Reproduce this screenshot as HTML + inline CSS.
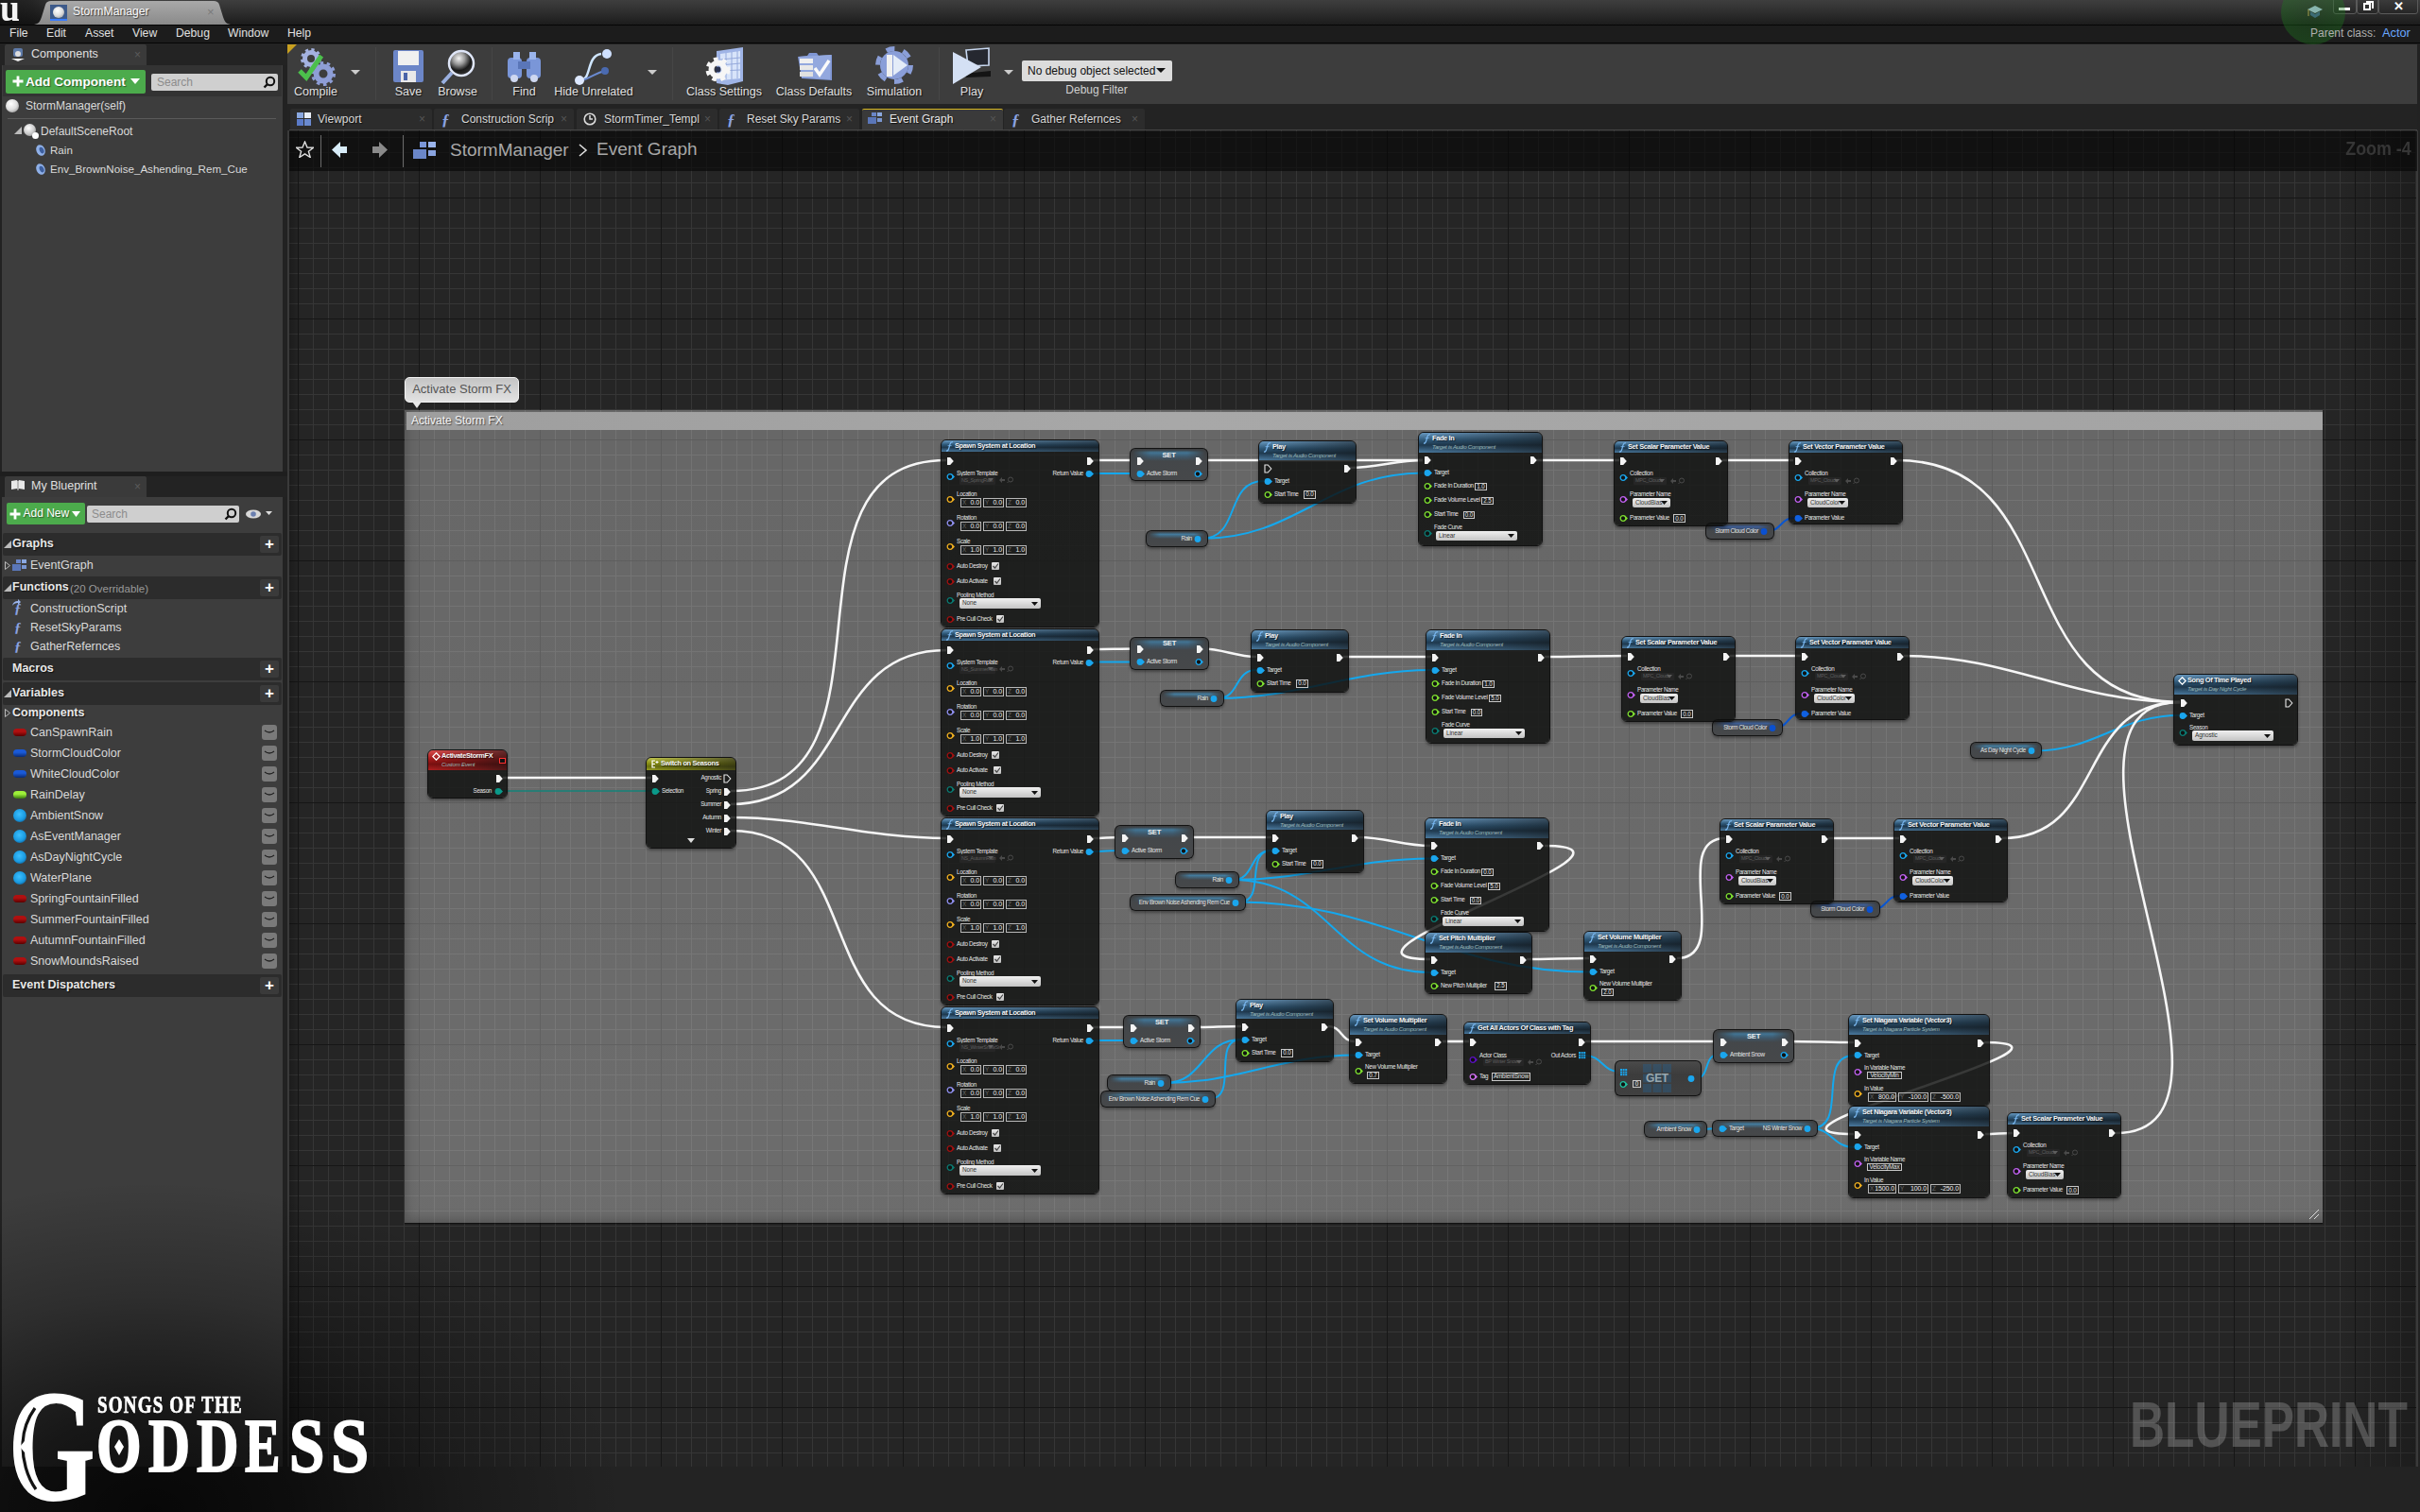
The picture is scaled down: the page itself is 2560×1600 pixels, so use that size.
<!DOCTYPE html><html><head><meta charset="utf-8"><title>StormManager</title><style>
html,body{margin:0;padding:0;width:2560px;height:1600px;overflow:hidden;background:#222;font-family:"Liberation Sans",sans-serif;}
body div,body svg{position:absolute;box-sizing:border-box;}
.t{white-space:nowrap;}
</style></head><body>
<div style="left:0px;top:0px;width:2560px;height:1600px;background:#222;"></div>
<div style="left:0px;top:0px;width:2560px;height:26px;background:linear-gradient(#3e3e3e 0%,#2e2e2e 50%,#1c1c1c 100%);"></div>
<div style="left:0px;top:0px;width:70px;height:26px;background:linear-gradient(to right,rgba(8,8,8,0.6),rgba(8,8,8,0.45) 50%,rgba(8,8,8,0));"></div>
<div class="t" style="left:0px;top:-12px;font-size:41px;line-height:41px;font-family:'Liberation Serif',serif;font-weight:bold;color:#f4f4f4;transform-origin:0 0;transform:scaleX(0.92);">u</div>
<svg style="left:30px;top:0px" width="225" height="27"><defs><linearGradient id="tg" x1="0" y1="0" x2="0" y2="1"><stop offset="0" stop-color="#a9a9a9"/><stop offset="1" stop-color="#8a8a8a"/></linearGradient></defs><path d="M4 26 C10 26 12 24 14 18 L18 5 C19 2 21 1 24 1 L196 1 C199 1 201 2 202 5 L206 18 C208 24 210 26 216 26 Z" fill="url(#tg)"/></svg>
<div style="left:53px;top:5px;width:18px;height:17px;background:#3d5a8a;border-bottom:2px solid #3a7cff;"></div>
<div style="left:56px;top:7px;width:12px;height:12px;border-radius:50%;background:radial-gradient(circle at 40% 35%,#fff 0%,#ddd 50%,#888 100%);"></div>
<div class="t" style="left:77px;top:4.88px;font-size:12.2px;line-height:15.25px;color:#fafafa;text-shadow:1px 1px 1px #333;">StormManager</div>
<div class="t" style="left:219px;top:4.88px;font-size:13px;line-height:16.25px;color:#7a7a7a;">×</div>
<div style="left:2468px;top:-2px;width:25px;height:17px;background:linear-gradient(#3c3c3c,#262626);border:1px solid #5a5a5a;border-radius:0 0 3px 3px;"></div>
<div style="left:2493px;top:-2px;width:23px;height:17px;background:linear-gradient(#3c3c3c,#262626);border:1px solid #5a5a5a;border-radius:0 0 3px 3px;"></div>
<div style="left:2516px;top:-2px;width:42px;height:17px;background:linear-gradient(#3c3c3c,#262626);border:1px solid #5a5a5a;border-radius:0 0 3px 3px;"></div>
<div style="left:2474px;top:8px;width:12px;height:3px;background:#fff;"></div>
<div style="left:2500px;top:3px;width:8px;height:8px;border:2px solid #fff;"></div>
<div style="left:2503px;top:1px;width:8px;height:8px;border-top:2px solid #fff;border-right:2px solid #fff;"></div>
<div class="t" style="left:2037px;width:1000px;text-align:center;top:-1.12px;font-size:13px;line-height:16.25px;color:#fff;font-weight:bold;">✕</div>
<svg style="left:2440px;top:4px" width="18" height="16"><path d="M1 6 L9 2 L17 6 L9 10 Z" fill="#b8d4f0"/><path d="M4 8 L4 12 L9 15 L14 12 L14 8 L9 11 Z" fill="#4a6a9a"/><path d="M2 6 L2 13" stroke="#e0b060" stroke-width="1"/></svg>
<div style="left:0px;top:26px;width:2560px;height:20px;background:#1c1c1c;border-top:1px solid #050505;border-bottom:1px solid #050505;"></div>
<div class="t" style="left:10px;top:27.88px;font-size:12.2px;line-height:15.25px;color:#e0e0e0;">File</div>
<div class="t" style="left:49px;top:27.88px;font-size:12.2px;line-height:15.25px;color:#e0e0e0;">Edit</div>
<div class="t" style="left:90px;top:27.88px;font-size:12.2px;line-height:15.25px;color:#e0e0e0;">Asset</div>
<div class="t" style="left:140px;top:27.88px;font-size:12.2px;line-height:15.25px;color:#e0e0e0;">View</div>
<div class="t" style="left:186px;top:27.88px;font-size:12.2px;line-height:15.25px;color:#e0e0e0;">Debug</div>
<div class="t" style="left:241px;top:27.88px;font-size:12.2px;line-height:15.25px;color:#e0e0e0;">Window</div>
<div class="t" style="left:304px;top:27.88px;font-size:12.2px;line-height:15.25px;color:#e0e0e0;">Help</div>
<div style="left:2413px;top:-21px;width:68px;height:68px;border-radius:50%;background:radial-gradient(circle,rgba(30,110,30,0.30) 0%,rgba(30,120,30,0.38) 70%,rgba(30,120,30,0) 100%);"></div>
<div class="t" style="left:2444px;top:27.50px;font-size:12px;line-height:15.0px;color:#b0b0b0;">Parent class:</div>
<div class="t" style="left:2520px;top:27.00px;font-size:12.8px;line-height:16.0px;color:#6aa8ff;">Actor</div>
<div style="left:0px;top:46px;width:304px;height:23px;background:#232323;"></div>
<div style="left:5px;top:47px;width:150px;height:22px;background:#3a3a3a;border-radius:2px 2px 0 0;"></div>
<svg style="left:11px;top:50px" width="16" height="16"><rect x="3" y="1" width="10" height="9" rx="2" fill="#5e7aa8"/><circle cx="8" cy="7" r="3" fill="#ddd"/><path d="M1 12 L15 12 L8 15 Z" fill="#eee"/></svg>
<div class="t" style="left:33px;top:50.19px;font-size:12.5px;line-height:15.62px;color:#e0e0e0;">Components</div>
<div class="t" style="left:142px;top:50.50px;font-size:12px;line-height:15.0px;color:#5a5a5a;">×</div>
<div style="left:2px;top:69px;width:297px;height:430px;background:#3d3d3d;"></div>
<div style="left:3px;top:69px;width:295px;height:33px;background:#333;"></div>
<div style="left:6px;top:74px;width:148px;height:25px;background:#4cab4c;border-radius:2px;"></div>
<svg style="left:13px;top:80px" width="12" height="12"><path d="M6 0.5 L6 11.5 M0.5 6 L11.5 6" stroke="#fff" stroke-width="2.8"/></svg>
<div class="t" style="left:27px;top:78.00px;font-size:13.6px;line-height:17.0px;color:#fff;font-weight:bold;text-shadow:1px 1px 1px #2a5a2a;">Add Component</div>
<svg style="left:138px;top:83px" width="10" height="7"><path d="M0 0 L10 0 L5 6 Z" fill="#fff"/></svg>
<div style="left:160px;top:78px;width:134px;height:18px;background:#cfcfcf;border-radius:2px;"></div>
<div class="t" style="left:166px;top:79.50px;font-size:12px;line-height:15.0px;color:#8c8c8c;">Search</div>
<svg style="left:278px;top:80px" width="14" height="14"><circle cx="8" cy="6" r="4.2" fill="none" stroke="#111" stroke-width="2"/><path d="M5 9 L1.5 12.5" stroke="#111" stroke-width="2.4"/></svg>
<div style="left:6px;top:105px;width:14px;height:14px;border-radius:50%;background:radial-gradient(circle at 40% 35%,#fff 0%,#ddd 50%,#777 100%);"></div>
<div class="t" style="left:27px;top:104.50px;font-size:12px;line-height:15.0px;color:#dadada;">StormManager(self)</div>
<div style="left:8px;top:125px;width:284px;height:1px;background:#5a5a5a;"></div>
<svg style="left:15px;top:134px" width="8" height="8"><path d="M8 0 L8 8 L0 8 Z" fill="#bbb"/></svg>
<div style="left:25px;top:131px;width:13px;height:13px;border-radius:50%;background:radial-gradient(circle at 40% 35%,#fff 0%,#ccc 50%,#777 100%);"></div>
<div style="left:34px;top:140px;width:7px;height:7px;border-radius:50%;background:#fff;"></div>
<div class="t" style="left:43px;top:131.50px;font-size:12px;line-height:15.0px;color:#dadada;">DefaultSceneRoot</div>
<svg style="left:37px;top:152px" width="12" height="14"><ellipse cx="6" cy="7" rx="4.5" ry="6" fill="#8fb0e8" transform="rotate(-25 6 7)"/><ellipse cx="7" cy="7.5" rx="2.2" ry="3.5" fill="#3d5f9f" transform="rotate(-25 6 7)"/></svg>
<div class="t" style="left:53px;top:151.75px;font-size:11.6px;line-height:14.5px;color:#dadada;">Rain</div>
<svg style="left:37px;top:172px" width="12" height="14"><ellipse cx="6" cy="7" rx="4.5" ry="6" fill="#8fb0e8" transform="rotate(-25 6 7)"/><ellipse cx="7" cy="7.5" rx="2.2" ry="3.5" fill="#3d5f9f" transform="rotate(-25 6 7)"/></svg>
<div class="t" style="left:53px;top:171.75px;font-size:11.6px;line-height:14.5px;color:#dadada;">Env_BrownNoise_Ashending_Rem_Cue</div>
<div style="left:0px;top:499px;width:304px;height:5px;background:#1e1e1e;"></div>
<div style="left:0px;top:504px;width:304px;height:22px;background:#232323;"></div>
<div style="left:5px;top:504px;width:150px;height:22px;background:#3a3a3a;border-radius:2px 2px 0 0;"></div>
<svg style="left:11px;top:507px" width="16" height="14"><path d="M1 2 L7 1 L8 3 L9 1 L15 2 L15 11 L9 10 L8 12 L7 10 L1 11 Z" fill="#e8e8e8"/><path d="M8 3 L8 12" stroke="#888" stroke-width="1"/></svg>
<div class="t" style="left:33px;top:507.19px;font-size:12.5px;line-height:15.62px;color:#e0e0e0;">My Blueprint</div>
<div class="t" style="left:142px;top:507.50px;font-size:12px;line-height:15.0px;color:#5a5a5a;">×</div>
<div style="left:2px;top:526px;width:297px;height:1026px;background:#3d3d3d;"></div>
<div style="left:7px;top:532px;width:83px;height:23px;background:#4cab4c;border-radius:2px;"></div>
<svg style="left:10px;top:538px" width="12" height="12"><path d="M6 0.5 L6 11.5 M0.5 6 L11.5 6" stroke="#fff" stroke-width="2.8"/></svg>
<div class="t" style="left:24.5px;top:536.00px;font-size:12px;line-height:15.0px;color:#fff;text-shadow:1px 1px 1px #2a5a2a;">Add New</div>
<svg style="left:76px;top:541px" width="9" height="6"><path d="M0 0 L9 0 L4.5 6 Z" fill="#fff"/></svg>
<div style="left:92px;top:535px;width:161px;height:18px;background:#cfcfcf;border-radius:2px;"></div>
<div class="t" style="left:97px;top:536.50px;font-size:12px;line-height:15.0px;color:#8c8c8c;">Search</div>
<svg style="left:237px;top:537px" width="14" height="14"><circle cx="8" cy="6" r="4.2" fill="none" stroke="#111" stroke-width="2"/><path d="M5 9 L1.5 12.5" stroke="#111" stroke-width="2.4"/></svg>
<svg style="left:259px;top:538px" width="30" height="12"><ellipse cx="9" cy="6" rx="8" ry="4.5" fill="#d8d8d8"/><circle cx="9" cy="6" r="2.8" fill="#6a7fb0"/><path d="M22 3 L29 3 L25.5 7 Z" fill="#ddd"/></svg>
<div style="left:3px;top:564px;width:295px;height:24px;background:#2c2c2c;border-radius:2px;"></div>
<svg style="left:4px;top:572px" width="8" height="8"><path d="M8 0 L8 8 L0 8 Z" fill="#bbb"/></svg>
<div class="t" style="left:13px;top:568.19px;font-size:12.5px;line-height:15.62px;color:#e8e8e8;font-weight:bold;text-shadow:1px 1px 1px #111;">Graphs</div>
<div style="left:275px;top:567px;width:20px;height:18px;background:#3a3a3a;border-radius:2px;"></div>
<div class="t" style="left:-215px;width:1000px;text-align:center;top:567.00px;font-size:17px;line-height:18px;color:#fff;font-weight:bold;">+</div>
<svg style="left:5px;top:594px" width="6" height="9"><path d="M0.5 0.5 L5.5 4.5 L0.5 8.5 Z" fill="none" stroke="#bbb" stroke-width="1"/></svg>
<svg style="left:13px;top:591px" width="16" height="15"><rect x="4" y="1" width="5" height="4" fill="#6a86c8"/><rect x="10" y="1" width="5" height="4" fill="#8aa8e0"/><rect x="0" y="6" width="9" height="7" fill="#5a76b8"/><rect x="10" y="7" width="5" height="4" fill="#7a96d0"/></svg>
<div class="t" style="left:32px;top:590.69px;font-size:12.5px;line-height:15.62px;color:#dadada;">EventGraph</div>
<div style="left:3px;top:610px;width:295px;height:24px;background:#2c2c2c;border-radius:2px;"></div>
<svg style="left:4px;top:618px" width="8" height="8"><path d="M8 0 L8 8 L0 8 Z" fill="#bbb"/></svg>
<div class="t" style="left:13px;top:614.19px;font-size:12.5px;line-height:15.62px;color:#e8e8e8;font-weight:bold;text-shadow:1px 1px 1px #111;">Functions</div>
<div class="t" style="left:74px;top:615.81px;font-size:11.5px;line-height:14.38px;color:#9a9a9a;">(20 Overridable)</div>
<div style="left:275px;top:613px;width:20px;height:18px;background:#3a3a3a;border-radius:2px;"></div>
<div class="t" style="left:-215px;width:1000px;text-align:center;top:613.00px;font-size:17px;line-height:18px;color:#fff;font-weight:bold;">+</div>
<div class="t" style="left:15px;top:635.33px;font-size:15px;line-height:18.75px;color:#8aa2e0;font-weight:bold;font-style:italic;font-family:'Liberation Serif',serif;">ƒ</div>
<svg style="left:12px;top:633.7px" width="10" height="8"><path d="M1 7 Q2 2 7 2 L7 0 L10 3 L7 6 L7 4 Q3 4 1 7 Z" fill="#9ab4ec"/></svg>
<div class="t" style="left:32px;top:636.89px;font-size:12.5px;line-height:15.62px;color:#dadada;">ConstructionScript</div>
<div class="t" style="left:15px;top:655.23px;font-size:15px;line-height:18.75px;color:#8aa2e0;font-weight:bold;font-style:italic;font-family:'Liberation Serif',serif;">ƒ</div>
<div class="t" style="left:32px;top:656.79px;font-size:12.5px;line-height:15.62px;color:#dadada;">ResetSkyParams</div>
<div class="t" style="left:15px;top:675.23px;font-size:15px;line-height:18.75px;color:#8aa2e0;font-weight:bold;font-style:italic;font-family:'Liberation Serif',serif;">ƒ</div>
<div class="t" style="left:32px;top:676.79px;font-size:12.5px;line-height:15.62px;color:#dadada;">GatherRefernces</div>
<div style="left:3px;top:696px;width:295px;height:24px;background:#2c2c2c;border-radius:2px;"></div>
<div class="t" style="left:13px;top:700.19px;font-size:12.5px;line-height:15.62px;color:#e8e8e8;font-weight:bold;text-shadow:1px 1px 1px #111;">Macros</div>
<div style="left:275px;top:699px;width:20px;height:18px;background:#3a3a3a;border-radius:2px;"></div>
<div class="t" style="left:-215px;width:1000px;text-align:center;top:699.00px;font-size:17px;line-height:18px;color:#fff;font-weight:bold;">+</div>
<div style="left:3px;top:722px;width:295px;height:24px;background:#2c2c2c;border-radius:2px;"></div>
<svg style="left:4px;top:730px" width="8" height="8"><path d="M8 0 L8 8 L0 8 Z" fill="#bbb"/></svg>
<div class="t" style="left:13px;top:726.19px;font-size:12.5px;line-height:15.62px;color:#e8e8e8;font-weight:bold;text-shadow:1px 1px 1px #111;">Variables</div>
<div style="left:275px;top:725px;width:20px;height:18px;background:#3a3a3a;border-radius:2px;"></div>
<div class="t" style="left:-215px;width:1000px;text-align:center;top:725.00px;font-size:17px;line-height:18px;color:#fff;font-weight:bold;">+</div>
<svg style="left:5px;top:750px" width="6" height="9"><path d="M0.5 0.5 L5.5 4.5 L0.5 8.5 Z" fill="none" stroke="#bbb" stroke-width="1"/></svg>
<div class="t" style="left:13px;top:747.19px;font-size:12.5px;line-height:15.62px;color:#e8e8e8;font-weight:bold;text-shadow:1px 1px 1px #111;">Components</div>
<div style="left:14px;top:771.4px;width:14px;height:8px;border-radius:4px;background:linear-gradient(#b01010 40%,#5a0000 100%);"></div>
<div class="t" style="left:32px;top:767.59px;font-size:12.5px;line-height:15.62px;color:#dadada;">CanSpawnRain</div>
<div style="left:277px;top:767.4px;width:16px;height:16px;background:#7a7a7a;border-radius:3px;"></div>
<svg style="left:279px;top:772.4px" width="12" height="5"><path d="M1 1 Q6 5 11 1" fill="none" stroke="#222" stroke-width="1.3"/></svg>
<div style="left:14px;top:793.4px;width:14px;height:8px;border-radius:4px;background:linear-gradient(#1a5ad8 40%,#0a2a70 100%);"></div>
<div class="t" style="left:32px;top:789.59px;font-size:12.5px;line-height:15.62px;color:#dadada;">StormCloudColor</div>
<div style="left:277px;top:789.4px;width:16px;height:16px;background:#7a7a7a;border-radius:3px;"></div>
<svg style="left:279px;top:794.4px" width="12" height="5"><path d="M1 1 Q6 5 11 1" fill="none" stroke="#222" stroke-width="1.3"/></svg>
<div style="left:14px;top:815.4px;width:14px;height:8px;border-radius:4px;background:linear-gradient(#1a5ad8 40%,#0a2a70 100%);"></div>
<div class="t" style="left:32px;top:811.59px;font-size:12.5px;line-height:15.62px;color:#dadada;">WhiteCloudColor</div>
<div style="left:277px;top:811.4px;width:16px;height:16px;background:#7a7a7a;border-radius:3px;"></div>
<svg style="left:279px;top:816.4px" width="12" height="5"><path d="M1 1 Q6 5 11 1" fill="none" stroke="#222" stroke-width="1.3"/></svg>
<div style="left:14px;top:837.4px;width:14px;height:8px;border-radius:4px;background:linear-gradient(#9ef03a 40%,#3a7a10 100%);"></div>
<div class="t" style="left:32px;top:833.59px;font-size:12.5px;line-height:15.62px;color:#dadada;">RainDelay</div>
<div style="left:277px;top:833.4px;width:16px;height:16px;background:#7a7a7a;border-radius:3px;"></div>
<svg style="left:279px;top:838.4px" width="12" height="5"><path d="M1 1 Q6 5 11 1" fill="none" stroke="#222" stroke-width="1.3"/></svg>
<div style="left:14px;top:856.4px;width:14px;height:14px;border-radius:50%;background:radial-gradient(circle at 45% 40%,#3cc0ff 0%,#1a9ae0 55%,#0a3a66 100%);"></div>
<div class="t" style="left:32px;top:855.59px;font-size:12.5px;line-height:15.62px;color:#dadada;">AmbientSnow</div>
<div style="left:277px;top:855.4px;width:16px;height:16px;background:#7a7a7a;border-radius:3px;"></div>
<svg style="left:279px;top:860.4px" width="12" height="5"><path d="M1 1 Q6 5 11 1" fill="none" stroke="#222" stroke-width="1.3"/></svg>
<div style="left:14px;top:878.4px;width:14px;height:14px;border-radius:50%;background:radial-gradient(circle at 45% 40%,#3cc0ff 0%,#1a9ae0 55%,#0a3a66 100%);"></div>
<div class="t" style="left:32px;top:877.59px;font-size:12.5px;line-height:15.62px;color:#dadada;">AsEventManager</div>
<div style="left:277px;top:877.4px;width:16px;height:16px;background:#7a7a7a;border-radius:3px;"></div>
<svg style="left:279px;top:882.4px" width="12" height="5"><path d="M1 1 Q6 5 11 1" fill="none" stroke="#222" stroke-width="1.3"/></svg>
<div style="left:14px;top:900.4px;width:14px;height:14px;border-radius:50%;background:radial-gradient(circle at 45% 40%,#3cc0ff 0%,#1a9ae0 55%,#0a3a66 100%);"></div>
<div class="t" style="left:32px;top:899.59px;font-size:12.5px;line-height:15.62px;color:#dadada;">AsDayNightCycle</div>
<div style="left:277px;top:899.4px;width:16px;height:16px;background:#7a7a7a;border-radius:3px;"></div>
<svg style="left:279px;top:904.4px" width="12" height="5"><path d="M1 1 Q6 5 11 1" fill="none" stroke="#222" stroke-width="1.3"/></svg>
<div style="left:14px;top:922.4px;width:14px;height:14px;border-radius:50%;background:radial-gradient(circle at 45% 40%,#3cc0ff 0%,#1a9ae0 55%,#0a3a66 100%);"></div>
<div class="t" style="left:32px;top:921.59px;font-size:12.5px;line-height:15.62px;color:#dadada;">WaterPlane</div>
<div style="left:277px;top:921.4px;width:16px;height:16px;background:#7a7a7a;border-radius:3px;"></div>
<svg style="left:279px;top:926.4px" width="12" height="5"><path d="M1 1 Q6 5 11 1" fill="none" stroke="#222" stroke-width="1.3"/></svg>
<div style="left:14px;top:947.4px;width:14px;height:8px;border-radius:4px;background:linear-gradient(#b01010 40%,#5a0000 100%);"></div>
<div class="t" style="left:32px;top:943.59px;font-size:12.5px;line-height:15.62px;color:#dadada;">SpringFountainFilled</div>
<div style="left:277px;top:943.4px;width:16px;height:16px;background:#7a7a7a;border-radius:3px;"></div>
<svg style="left:279px;top:948.4px" width="12" height="5"><path d="M1 1 Q6 5 11 1" fill="none" stroke="#222" stroke-width="1.3"/></svg>
<div style="left:14px;top:969.4px;width:14px;height:8px;border-radius:4px;background:linear-gradient(#b01010 40%,#5a0000 100%);"></div>
<div class="t" style="left:32px;top:965.59px;font-size:12.5px;line-height:15.62px;color:#dadada;">SummerFountainFilled</div>
<div style="left:277px;top:965.4px;width:16px;height:16px;background:#7a7a7a;border-radius:3px;"></div>
<svg style="left:279px;top:970.4px" width="12" height="5"><path d="M1 1 Q6 5 11 1" fill="none" stroke="#222" stroke-width="1.3"/></svg>
<div style="left:14px;top:991.4px;width:14px;height:8px;border-radius:4px;background:linear-gradient(#b01010 40%,#5a0000 100%);"></div>
<div class="t" style="left:32px;top:987.59px;font-size:12.5px;line-height:15.62px;color:#dadada;">AutumnFountainFilled</div>
<div style="left:277px;top:987.4px;width:16px;height:16px;background:#7a7a7a;border-radius:3px;"></div>
<svg style="left:279px;top:992.4px" width="12" height="5"><path d="M1 1 Q6 5 11 1" fill="none" stroke="#222" stroke-width="1.3"/></svg>
<div style="left:14px;top:1013.4px;width:14px;height:8px;border-radius:4px;background:linear-gradient(#b01010 40%,#5a0000 100%);"></div>
<div class="t" style="left:32px;top:1009.59px;font-size:12.5px;line-height:15.62px;color:#dadada;">SnowMoundsRaised</div>
<div style="left:277px;top:1009.4px;width:16px;height:16px;background:#7a7a7a;border-radius:3px;"></div>
<svg style="left:279px;top:1014.4px" width="12" height="5"><path d="M1 1 Q6 5 11 1" fill="none" stroke="#222" stroke-width="1.3"/></svg>
<div style="left:3px;top:1031px;width:295px;height:24px;background:#2c2c2c;border-radius:2px;"></div>
<div class="t" style="left:13px;top:1035.19px;font-size:12.5px;line-height:15.62px;color:#e8e8e8;font-weight:bold;text-shadow:1px 1px 1px #111;">Event Dispatchers</div>
<div style="left:275px;top:1034px;width:20px;height:18px;background:#3a3a3a;border-radius:2px;"></div>
<div class="t" style="left:-215px;width:1000px;text-align:center;top:1034.00px;font-size:17px;line-height:18px;color:#fff;font-weight:bold;">+</div>
<div style="left:304px;top:47px;width:2253px;height:63px;background:#3d3d3d;"></div>
<svg style="left:304px;top:47px" width="10" height="10"><path d="M0 0 L10 0 L0 10 Z" fill="#c8a020"/></svg>
<div style="left:397px;top:50px;width:1px;height:56px;background:#2a2a2a;border-right:1px solid #464646;"></div>
<div style="left:520px;top:50px;width:1px;height:56px;background:#2a2a2a;border-right:1px solid #464646;"></div>
<div style="left:711px;top:50px;width:1px;height:56px;background:#2a2a2a;border-right:1px solid #464646;"></div>
<div style="left:993px;top:50px;width:1px;height:56px;background:#2a2a2a;border-right:1px solid #464646;"></div>
<div class="t" style="left:-166px;width:1000px;text-align:center;top:89.69px;font-size:12.5px;line-height:15.62px;color:#e0e0e0;text-shadow:1px 1px 1px #111;">Compile</div>
<div class="t" style="left:-68px;width:1000px;text-align:center;top:89.69px;font-size:12.5px;line-height:15.62px;color:#e0e0e0;text-shadow:1px 1px 1px #111;">Save</div>
<div class="t" style="left:-16px;width:1000px;text-align:center;top:89.69px;font-size:12.5px;line-height:15.62px;color:#e0e0e0;text-shadow:1px 1px 1px #111;">Browse</div>
<div class="t" style="left:54.5px;width:1000px;text-align:center;top:89.69px;font-size:12.5px;line-height:15.62px;color:#e0e0e0;text-shadow:1px 1px 1px #111;">Find</div>
<div class="t" style="left:128px;width:1000px;text-align:center;top:89.69px;font-size:12.5px;line-height:15.62px;color:#e0e0e0;text-shadow:1px 1px 1px #111;">Hide Unrelated</div>
<div class="t" style="left:266px;width:1000px;text-align:center;top:89.69px;font-size:12.5px;line-height:15.62px;color:#e0e0e0;text-shadow:1px 1px 1px #111;">Class Settings</div>
<div class="t" style="left:361px;width:1000px;text-align:center;top:89.69px;font-size:12.5px;line-height:15.62px;color:#e0e0e0;text-shadow:1px 1px 1px #111;">Class Defaults</div>
<div class="t" style="left:446px;width:1000px;text-align:center;top:89.69px;font-size:12.5px;line-height:15.62px;color:#e0e0e0;text-shadow:1px 1px 1px #111;">Simulation</div>
<div class="t" style="left:528px;width:1000px;text-align:center;top:89.69px;font-size:12.5px;line-height:15.62px;color:#e0e0e0;text-shadow:1px 1px 1px #111;">Play</div>
<svg style="left:371px;top:74px" width="10" height="6"><path d="M0 0 L10 0 L5 5 Z" fill="#ccc"/></svg>
<svg style="left:685px;top:74px" width="10" height="6"><path d="M0 0 L10 0 L5 5 Z" fill="#ccc"/></svg>
<svg style="left:1062px;top:74px" width="10" height="6"><path d="M0 0 L10 0 L5 5 Z" fill="#ccc"/></svg>
<svg style="left:314px;top:50px" width="44" height="42"><circle cx="15" cy="12" r="6.5" fill="none" stroke="#a4b2e0" stroke-width="5"/><circle cx="15" cy="12" r="9.5" fill="none" stroke="#a4b2e0" stroke-width="3" stroke-dasharray="3.2 3.2"/><circle cx="28" cy="28" r="7.5" fill="none" stroke="#8e9ed6" stroke-width="6"/><circle cx="28" cy="28" r="11.5" fill="none" stroke="#8e9ed6" stroke-width="3" stroke-dasharray="3.6 3.6"/><path d="M3 25 L10 32 L26 9" fill="none" stroke="#4cbf4c" stroke-width="5"/></svg>
<svg style="left:416px;top:53px" width="32" height="35"><rect x="0" y="0" width="32" height="34" rx="2" fill="#6c86c8"/><rect x="5" y="1" width="22" height="15" fill="#f0f0f0"/><rect x="8" y="22" width="16" height="12" fill="#e8e8e8"/><rect x="11" y="24" width="4" height="8" fill="#4a64a8"/></svg>
<svg style="left:464px;top:51px" width="42" height="40"><defs><radialGradient id="lens" cx="0.4" cy="0.3" r="0.7"><stop offset="0" stop-color="#f4f4f4"/><stop offset="0.35" stop-color="#9a9a9a"/><stop offset="0.7" stop-color="#1a1a1a"/><stop offset="1" stop-color="#333"/></radialGradient></defs><path d="M14 26 L4 37" stroke="#9ab0e0" stroke-width="4"/><circle cx="24" cy="16" r="13" fill="url(#lens)" stroke="#dfe6f8" stroke-width="2.5"/></svg>
<svg style="left:535px;top:53px" width="40" height="36"><rect x="2" y="8" width="15" height="22" rx="4" fill="#7a96d8"/><rect x="22" y="8" width="15" height="22" rx="4" fill="#7a96d8"/><rect x="13" y="12" width="13" height="8" fill="#5a76b8"/><circle cx="9" cy="30" r="4" fill="#cfd8f0"/><circle cx="30" cy="30" r="4" fill="#cfd8f0"/><rect x="8" y="2" width="7" height="8" fill="#9ab4ec"/><rect x="25" y="2" width="7" height="8" fill="#9ab4ec"/></svg>
<svg style="left:606px;top:51px" width="44" height="40"><path d="M8 34 C20 34 14 8 30 6" fill="none" stroke="#cfe6ff" stroke-width="2.5"/><path d="M10 34 C22 30 24 26 34 24" fill="none" stroke="#6a8ad0" stroke-width="2"/><circle cx="7" cy="34" r="5" fill="#dde8ff"/><circle cx="36" cy="6" r="5" fill="#cfe0ff"/><circle cx="34" cy="24" r="4" fill="#4a6ab0"/></svg>
<svg style="left:740px;top:48px" width="50" height="46"><path d="M18 6 L46 2 L46 38 L30 42 L18 40 Z" fill="#9fb4e6"/><path d="M22 9 L43 6 L43 35 L22 37 Z" fill="#d8e4fa"/><path d="M28 8 L28 36 M34 7 L34 36 M40 6 L40 35 M22 15 L43 13 M22 21 L43 19 M22 27 L43 26" stroke="#8ea4d8" stroke-width="0.9"/><circle cx="19.5" cy="25.5" r="7" fill="none" stroke="#f6f6f6" stroke-width="6"/><circle cx="19.5" cy="25.5" r="11" fill="none" stroke="#f6f6f6" stroke-width="4" stroke-dasharray="4.6 4.8"/><circle cx="19.5" cy="25.5" r="3" fill="#2a3350"/></svg>
<svg style="left:842px;top:52px" width="40" height="36"><path d="M2 8 L12 7 L14 4 L22 4 L24 7 L38 6 L38 33 L6 31 Z" fill="#7f96d4"/><path d="M3 8 L37 6 L36 32 L6 30 Z" fill="#93a8de"/><rect x="4" y="10" width="14" height="5" fill="#f0f0f0"/><rect x="4" y="17" width="14" height="5" fill="#e8e8e8"/><rect x="4" y="24" width="14" height="5" fill="#e0e0e0"/><path d="M20 20 L25 27 L35 12" fill="none" stroke="#fafafa" stroke-width="3.4"/></svg>
<svg style="left:925px;top:48px" width="44" height="44"><circle cx="21" cy="21" r="15" fill="#8a9ed8"/><circle cx="21" cy="21" r="17.5" fill="none" stroke="#8a9ed8" stroke-width="5" stroke-dasharray="9 9.33"/><rect x="13" y="10" width="6" height="23" fill="#f0f0f0"/><path d="M20 10 L35 21 L20 32 Z" fill="#e4ecf8"/></svg>
<svg style="left:1006px;top:50px" width="44" height="42"><path d="M16 3 L40 1 L40 19 L18 20 Z" fill="#252830" stroke="#c8d8f0" stroke-width="1.6"/><path d="M14 28 L42 25 L42 31 L16 32 Z" fill="#141414"/><path d="M2 5 L32 21 L2 39 Z" fill="#d4e0f4"/></svg>
<div style="left:1081px;top:64px;width:159px;height:22px;background:#dcdcdc;border-radius:2px;"></div>
<div class="t" style="left:1087px;top:67.50px;font-size:12px;line-height:15.0px;color:#111;">No debug object selected</div>
<svg style="left:1223px;top:72px" width="10" height="6"><path d="M0 0 L10 0 L5 5 Z" fill="#111"/></svg>
<div class="t" style="left:660px;width:1000px;text-align:center;top:87.50px;font-size:12px;line-height:15.0px;color:#d0d0d0;">Debug Filter</div>
<div style="left:304px;top:110px;width:2253px;height:28px;background:#232323;"></div>
<div style="left:307px;top:115px;width:150px;height:23px;background:#2c2c2c;border-radius:2px 2px 0 0;"></div>
<svg style="left:314px;top:119px" width="15" height="14"><rect x="0" y="0" width="7" height="6" fill="#8aa8e0"/><rect x="8" y="0" width="7" height="6" fill="#e8eef8"/><rect x="0" y="7" width="7" height="7" fill="#5a7ac8"/><rect x="8" y="7" width="7" height="7" fill="#6a8ad0"/></svg>
<div class="t" style="left:336px;top:118.50px;font-size:12px;line-height:15.0px;color:#d8d8d8;text-shadow:1px 1px 1px #111;">Viewport</div>
<div class="t" style="left:443px;top:118.50px;font-size:12px;line-height:15.0px;color:#555;">×</div>
<div style="left:459px;top:115px;width:148px;height:23px;background:#2c2c2c;border-radius:2px 2px 0 0;"></div>
<div class="t" style="left:467px;top:115.88px;font-size:17px;line-height:21.25px;color:#8aa2e0;font-weight:bold;font-style:italic;font-family:'Liberation Serif',serif;">ƒ</div>
<div class="t" style="left:488px;top:118.50px;font-size:12px;line-height:15.0px;color:#d8d8d8;text-shadow:1px 1px 1px #111;">Construction Scrip</div>
<div class="t" style="left:593px;top:118.50px;font-size:12px;line-height:15.0px;color:#555;">×</div>
<div style="left:610px;top:115px;width:149px;height:23px;background:#2c2c2c;border-radius:2px 2px 0 0;"></div>
<svg style="left:617px;top:119px" width="14" height="14"><circle cx="7" cy="7" r="5.8" fill="none" stroke="#ddd" stroke-width="1.6"/><path d="M7 3 L7 7 L10 7" fill="none" stroke="#ddd" stroke-width="1.5"/></svg>
<div class="t" style="left:639px;top:118.50px;font-size:12px;line-height:15.0px;color:#d8d8d8;text-shadow:1px 1px 1px #111;">StormTimer_Templ</div>
<div class="t" style="left:745px;top:118.50px;font-size:12px;line-height:15.0px;color:#555;">×</div>
<div style="left:761px;top:115px;width:148px;height:23px;background:#2c2c2c;border-radius:2px 2px 0 0;"></div>
<div class="t" style="left:769px;top:115.88px;font-size:17px;line-height:21.25px;color:#8aa2e0;font-weight:bold;font-style:italic;font-family:'Liberation Serif',serif;">ƒ</div>
<div class="t" style="left:790px;top:118.50px;font-size:12px;line-height:15.0px;color:#d8d8d8;text-shadow:1px 1px 1px #111;">Reset Sky Params</div>
<div class="t" style="left:895px;top:118.50px;font-size:12px;line-height:15.0px;color:#555;">×</div>
<div style="left:912px;top:115px;width:149px;height:23px;background:#3a3a3a;border-radius:2px 2px 0 0;border-top:1px solid #d8b820;"></div>
<svg style="left:918px;top:119px" width="16" height="14"><rect x="4" y="0" width="5" height="4" fill="#6a86c8"/><rect x="10" y="0" width="5" height="4" fill="#8aa8e0"/><rect x="0" y="5" width="9" height="7" fill="#5a76b8"/><rect x="10" y="6" width="5" height="4" fill="#7a96d0"/></svg>
<div class="t" style="left:941px;top:118.50px;font-size:12px;line-height:15.0px;color:#e8e8e8;text-shadow:1px 1px 1px #111;">Event Graph</div>
<div class="t" style="left:1047px;top:118.50px;font-size:12px;line-height:15.0px;color:#555;">×</div>
<div style="left:1062px;top:115px;width:149px;height:23px;background:#2c2c2c;border-radius:2px 2px 0 0;"></div>
<div class="t" style="left:1070px;top:115.88px;font-size:17px;line-height:21.25px;color:#8aa2e0;font-weight:bold;font-style:italic;font-family:'Liberation Serif',serif;">ƒ</div>
<div class="t" style="left:1091px;top:118.50px;font-size:12px;line-height:15.0px;color:#d8d8d8;text-shadow:1px 1px 1px #111;">Gather Refernces</div>
<div class="t" style="left:1197px;top:118.50px;font-size:12px;line-height:15.0px;color:#555;">×</div>
<div style="left:306px;top:138px;width:2251px;height:1414px;background-color:#252525;background-image:linear-gradient(to right,#161616 1px,transparent 1px),linear-gradient(to bottom,#161616 1px,transparent 1px),linear-gradient(to right,#363636 1px,transparent 1px),linear-gradient(to bottom,#363636 1px,transparent 1px);background-size:128px 128px,128px 128px,16px 16px,16px 16px;background-position:9px 71px,9px 71px,9px 71px,9px 71px;"></div>
<div style="left:306px;top:138px;width:12px;height:1414px;background:linear-gradient(to right,rgba(0,0,0,0.25),rgba(0,0,0,0));"></div>
<div style="left:304px;top:138px;width:2px;height:1414px;background:#3a3a3a;"></div>
<div style="left:306px;top:137px;width:2251px;height:1px;background:#444;"></div>
<div style="left:2476px;top:138px;width:80px;height:1414px;background:linear-gradient(to right,rgba(0,0,0,0),rgba(0,0,0,0.22));"></div>
<div style="left:2556px;top:138px;width:2px;height:1414px;background:#3a3a3a;"></div>
<div style="left:428px;top:399px;width:121px;height:27px;background:linear-gradient(#c4c4c4,#e2e2e2);border:1.5px solid #f4f4f4;border-radius:5px;"></div>
<svg style="left:436px;top:425px" width="10" height="8"><path d="M0 0 L10 0 L5 7 Z" fill="#e8e8e8"/></svg>
<div class="t" style="left:-11.5px;width:1000px;text-align:center;top:404.38px;font-size:13px;line-height:16.25px;color:#555;">Activate Storm FX</div>
<div style="left:428px;top:434px;width:2029px;height:860px;background:linear-gradient(rgba(255,255,255,0.30),rgba(255,255,255,0.33));box-shadow:inset 8px -10px 14px -8px rgba(0,0,0,0.28),0 1px 1px rgba(0,0,0,0.5);"></div>
<div style="left:430px;top:436px;width:2027px;height:19px;background:linear-gradient(to right,#9e9e9e,#a8a8a8 40%,#a4a4a4);"></div>
<div class="t" style="left:435px;top:438.00px;font-size:12px;line-height:15.0px;color:#f4f4f4;text-shadow:1px 1px 1px #444;">Activate Storm FX</div>
<svg style="left:2440px;top:1277px" width="14" height="14"><path d="M13 3 L3 13 M13 8 L8 13" stroke="#ddd" stroke-width="1"/></svg>
<div class="t" style="left:2253.4px;top:1473px;font-size:68px;line-height:68px;font-family:'Liberation Sans',sans-serif;font-weight:bold;color:rgba(255,255,255,0.21);transform-origin:0 0;transform:scaleX(0.755);">BLUEPRINT</div>
<svg style="left:0;top:0" width="2560" height="1600"><path d="M531,837 C583.7,837 636.3,837 689,837" fill="none" stroke="#14837a" stroke-width="1.6"/><path d="M1156,501 C1171.3,501 1186.7,501 1202,501" fill="none" stroke="#14a8ee" stroke-width="2"/><path d="M1156,700.5 C1171.3,700.5 1186.7,700.5 1202,700.5" fill="none" stroke="#14a8ee" stroke-width="2"/><path d="M1156,901 C1166.0,901 1175.0,900 1185,900" fill="none" stroke="#14a8ee" stroke-width="2"/><path d="M1156,1101 C1168.7,1101 1181.3,1101 1194,1101" fill="none" stroke="#14a8ee" stroke-width="2"/><path d="M1271,570 C1313.3,570 1294.7,509 1337,509" fill="none" stroke="#14a8ee" stroke-width="2"/><path d="M1271,570 C1372.2,570 1403.8,500.5 1505,500.5" fill="none" stroke="#14a8ee" stroke-width="2"/><path d="M1288,739 C1311.7,739 1305.3,709 1329,709" fill="none" stroke="#14a8ee" stroke-width="2"/><path d="M1288,739 C1373.3,739 1428.7,709 1514,709" fill="none" stroke="#14a8ee" stroke-width="2"/><path d="M1304,931 C1328.0,931 1321.0,900 1345,900" fill="none" stroke="#14a8ee" stroke-width="2"/><path d="M1304,931 C1381.2,931 1435.8,908.5 1513,908.5" fill="none" stroke="#14a8ee" stroke-width="2"/><path d="M1304,931 C1406.3,931 1410.7,1029 1513,1029" fill="none" stroke="#14a8ee" stroke-width="2"/><path d="M1311,954.5 C1340.5,954.5 1315.5,900 1345,900" fill="none" stroke="#14a8ee" stroke-width="2"/><path d="M1311,954.5 C1459.0,954.5 1533.0,1028.5 1681,1028.5" fill="none" stroke="#14a8ee" stroke-width="2"/><path d="M1232,1146 C1274.3,1146 1270.7,1100 1313,1100" fill="none" stroke="#14a8ee" stroke-width="2"/><path d="M1232,1146 C1308.8,1146 1356.2,1116.5 1433,1116.5" fill="none" stroke="#14a8ee" stroke-width="2"/><path d="M1279,1163 C1311.3,1163 1280.7,1100 1313,1100" fill="none" stroke="#14a8ee" stroke-width="2"/><path d="M2153,794.5 C2216.2,794.5 2241.8,757 2305,757" fill="none" stroke="#14a8ee" stroke-width="2"/><path d="M1677,1117 C1694.7,1117 1695.3,1134 1713,1134" fill="none" stroke="#14a8ee" stroke-width="2"/><path d="M1793,1141.5 C1809.8,1141.5 1801.2,1116 1818,1116" fill="none" stroke="#14a8ee" stroke-width="2"/><path d="M1799,1195 C1805.7,1195 1811.3,1194 1818,1194" fill="none" stroke="#14a8ee" stroke-width="2"/><path d="M1916,1194 C1956.7,1194 1920.3,1117 1961,1117" fill="none" stroke="#14a8ee" stroke-width="2"/><path d="M1916,1194 C1937.7,1194 1939.3,1214 1961,1214" fill="none" stroke="#14a8ee" stroke-width="2"/><path d="M1870,562 C1884.0,562 1884.0,548 1898,548" fill="none" stroke="#0a56d0" stroke-width="2"/><path d="M1878,770 C1892.0,770 1891.0,755 1905,755" fill="none" stroke="#0a56d0" stroke-width="2"/><path d="M1982,962 C1995.7,962 1995.3,948 2009,948" fill="none" stroke="#0a56d0" stroke-width="2"/><path d="M532,823 C584.3,823 636.7,823 689,823" fill="none" stroke="#f6f6f6" stroke-width="2.6"/><path d="M773,837 C965.7,837 808.3,487 1001,487" fill="none" stroke="#f6f6f6" stroke-width="2.6"/><path d="M773,851 C903.3,851 870.7,688 1001,688" fill="none" stroke="#f6f6f6" stroke-width="2.6"/><path d="M773,865 C856.3,865 917.7,887 1001,887" fill="none" stroke="#f6f6f6" stroke-width="2.6"/><path d="M773,879 C918.3,879 855.7,1087 1001,1087" fill="none" stroke="#f6f6f6" stroke-width="2.6"/><path d="M1156,487 C1171.0,487 1186.0,487 1201,487" fill="none" stroke="#f6f6f6" stroke-width="2.6"/><path d="M1272,487 C1349.7,487 1427.3,487 1505,487" fill="none" stroke="#f6f6f6" stroke-width="2.6"/><path d="M1428,495 C1456.3,495 1476.7,487 1505,487" fill="none" stroke="#f6f6f6" stroke-width="2.6"/><path d="M1626,487 C1655.0,487 1684.0,487 1713,487" fill="none" stroke="#f6f6f6" stroke-width="2.6"/><path d="M1822,487 C1847.0,487 1872.0,487 1897,487" fill="none" stroke="#f6f6f6" stroke-width="2.6"/><path d="M2006,487 C2191.3,487 2120.7,743 2306,743" fill="none" stroke="#f6f6f6" stroke-width="2.6"/><path d="M1156,687 C1171.2,687 1185.8,686.5 1201,686.5" fill="none" stroke="#f6f6f6" stroke-width="2.6"/><path d="M1272,686.5 C1293.8,686.5 1307.2,695 1329,695" fill="none" stroke="#f6f6f6" stroke-width="2.6"/><path d="M1421,695 C1452.0,695 1483.0,695 1514,695" fill="none" stroke="#f6f6f6" stroke-width="2.6"/><path d="M1634,695 C1663.3,695 1691.7,694 1721,694" fill="none" stroke="#f6f6f6" stroke-width="2.6"/><path d="M1830,694 C1855.0,694 1880.0,694 1905,694" fill="none" stroke="#f6f6f6" stroke-width="2.6"/><path d="M2014,694 C2127.7,694 2192.3,743 2306,743" fill="none" stroke="#f6f6f6" stroke-width="2.6"/><path d="M1156,887 C1166.0,887 1175.0,886 1185,886" fill="none" stroke="#f6f6f6" stroke-width="2.6"/><path d="M1257,886 C1286.3,886 1315.7,886 1345,886" fill="none" stroke="#f6f6f6" stroke-width="2.6"/><path d="M1437,886 C1465.3,886 1484.7,895 1513,895" fill="none" stroke="#f6f6f6" stroke-width="2.6"/><path d="M1634,895 C1774.7,895 1372.3,1015 1513,1015" fill="none" stroke="#f6f6f6" stroke-width="2.6"/><path d="M1615,1015 C1637.3,1015 1658.7,1014 1681,1014" fill="none" stroke="#f6f6f6" stroke-width="2.6"/><path d="M1774,1014 C1833.3,1014 1765.7,887 1825,887" fill="none" stroke="#f6f6f6" stroke-width="2.6"/><path d="M1934,887 C1959.0,887 1984.0,887 2009,887" fill="none" stroke="#f6f6f6" stroke-width="2.6"/><path d="M2118,887 C2228.7,887 2195.3,743 2306,743" fill="none" stroke="#f6f6f6" stroke-width="2.6"/><path d="M1156,1087 C1168.7,1087 1181.3,1087 1194,1087" fill="none" stroke="#f6f6f6" stroke-width="2.6"/><path d="M1264,1087 C1280.7,1087 1296.3,1086 1313,1086" fill="none" stroke="#f6f6f6" stroke-width="2.6"/><path d="M1405,1086 C1419.7,1086 1418.3,1102 1433,1102" fill="none" stroke="#f6f6f6" stroke-width="2.6"/><path d="M1526,1102 C1535.3,1102 1544.7,1102 1554,1102" fill="none" stroke="#f6f6f6" stroke-width="2.6"/><path d="M1677,1102 C1724.0,1102 1771.0,1102 1818,1102" fill="none" stroke="#f6f6f6" stroke-width="2.6"/><path d="M1892,1102 C1915.3,1102 1937.7,1103 1961,1103" fill="none" stroke="#f6f6f6" stroke-width="2.6"/><path d="M2099,1103 C2239.5,1103 1820.5,1200 1961,1200" fill="none" stroke="#f6f6f6" stroke-width="2.6"/><path d="M2100,1200 C2110.0,1200 2119.0,1199 2129,1199" fill="none" stroke="#f6f6f6" stroke-width="2.6"/><path d="M2238,1199 C2412.7,1199 2131.3,743 2306,743" fill="none" stroke="#f6f6f6" stroke-width="2.6"/></svg>
<div style="left:452px;top:793px;width:85px;height:52px;border-radius:6px;border:1px solid rgba(8,8,8,0.9);box-shadow:0 2px 3px rgba(0,0,0,0.35);"></div>
<div style="left:453px;top:794px;width:83px;height:50px;border-radius:5px;background:rgba(14,15,14,0.82);"></div>
<div style="left:453px;top:794px;width:83px;height:21px;border-radius:5px 5px 0 0;background:linear-gradient(to right,rgba(0,0,0,0) 0%,rgba(18,18,18,0.6) 100%),linear-gradient(#e05050 0%,#a41a1a 45%,#7a1010 70%,#b02020 100%);"></div>
<svg style="left:456.5px;top:796px" width="9" height="9"><path d="M4.5 0.8 L8.2 4.5 L4.5 8.2 L0.8 4.5 Z" fill="none" stroke="#fff" stroke-width="1.3"/></svg>
<div class="t" style="left:467px;top:795.49px;font-size:7.4px;line-height:9.620000000000001px;color:#f4f4f4;font-weight:bold;letter-spacing:-0.35px;text-shadow:1px 1px 1px rgba(0,0,0,0.6);">ActivateStormFX</div>
<div class="t" style="left:467px;top:805.27px;font-size:6.2px;line-height:8.06px;color:#9cb8b8;font-style:italic;letter-spacing:-0.3px;">Custom Event</div>
<div style="left:528px;top:802px;width:7px;height:6px;border:1.3px solid #ff3030;background:#111;"></div>
<svg style="left:524.0px;top:818.5px" width="9" height="10"><path d="M1 1 L4.2 1 L7.8 5 L4.2 9 L1 9 Z" fill="#f4f4f4"/></svg>
<div class="t" style="right:2040px;top:832.90px;font-size:6.3px;line-height:8.19px;color:#e6e6e6;letter-spacing:-0.32px;">Season</div>
<svg style="left:523.0px;top:832.5px" width="10" height="9"><circle cx="4" cy="4.5" r="3.4" fill="#0a9a8a"/><path d="M7 2.6 L9 4.5 L7 6.4 Z" fill="#0a9a8a"/></svg>
<div style="left:683px;top:801px;width:96px;height:97px;border-radius:6px;border:1px solid rgba(8,8,8,0.9);box-shadow:0 2px 3px rgba(0,0,0,0.35);"></div>
<div style="left:684px;top:802px;width:94px;height:95px;border-radius:5px;background:rgba(14,15,14,0.82);"></div>
<div style="left:684px;top:802px;width:94px;height:13px;border-radius:5px 5px 0 0;background:linear-gradient(to right,rgba(0,0,0,0) 0%,rgba(18,18,18,0.6) 100%),linear-gradient(#c4c850 0%,#8a9014 45%,#6a7010 70%,#9aa020 100%);"></div>
<svg style="left:688px;top:804px" width="10" height="9"><path d="M5 1 L2 1 L2 8 L5 8 M2 4.5 L5 4.5" fill="none" stroke="#fff" stroke-width="1.2"/><path d="M7 1 L7 4 M5.5 2.5 L8.5 2.5" stroke="#fff" stroke-width="1"/></svg>
<div class="t" style="left:699px;top:803.49px;font-size:7.4px;line-height:9.620000000000001px;color:#f4f4f4;font-weight:bold;letter-spacing:-0.35px;text-shadow:1px 1px 1px rgba(0,0,0,0.6);">Switch on Seasons</div>
<svg style="left:689.0px;top:818.5px" width="9" height="10"><path d="M1 1 L4.2 1 L7.8 5 L4.2 9 L1 9 Z" fill="#f4f4f4"/></svg>
<svg style="left:689.0px;top:832.5px" width="10" height="9"><circle cx="4" cy="4.5" r="3.4" fill="#0a9a8a"/><path d="M7 2.6 L9 4.5 L7 6.4 Z" fill="#0a9a8a"/></svg>
<div class="t" style="left:700px;top:832.90px;font-size:6.3px;line-height:8.19px;color:#e6e6e6;letter-spacing:-0.32px;">Selection</div>
<div class="t" style="right:1797px;top:818.90px;font-size:6.3px;line-height:8.19px;color:#e6e6e6;letter-spacing:-0.32px;">Agnostic</div>
<svg style="left:765.0px;top:818.5px" width="9" height="10"><path d="M1 1 L4.2 1 L7.8 5 L4.2 9 L1 9 Z" fill="none" stroke="#e8e8e8" stroke-width="1.1"/></svg>
<div class="t" style="right:1797px;top:832.90px;font-size:6.3px;line-height:8.19px;color:#e6e6e6;letter-spacing:-0.32px;">Spring</div>
<svg style="left:765.0px;top:832.5px" width="9" height="10"><path d="M1 1 L4.2 1 L7.8 5 L4.2 9 L1 9 Z" fill="#f4f4f4"/></svg>
<div class="t" style="right:1797px;top:846.90px;font-size:6.3px;line-height:8.19px;color:#e6e6e6;letter-spacing:-0.32px;">Summer</div>
<svg style="left:765.0px;top:846.5px" width="9" height="10"><path d="M1 1 L4.2 1 L7.8 5 L4.2 9 L1 9 Z" fill="#f4f4f4"/></svg>
<div class="t" style="right:1797px;top:860.90px;font-size:6.3px;line-height:8.19px;color:#e6e6e6;letter-spacing:-0.32px;">Autumn</div>
<svg style="left:765.0px;top:860.5px" width="9" height="10"><path d="M1 1 L4.2 1 L7.8 5 L4.2 9 L1 9 Z" fill="#f4f4f4"/></svg>
<div class="t" style="right:1797px;top:874.90px;font-size:6.3px;line-height:8.19px;color:#e6e6e6;letter-spacing:-0.32px;">Winter</div>
<svg style="left:765.0px;top:874.5px" width="9" height="10"><path d="M1 1 L4.2 1 L7.8 5 L4.2 9 L1 9 Z" fill="#f4f4f4"/></svg>
<svg style="left:727px;top:887px" width="8" height="6"><path d="M0 0 L8 0 L4 5 Z" fill="#ddd"/></svg>
<div style="left:995px;top:465px;width:168px;height:199px;border-radius:6px;border:1px solid rgba(8,8,8,0.9);box-shadow:0 2px 3px rgba(0,0,0,0.35);"></div>
<div style="left:996px;top:466px;width:166px;height:197px;border-radius:5px;background:rgba(14,15,14,0.82);"></div>
<div style="left:996px;top:466px;width:166px;height:12px;border-radius:5px 5px 0 0;background:linear-gradient(to right,rgba(0,0,0,0) 0%,rgba(18,18,18,0.55) 100%),linear-gradient(#6a9cc4 0%,#2e5878 38%,#1f3a50 62%,#4a7aa0 100%);"></div>
<svg style="left:999.5px;top:466.8px" width="9" height="11"><path d="M1 10.2 C2.6 10.4 3.2 9.6 3.7 7.6 L5 2.8 C5.5 1.1 6.3 0.6 8 0.8" fill="none" stroke="#7ab8f0" stroke-width="1.2"/><path d="M2.6 4.6 L6.6 4.6" stroke="#7ab8f0" stroke-width="0.8"/></svg>
<div class="t" style="left:1010px;top:467.49px;font-size:7.4px;line-height:9.620000000000001px;color:#f4f4f4;font-weight:bold;letter-spacing:-0.35px;text-shadow:1px 1px 1px rgba(0,0,0,0.6);">Spawn System at Location</div>
<svg style="left:1001.0px;top:482.5px" width="9" height="10"><path d="M1 1 L4.2 1 L7.8 5 L4.2 9 L1 9 Z" fill="#f4f4f4"/></svg>
<svg style="left:1149.0px;top:482.5px" width="9" height="10"><path d="M1 1 L4.2 1 L7.8 5 L4.2 9 L1 9 Z" fill="#f4f4f4"/></svg>
<svg style="left:1001.0px;top:500.0px" width="10" height="9"><circle cx="4" cy="4.5" r="2.8" fill="#111" stroke="#1aa6ee" stroke-width="1.3"/><path d="M7 2.6 L9 4.5 L7 6.4 Z" fill="#1aa6ee"/></svg>
<div class="t" style="left:1012px;top:496.90px;font-size:6.3px;line-height:8.19px;color:#e6e6e6;letter-spacing:-0.32px;">System Template</div>
<div style="left:1015px;top:504px;width:38px;height:8.5px;background:#262626;border-radius:1px;"></div>
<div class="t" style="left:1017px;top:504.74px;font-size:5.4px;line-height:7.0200000000000005px;color:#5e5e5e;letter-spacing:-0.3px;">NS_SpringRain</div>
<svg style="left:1045px;top:506.2px" width="6" height="4"><path d="M0 0 L6 0 L3 3.5 Z" fill="#5e5e5e"/></svg>
<svg style="left:1056px;top:504.2px" width="18" height="8"><path d="M1 4 L4 1 L4 3 L7 3 L7 5 L4 5 L4 7 Z" fill="#4a4a4a"/><circle cx="13" cy="3.5" r="2.5" fill="none" stroke="#4a4a4a" stroke-width="1"/><path d="M11 5.5 L9.5 7" stroke="#4a4a4a" stroke-width="1"/></svg>
<div class="t" style="right:1414px;top:496.90px;font-size:6.3px;line-height:8.19px;color:#e6e6e6;letter-spacing:-0.32px;">Return Value</div>
<svg style="left:1148.0px;top:496.5px" width="10" height="9"><circle cx="4" cy="4.5" r="3.4" fill="#1aa6ee"/><path d="M7 2.6 L9 4.5 L7 6.4 Z" fill="#1aa6ee"/></svg>
<svg style="left:1001.0px;top:524.0px" width="10" height="9"><circle cx="4" cy="4.5" r="2.8" fill="#111" stroke="#f0b020" stroke-width="1.3"/><path d="M7 2.6 L9 4.5 L7 6.4 Z" fill="#f0b020"/></svg>
<div class="t" style="left:1012px;top:518.90px;font-size:6.3px;line-height:8.19px;color:#e6e6e6;letter-spacing:-0.32px;">Location</div>
<div style="left:1016px;top:527px;width:22px;height:10px;border:1px solid #b8b8b8;"></div>
<div class="t" style="left:1018px;top:527.84px;font-size:6.4px;line-height:8.32px;color:#6a6a6a;letter-spacing:0px;">X</div>
<div class="t" style="right:1524px;top:527.45px;font-size:7px;line-height:9.1px;color:#eee;letter-spacing:-0.1px;">0.0</div>
<div style="left:1040px;top:527px;width:22px;height:10px;border:1px solid #b8b8b8;"></div>
<div class="t" style="left:1042px;top:527.84px;font-size:6.4px;line-height:8.32px;color:#6a6a6a;letter-spacing:0px;">Y</div>
<div class="t" style="right:1500px;top:527.45px;font-size:7px;line-height:9.1px;color:#eee;letter-spacing:-0.1px;">0.0</div>
<div style="left:1064px;top:527px;width:22px;height:10px;border:1px solid #b8b8b8;"></div>
<div class="t" style="left:1066px;top:527.84px;font-size:6.4px;line-height:8.32px;color:#6a6a6a;letter-spacing:0px;">Z</div>
<div class="t" style="right:1476px;top:527.45px;font-size:7px;line-height:9.1px;color:#eee;letter-spacing:-0.1px;">0.0</div>
<svg style="left:1001.0px;top:548.5px" width="10" height="9"><circle cx="4" cy="4.5" r="2.8" fill="#111" stroke="#9090f0" stroke-width="1.3"/><path d="M7 2.6 L9 4.5 L7 6.4 Z" fill="#9090f0"/></svg>
<div class="t" style="left:1012px;top:543.90px;font-size:6.3px;line-height:8.19px;color:#e6e6e6;letter-spacing:-0.32px;">Rotation</div>
<div style="left:1016px;top:552px;width:22px;height:10px;border:1px solid #b8b8b8;"></div>
<div class="t" style="left:1018px;top:552.84px;font-size:6.4px;line-height:8.32px;color:#6a6a6a;letter-spacing:0px;">X</div>
<div class="t" style="right:1524px;top:552.45px;font-size:7px;line-height:9.1px;color:#eee;letter-spacing:-0.1px;">0.0</div>
<div style="left:1040px;top:552px;width:22px;height:10px;border:1px solid #b8b8b8;"></div>
<div class="t" style="left:1042px;top:552.84px;font-size:6.4px;line-height:8.32px;color:#6a6a6a;letter-spacing:0px;">Y</div>
<div class="t" style="right:1500px;top:552.45px;font-size:7px;line-height:9.1px;color:#eee;letter-spacing:-0.1px;">0.0</div>
<div style="left:1064px;top:552px;width:22px;height:10px;border:1px solid #b8b8b8;"></div>
<div class="t" style="left:1066px;top:552.84px;font-size:6.4px;line-height:8.32px;color:#6a6a6a;letter-spacing:0px;">Z</div>
<div class="t" style="right:1476px;top:552.45px;font-size:7px;line-height:9.1px;color:#eee;letter-spacing:-0.1px;">0.0</div>
<svg style="left:1001.0px;top:573.5px" width="10" height="9"><circle cx="4" cy="4.5" r="2.8" fill="#111" stroke="#f0b020" stroke-width="1.3"/><path d="M7 2.6 L9 4.5 L7 6.4 Z" fill="#f0b020"/></svg>
<div class="t" style="left:1012px;top:568.90px;font-size:6.3px;line-height:8.19px;color:#e6e6e6;letter-spacing:-0.32px;">Scale</div>
<div style="left:1016px;top:577px;width:22px;height:10px;border:1px solid #b8b8b8;"></div>
<div class="t" style="left:1018px;top:577.84px;font-size:6.4px;line-height:8.32px;color:#6a6a6a;letter-spacing:0px;">X</div>
<div class="t" style="right:1524px;top:577.45px;font-size:7px;line-height:9.1px;color:#eee;letter-spacing:-0.1px;">1.0</div>
<div style="left:1040px;top:577px;width:22px;height:10px;border:1px solid #b8b8b8;"></div>
<div class="t" style="left:1042px;top:577.84px;font-size:6.4px;line-height:8.32px;color:#6a6a6a;letter-spacing:0px;">Y</div>
<div class="t" style="right:1500px;top:577.45px;font-size:7px;line-height:9.1px;color:#eee;letter-spacing:-0.1px;">1.0</div>
<div style="left:1064px;top:577px;width:22px;height:10px;border:1px solid #b8b8b8;"></div>
<div class="t" style="left:1066px;top:577.84px;font-size:6.4px;line-height:8.32px;color:#6a6a6a;letter-spacing:0px;">Z</div>
<div class="t" style="right:1476px;top:577.45px;font-size:7px;line-height:9.1px;color:#eee;letter-spacing:-0.1px;">1.0</div>
<svg style="left:1001.0px;top:594.5px" width="10" height="9"><circle cx="4" cy="4.5" r="2.8" fill="#111" stroke="#a01010" stroke-width="1.3"/><path d="M7 2.6 L9 4.5 L7 6.4 Z" fill="#a01010"/></svg>
<div class="t" style="left:1012px;top:594.90px;font-size:6.3px;line-height:8.19px;color:#e6e6e6;letter-spacing:-0.32px;">Auto Destroy</div>
<div style="left:1049px;top:595px;width:8px;height:8px;background:linear-gradient(#e8e8e8,#bdbdbd);border-radius:1px;"></div>
<svg style="left:1049px;top:595px" width="8" height="8"><path d="M1.5 4 L3.5 6 L7 1.5" fill="none" stroke="#444" stroke-width="1.2"/></svg>
<svg style="left:1001.0px;top:610.5px" width="10" height="9"><circle cx="4" cy="4.5" r="2.8" fill="#111" stroke="#a01010" stroke-width="1.3"/><path d="M7 2.6 L9 4.5 L7 6.4 Z" fill="#a01010"/></svg>
<div class="t" style="left:1012px;top:610.90px;font-size:6.3px;line-height:8.19px;color:#e6e6e6;letter-spacing:-0.32px;">Auto Activate</div>
<div style="left:1051px;top:611px;width:8px;height:8px;background:linear-gradient(#e8e8e8,#bdbdbd);border-radius:1px;"></div>
<svg style="left:1051px;top:611px" width="8" height="8"><path d="M1.5 4 L3.5 6 L7 1.5" fill="none" stroke="#444" stroke-width="1.2"/></svg>
<svg style="left:1001.0px;top:630.5px" width="10" height="9"><circle cx="4" cy="4.5" r="2.8" fill="#111" stroke="#0a7a72" stroke-width="1.3"/><path d="M7 2.6 L9 4.5 L7 6.4 Z" fill="#0a7a72"/></svg>
<div class="t" style="left:1012px;top:625.90px;font-size:6.3px;line-height:8.19px;color:#e6e6e6;letter-spacing:-0.32px;">Pooling Method</div>
<div style="left:1015px;top:633px;width:86px;height:11px;background:linear-gradient(#f0f0f0,#c4c4c4);border-radius:2px;"></div>
<div class="t" style="left:1018px;top:634.34px;font-size:6.4px;line-height:8.32px;color:#333;letter-spacing:-0.1px;">None</div>
<svg style="left:1091px;top:636.5px" width="7" height="4"><path d="M0 0 L7 0 L3.5 4 Z" fill="#111"/></svg>
<svg style="left:1001.0px;top:650.5px" width="10" height="9"><circle cx="4" cy="4.5" r="2.8" fill="#111" stroke="#a01010" stroke-width="1.3"/><path d="M7 2.6 L9 4.5 L7 6.4 Z" fill="#a01010"/></svg>
<div class="t" style="left:1012px;top:650.90px;font-size:6.3px;line-height:8.19px;color:#e6e6e6;letter-spacing:-0.32px;">Pre Cull Check</div>
<div style="left:1054px;top:651px;width:8px;height:8px;background:linear-gradient(#e8e8e8,#bdbdbd);border-radius:1px;"></div>
<svg style="left:1054px;top:651px" width="8" height="8"><path d="M1.5 4 L3.5 6 L7 1.5" fill="none" stroke="#444" stroke-width="1.2"/></svg>
<div style="left:995px;top:665px;width:168px;height:199px;border-radius:6px;border:1px solid rgba(8,8,8,0.9);box-shadow:0 2px 3px rgba(0,0,0,0.35);"></div>
<div style="left:996px;top:666px;width:166px;height:197px;border-radius:5px;background:rgba(14,15,14,0.82);"></div>
<div style="left:996px;top:666px;width:166px;height:12px;border-radius:5px 5px 0 0;background:linear-gradient(to right,rgba(0,0,0,0) 0%,rgba(18,18,18,0.55) 100%),linear-gradient(#6a9cc4 0%,#2e5878 38%,#1f3a50 62%,#4a7aa0 100%);"></div>
<svg style="left:999.5px;top:666.8px" width="9" height="11"><path d="M1 10.2 C2.6 10.4 3.2 9.6 3.7 7.6 L5 2.8 C5.5 1.1 6.3 0.6 8 0.8" fill="none" stroke="#7ab8f0" stroke-width="1.2"/><path d="M2.6 4.6 L6.6 4.6" stroke="#7ab8f0" stroke-width="0.8"/></svg>
<div class="t" style="left:1010px;top:667.49px;font-size:7.4px;line-height:9.620000000000001px;color:#f4f4f4;font-weight:bold;letter-spacing:-0.35px;text-shadow:1px 1px 1px rgba(0,0,0,0.6);">Spawn System at Location</div>
<svg style="left:1001.0px;top:682.5px" width="9" height="10"><path d="M1 1 L4.2 1 L7.8 5 L4.2 9 L1 9 Z" fill="#f4f4f4"/></svg>
<svg style="left:1149.0px;top:682.5px" width="9" height="10"><path d="M1 1 L4.2 1 L7.8 5 L4.2 9 L1 9 Z" fill="#f4f4f4"/></svg>
<svg style="left:1001.0px;top:700.0px" width="10" height="9"><circle cx="4" cy="4.5" r="2.8" fill="#111" stroke="#1aa6ee" stroke-width="1.3"/><path d="M7 2.6 L9 4.5 L7 6.4 Z" fill="#1aa6ee"/></svg>
<div class="t" style="left:1012px;top:696.90px;font-size:6.3px;line-height:8.19px;color:#e6e6e6;letter-spacing:-0.32px;">System Template</div>
<div style="left:1015px;top:704px;width:38px;height:8.5px;background:#262626;border-radius:1px;"></div>
<div class="t" style="left:1017px;top:704.74px;font-size:5.4px;line-height:7.0200000000000005px;color:#5e5e5e;letter-spacing:-0.3px;">NS_SummerRain</div>
<svg style="left:1045px;top:706.2px" width="6" height="4"><path d="M0 0 L6 0 L3 3.5 Z" fill="#5e5e5e"/></svg>
<svg style="left:1056px;top:704.2px" width="18" height="8"><path d="M1 4 L4 1 L4 3 L7 3 L7 5 L4 5 L4 7 Z" fill="#4a4a4a"/><circle cx="13" cy="3.5" r="2.5" fill="none" stroke="#4a4a4a" stroke-width="1"/><path d="M11 5.5 L9.5 7" stroke="#4a4a4a" stroke-width="1"/></svg>
<div class="t" style="right:1414px;top:696.90px;font-size:6.3px;line-height:8.19px;color:#e6e6e6;letter-spacing:-0.32px;">Return Value</div>
<svg style="left:1148.0px;top:696.5px" width="10" height="9"><circle cx="4" cy="4.5" r="3.4" fill="#1aa6ee"/><path d="M7 2.6 L9 4.5 L7 6.4 Z" fill="#1aa6ee"/></svg>
<svg style="left:1001.0px;top:724.0px" width="10" height="9"><circle cx="4" cy="4.5" r="2.8" fill="#111" stroke="#f0b020" stroke-width="1.3"/><path d="M7 2.6 L9 4.5 L7 6.4 Z" fill="#f0b020"/></svg>
<div class="t" style="left:1012px;top:718.90px;font-size:6.3px;line-height:8.19px;color:#e6e6e6;letter-spacing:-0.32px;">Location</div>
<div style="left:1016px;top:727px;width:22px;height:10px;border:1px solid #b8b8b8;"></div>
<div class="t" style="left:1018px;top:727.84px;font-size:6.4px;line-height:8.32px;color:#6a6a6a;letter-spacing:0px;">X</div>
<div class="t" style="right:1524px;top:727.45px;font-size:7px;line-height:9.1px;color:#eee;letter-spacing:-0.1px;">0.0</div>
<div style="left:1040px;top:727px;width:22px;height:10px;border:1px solid #b8b8b8;"></div>
<div class="t" style="left:1042px;top:727.84px;font-size:6.4px;line-height:8.32px;color:#6a6a6a;letter-spacing:0px;">Y</div>
<div class="t" style="right:1500px;top:727.45px;font-size:7px;line-height:9.1px;color:#eee;letter-spacing:-0.1px;">0.0</div>
<div style="left:1064px;top:727px;width:22px;height:10px;border:1px solid #b8b8b8;"></div>
<div class="t" style="left:1066px;top:727.84px;font-size:6.4px;line-height:8.32px;color:#6a6a6a;letter-spacing:0px;">Z</div>
<div class="t" style="right:1476px;top:727.45px;font-size:7px;line-height:9.1px;color:#eee;letter-spacing:-0.1px;">0.0</div>
<svg style="left:1001.0px;top:748.5px" width="10" height="9"><circle cx="4" cy="4.5" r="2.8" fill="#111" stroke="#9090f0" stroke-width="1.3"/><path d="M7 2.6 L9 4.5 L7 6.4 Z" fill="#9090f0"/></svg>
<div class="t" style="left:1012px;top:743.90px;font-size:6.3px;line-height:8.19px;color:#e6e6e6;letter-spacing:-0.32px;">Rotation</div>
<div style="left:1016px;top:752px;width:22px;height:10px;border:1px solid #b8b8b8;"></div>
<div class="t" style="left:1018px;top:752.84px;font-size:6.4px;line-height:8.32px;color:#6a6a6a;letter-spacing:0px;">X</div>
<div class="t" style="right:1524px;top:752.45px;font-size:7px;line-height:9.1px;color:#eee;letter-spacing:-0.1px;">0.0</div>
<div style="left:1040px;top:752px;width:22px;height:10px;border:1px solid #b8b8b8;"></div>
<div class="t" style="left:1042px;top:752.84px;font-size:6.4px;line-height:8.32px;color:#6a6a6a;letter-spacing:0px;">Y</div>
<div class="t" style="right:1500px;top:752.45px;font-size:7px;line-height:9.1px;color:#eee;letter-spacing:-0.1px;">0.0</div>
<div style="left:1064px;top:752px;width:22px;height:10px;border:1px solid #b8b8b8;"></div>
<div class="t" style="left:1066px;top:752.84px;font-size:6.4px;line-height:8.32px;color:#6a6a6a;letter-spacing:0px;">Z</div>
<div class="t" style="right:1476px;top:752.45px;font-size:7px;line-height:9.1px;color:#eee;letter-spacing:-0.1px;">0.0</div>
<svg style="left:1001.0px;top:773.5px" width="10" height="9"><circle cx="4" cy="4.5" r="2.8" fill="#111" stroke="#f0b020" stroke-width="1.3"/><path d="M7 2.6 L9 4.5 L7 6.4 Z" fill="#f0b020"/></svg>
<div class="t" style="left:1012px;top:768.90px;font-size:6.3px;line-height:8.19px;color:#e6e6e6;letter-spacing:-0.32px;">Scale</div>
<div style="left:1016px;top:777px;width:22px;height:10px;border:1px solid #b8b8b8;"></div>
<div class="t" style="left:1018px;top:777.84px;font-size:6.4px;line-height:8.32px;color:#6a6a6a;letter-spacing:0px;">X</div>
<div class="t" style="right:1524px;top:777.45px;font-size:7px;line-height:9.1px;color:#eee;letter-spacing:-0.1px;">1.0</div>
<div style="left:1040px;top:777px;width:22px;height:10px;border:1px solid #b8b8b8;"></div>
<div class="t" style="left:1042px;top:777.84px;font-size:6.4px;line-height:8.32px;color:#6a6a6a;letter-spacing:0px;">Y</div>
<div class="t" style="right:1500px;top:777.45px;font-size:7px;line-height:9.1px;color:#eee;letter-spacing:-0.1px;">1.0</div>
<div style="left:1064px;top:777px;width:22px;height:10px;border:1px solid #b8b8b8;"></div>
<div class="t" style="left:1066px;top:777.84px;font-size:6.4px;line-height:8.32px;color:#6a6a6a;letter-spacing:0px;">Z</div>
<div class="t" style="right:1476px;top:777.45px;font-size:7px;line-height:9.1px;color:#eee;letter-spacing:-0.1px;">1.0</div>
<svg style="left:1001.0px;top:794.5px" width="10" height="9"><circle cx="4" cy="4.5" r="2.8" fill="#111" stroke="#a01010" stroke-width="1.3"/><path d="M7 2.6 L9 4.5 L7 6.4 Z" fill="#a01010"/></svg>
<div class="t" style="left:1012px;top:794.90px;font-size:6.3px;line-height:8.19px;color:#e6e6e6;letter-spacing:-0.32px;">Auto Destroy</div>
<div style="left:1049px;top:795px;width:8px;height:8px;background:linear-gradient(#e8e8e8,#bdbdbd);border-radius:1px;"></div>
<svg style="left:1049px;top:795px" width="8" height="8"><path d="M1.5 4 L3.5 6 L7 1.5" fill="none" stroke="#444" stroke-width="1.2"/></svg>
<svg style="left:1001.0px;top:810.5px" width="10" height="9"><circle cx="4" cy="4.5" r="2.8" fill="#111" stroke="#a01010" stroke-width="1.3"/><path d="M7 2.6 L9 4.5 L7 6.4 Z" fill="#a01010"/></svg>
<div class="t" style="left:1012px;top:810.90px;font-size:6.3px;line-height:8.19px;color:#e6e6e6;letter-spacing:-0.32px;">Auto Activate</div>
<div style="left:1051px;top:811px;width:8px;height:8px;background:linear-gradient(#e8e8e8,#bdbdbd);border-radius:1px;"></div>
<svg style="left:1051px;top:811px" width="8" height="8"><path d="M1.5 4 L3.5 6 L7 1.5" fill="none" stroke="#444" stroke-width="1.2"/></svg>
<svg style="left:1001.0px;top:830.5px" width="10" height="9"><circle cx="4" cy="4.5" r="2.8" fill="#111" stroke="#0a7a72" stroke-width="1.3"/><path d="M7 2.6 L9 4.5 L7 6.4 Z" fill="#0a7a72"/></svg>
<div class="t" style="left:1012px;top:825.90px;font-size:6.3px;line-height:8.19px;color:#e6e6e6;letter-spacing:-0.32px;">Pooling Method</div>
<div style="left:1015px;top:833px;width:86px;height:11px;background:linear-gradient(#f0f0f0,#c4c4c4);border-radius:2px;"></div>
<div class="t" style="left:1018px;top:834.34px;font-size:6.4px;line-height:8.32px;color:#333;letter-spacing:-0.1px;">None</div>
<svg style="left:1091px;top:836.5px" width="7" height="4"><path d="M0 0 L7 0 L3.5 4 Z" fill="#111"/></svg>
<svg style="left:1001.0px;top:850.5px" width="10" height="9"><circle cx="4" cy="4.5" r="2.8" fill="#111" stroke="#a01010" stroke-width="1.3"/><path d="M7 2.6 L9 4.5 L7 6.4 Z" fill="#a01010"/></svg>
<div class="t" style="left:1012px;top:850.90px;font-size:6.3px;line-height:8.19px;color:#e6e6e6;letter-spacing:-0.32px;">Pre Cull Check</div>
<div style="left:1054px;top:851px;width:8px;height:8px;background:linear-gradient(#e8e8e8,#bdbdbd);border-radius:1px;"></div>
<svg style="left:1054px;top:851px" width="8" height="8"><path d="M1.5 4 L3.5 6 L7 1.5" fill="none" stroke="#444" stroke-width="1.2"/></svg>
<div style="left:995px;top:865px;width:168px;height:199px;border-radius:6px;border:1px solid rgba(8,8,8,0.9);box-shadow:0 2px 3px rgba(0,0,0,0.35);"></div>
<div style="left:996px;top:866px;width:166px;height:197px;border-radius:5px;background:rgba(14,15,14,0.82);"></div>
<div style="left:996px;top:866px;width:166px;height:12px;border-radius:5px 5px 0 0;background:linear-gradient(to right,rgba(0,0,0,0) 0%,rgba(18,18,18,0.55) 100%),linear-gradient(#6a9cc4 0%,#2e5878 38%,#1f3a50 62%,#4a7aa0 100%);"></div>
<svg style="left:999.5px;top:866.8px" width="9" height="11"><path d="M1 10.2 C2.6 10.4 3.2 9.6 3.7 7.6 L5 2.8 C5.5 1.1 6.3 0.6 8 0.8" fill="none" stroke="#7ab8f0" stroke-width="1.2"/><path d="M2.6 4.6 L6.6 4.6" stroke="#7ab8f0" stroke-width="0.8"/></svg>
<div class="t" style="left:1010px;top:867.49px;font-size:7.4px;line-height:9.620000000000001px;color:#f4f4f4;font-weight:bold;letter-spacing:-0.35px;text-shadow:1px 1px 1px rgba(0,0,0,0.6);">Spawn System at Location</div>
<svg style="left:1001.0px;top:882.5px" width="9" height="10"><path d="M1 1 L4.2 1 L7.8 5 L4.2 9 L1 9 Z" fill="#f4f4f4"/></svg>
<svg style="left:1149.0px;top:882.5px" width="9" height="10"><path d="M1 1 L4.2 1 L7.8 5 L4.2 9 L1 9 Z" fill="#f4f4f4"/></svg>
<svg style="left:1001.0px;top:900.0px" width="10" height="9"><circle cx="4" cy="4.5" r="2.8" fill="#111" stroke="#1aa6ee" stroke-width="1.3"/><path d="M7 2.6 L9 4.5 L7 6.4 Z" fill="#1aa6ee"/></svg>
<div class="t" style="left:1012px;top:896.90px;font-size:6.3px;line-height:8.19px;color:#e6e6e6;letter-spacing:-0.32px;">System Template</div>
<div style="left:1015px;top:904px;width:38px;height:8.5px;background:#262626;border-radius:1px;"></div>
<div class="t" style="left:1017px;top:904.74px;font-size:5.4px;line-height:7.0200000000000005px;color:#5e5e5e;letter-spacing:-0.3px;">NS_AutumnRain</div>
<svg style="left:1045px;top:906.2px" width="6" height="4"><path d="M0 0 L6 0 L3 3.5 Z" fill="#5e5e5e"/></svg>
<svg style="left:1056px;top:904.2px" width="18" height="8"><path d="M1 4 L4 1 L4 3 L7 3 L7 5 L4 5 L4 7 Z" fill="#4a4a4a"/><circle cx="13" cy="3.5" r="2.5" fill="none" stroke="#4a4a4a" stroke-width="1"/><path d="M11 5.5 L9.5 7" stroke="#4a4a4a" stroke-width="1"/></svg>
<div class="t" style="right:1414px;top:896.90px;font-size:6.3px;line-height:8.19px;color:#e6e6e6;letter-spacing:-0.32px;">Return Value</div>
<svg style="left:1148.0px;top:896.5px" width="10" height="9"><circle cx="4" cy="4.5" r="3.4" fill="#1aa6ee"/><path d="M7 2.6 L9 4.5 L7 6.4 Z" fill="#1aa6ee"/></svg>
<svg style="left:1001.0px;top:924.0px" width="10" height="9"><circle cx="4" cy="4.5" r="2.8" fill="#111" stroke="#f0b020" stroke-width="1.3"/><path d="M7 2.6 L9 4.5 L7 6.4 Z" fill="#f0b020"/></svg>
<div class="t" style="left:1012px;top:918.90px;font-size:6.3px;line-height:8.19px;color:#e6e6e6;letter-spacing:-0.32px;">Location</div>
<div style="left:1016px;top:927px;width:22px;height:10px;border:1px solid #b8b8b8;"></div>
<div class="t" style="left:1018px;top:927.84px;font-size:6.4px;line-height:8.32px;color:#6a6a6a;letter-spacing:0px;">X</div>
<div class="t" style="right:1524px;top:927.45px;font-size:7px;line-height:9.1px;color:#eee;letter-spacing:-0.1px;">0.0</div>
<div style="left:1040px;top:927px;width:22px;height:10px;border:1px solid #b8b8b8;"></div>
<div class="t" style="left:1042px;top:927.84px;font-size:6.4px;line-height:8.32px;color:#6a6a6a;letter-spacing:0px;">Y</div>
<div class="t" style="right:1500px;top:927.45px;font-size:7px;line-height:9.1px;color:#eee;letter-spacing:-0.1px;">0.0</div>
<div style="left:1064px;top:927px;width:22px;height:10px;border:1px solid #b8b8b8;"></div>
<div class="t" style="left:1066px;top:927.84px;font-size:6.4px;line-height:8.32px;color:#6a6a6a;letter-spacing:0px;">Z</div>
<div class="t" style="right:1476px;top:927.45px;font-size:7px;line-height:9.1px;color:#eee;letter-spacing:-0.1px;">0.0</div>
<svg style="left:1001.0px;top:948.5px" width="10" height="9"><circle cx="4" cy="4.5" r="2.8" fill="#111" stroke="#9090f0" stroke-width="1.3"/><path d="M7 2.6 L9 4.5 L7 6.4 Z" fill="#9090f0"/></svg>
<div class="t" style="left:1012px;top:943.90px;font-size:6.3px;line-height:8.19px;color:#e6e6e6;letter-spacing:-0.32px;">Rotation</div>
<div style="left:1016px;top:952px;width:22px;height:10px;border:1px solid #b8b8b8;"></div>
<div class="t" style="left:1018px;top:952.84px;font-size:6.4px;line-height:8.32px;color:#6a6a6a;letter-spacing:0px;">X</div>
<div class="t" style="right:1524px;top:952.45px;font-size:7px;line-height:9.1px;color:#eee;letter-spacing:-0.1px;">0.0</div>
<div style="left:1040px;top:952px;width:22px;height:10px;border:1px solid #b8b8b8;"></div>
<div class="t" style="left:1042px;top:952.84px;font-size:6.4px;line-height:8.32px;color:#6a6a6a;letter-spacing:0px;">Y</div>
<div class="t" style="right:1500px;top:952.45px;font-size:7px;line-height:9.1px;color:#eee;letter-spacing:-0.1px;">0.0</div>
<div style="left:1064px;top:952px;width:22px;height:10px;border:1px solid #b8b8b8;"></div>
<div class="t" style="left:1066px;top:952.84px;font-size:6.4px;line-height:8.32px;color:#6a6a6a;letter-spacing:0px;">Z</div>
<div class="t" style="right:1476px;top:952.45px;font-size:7px;line-height:9.1px;color:#eee;letter-spacing:-0.1px;">0.0</div>
<svg style="left:1001.0px;top:973.5px" width="10" height="9"><circle cx="4" cy="4.5" r="2.8" fill="#111" stroke="#f0b020" stroke-width="1.3"/><path d="M7 2.6 L9 4.5 L7 6.4 Z" fill="#f0b020"/></svg>
<div class="t" style="left:1012px;top:968.90px;font-size:6.3px;line-height:8.19px;color:#e6e6e6;letter-spacing:-0.32px;">Scale</div>
<div style="left:1016px;top:977px;width:22px;height:10px;border:1px solid #b8b8b8;"></div>
<div class="t" style="left:1018px;top:977.84px;font-size:6.4px;line-height:8.32px;color:#6a6a6a;letter-spacing:0px;">X</div>
<div class="t" style="right:1524px;top:977.45px;font-size:7px;line-height:9.1px;color:#eee;letter-spacing:-0.1px;">1.0</div>
<div style="left:1040px;top:977px;width:22px;height:10px;border:1px solid #b8b8b8;"></div>
<div class="t" style="left:1042px;top:977.84px;font-size:6.4px;line-height:8.32px;color:#6a6a6a;letter-spacing:0px;">Y</div>
<div class="t" style="right:1500px;top:977.45px;font-size:7px;line-height:9.1px;color:#eee;letter-spacing:-0.1px;">1.0</div>
<div style="left:1064px;top:977px;width:22px;height:10px;border:1px solid #b8b8b8;"></div>
<div class="t" style="left:1066px;top:977.84px;font-size:6.4px;line-height:8.32px;color:#6a6a6a;letter-spacing:0px;">Z</div>
<div class="t" style="right:1476px;top:977.45px;font-size:7px;line-height:9.1px;color:#eee;letter-spacing:-0.1px;">1.0</div>
<svg style="left:1001.0px;top:994.5px" width="10" height="9"><circle cx="4" cy="4.5" r="2.8" fill="#111" stroke="#a01010" stroke-width="1.3"/><path d="M7 2.6 L9 4.5 L7 6.4 Z" fill="#a01010"/></svg>
<div class="t" style="left:1012px;top:994.90px;font-size:6.3px;line-height:8.19px;color:#e6e6e6;letter-spacing:-0.32px;">Auto Destroy</div>
<div style="left:1049px;top:995px;width:8px;height:8px;background:linear-gradient(#e8e8e8,#bdbdbd);border-radius:1px;"></div>
<svg style="left:1049px;top:995px" width="8" height="8"><path d="M1.5 4 L3.5 6 L7 1.5" fill="none" stroke="#444" stroke-width="1.2"/></svg>
<svg style="left:1001.0px;top:1010.5px" width="10" height="9"><circle cx="4" cy="4.5" r="2.8" fill="#111" stroke="#a01010" stroke-width="1.3"/><path d="M7 2.6 L9 4.5 L7 6.4 Z" fill="#a01010"/></svg>
<div class="t" style="left:1012px;top:1010.90px;font-size:6.3px;line-height:8.19px;color:#e6e6e6;letter-spacing:-0.32px;">Auto Activate</div>
<div style="left:1051px;top:1011px;width:8px;height:8px;background:linear-gradient(#e8e8e8,#bdbdbd);border-radius:1px;"></div>
<svg style="left:1051px;top:1011px" width="8" height="8"><path d="M1.5 4 L3.5 6 L7 1.5" fill="none" stroke="#444" stroke-width="1.2"/></svg>
<svg style="left:1001.0px;top:1030.5px" width="10" height="9"><circle cx="4" cy="4.5" r="2.8" fill="#111" stroke="#0a7a72" stroke-width="1.3"/><path d="M7 2.6 L9 4.5 L7 6.4 Z" fill="#0a7a72"/></svg>
<div class="t" style="left:1012px;top:1025.90px;font-size:6.3px;line-height:8.19px;color:#e6e6e6;letter-spacing:-0.32px;">Pooling Method</div>
<div style="left:1015px;top:1033px;width:86px;height:11px;background:linear-gradient(#f0f0f0,#c4c4c4);border-radius:2px;"></div>
<div class="t" style="left:1018px;top:1034.34px;font-size:6.4px;line-height:8.32px;color:#333;letter-spacing:-0.1px;">None</div>
<svg style="left:1091px;top:1036.5px" width="7" height="4"><path d="M0 0 L7 0 L3.5 4 Z" fill="#111"/></svg>
<svg style="left:1001.0px;top:1050.5px" width="10" height="9"><circle cx="4" cy="4.5" r="2.8" fill="#111" stroke="#a01010" stroke-width="1.3"/><path d="M7 2.6 L9 4.5 L7 6.4 Z" fill="#a01010"/></svg>
<div class="t" style="left:1012px;top:1050.90px;font-size:6.3px;line-height:8.19px;color:#e6e6e6;letter-spacing:-0.32px;">Pre Cull Check</div>
<div style="left:1054px;top:1051px;width:8px;height:8px;background:linear-gradient(#e8e8e8,#bdbdbd);border-radius:1px;"></div>
<svg style="left:1054px;top:1051px" width="8" height="8"><path d="M1.5 4 L3.5 6 L7 1.5" fill="none" stroke="#444" stroke-width="1.2"/></svg>
<div style="left:995px;top:1065px;width:168px;height:199px;border-radius:6px;border:1px solid rgba(8,8,8,0.9);box-shadow:0 2px 3px rgba(0,0,0,0.35);"></div>
<div style="left:996px;top:1066px;width:166px;height:197px;border-radius:5px;background:rgba(14,15,14,0.82);"></div>
<div style="left:996px;top:1066px;width:166px;height:12px;border-radius:5px 5px 0 0;background:linear-gradient(to right,rgba(0,0,0,0) 0%,rgba(18,18,18,0.55) 100%),linear-gradient(#6a9cc4 0%,#2e5878 38%,#1f3a50 62%,#4a7aa0 100%);"></div>
<svg style="left:999.5px;top:1066.8px" width="9" height="11"><path d="M1 10.2 C2.6 10.4 3.2 9.6 3.7 7.6 L5 2.8 C5.5 1.1 6.3 0.6 8 0.8" fill="none" stroke="#7ab8f0" stroke-width="1.2"/><path d="M2.6 4.6 L6.6 4.6" stroke="#7ab8f0" stroke-width="0.8"/></svg>
<div class="t" style="left:1010px;top:1067.49px;font-size:7.4px;line-height:9.620000000000001px;color:#f4f4f4;font-weight:bold;letter-spacing:-0.35px;text-shadow:1px 1px 1px rgba(0,0,0,0.6);">Spawn System at Location</div>
<svg style="left:1001.0px;top:1082.5px" width="9" height="10"><path d="M1 1 L4.2 1 L7.8 5 L4.2 9 L1 9 Z" fill="#f4f4f4"/></svg>
<svg style="left:1149.0px;top:1082.5px" width="9" height="10"><path d="M1 1 L4.2 1 L7.8 5 L4.2 9 L1 9 Z" fill="#f4f4f4"/></svg>
<svg style="left:1001.0px;top:1100.0px" width="10" height="9"><circle cx="4" cy="4.5" r="2.8" fill="#111" stroke="#1aa6ee" stroke-width="1.3"/><path d="M7 2.6 L9 4.5 L7 6.4 Z" fill="#1aa6ee"/></svg>
<div class="t" style="left:1012px;top:1096.90px;font-size:6.3px;line-height:8.19px;color:#e6e6e6;letter-spacing:-0.32px;">System Template</div>
<div style="left:1015px;top:1104px;width:38px;height:8.5px;background:#262626;border-radius:1px;"></div>
<div class="t" style="left:1017px;top:1104.74px;font-size:5.4px;line-height:7.0200000000000005px;color:#5e5e5e;letter-spacing:-0.3px;">NS_WinterSnowSt</div>
<svg style="left:1045px;top:1106.2px" width="6" height="4"><path d="M0 0 L6 0 L3 3.5 Z" fill="#5e5e5e"/></svg>
<svg style="left:1056px;top:1104.2px" width="18" height="8"><path d="M1 4 L4 1 L4 3 L7 3 L7 5 L4 5 L4 7 Z" fill="#4a4a4a"/><circle cx="13" cy="3.5" r="2.5" fill="none" stroke="#4a4a4a" stroke-width="1"/><path d="M11 5.5 L9.5 7" stroke="#4a4a4a" stroke-width="1"/></svg>
<div class="t" style="right:1414px;top:1096.90px;font-size:6.3px;line-height:8.19px;color:#e6e6e6;letter-spacing:-0.32px;">Return Value</div>
<svg style="left:1148.0px;top:1096.5px" width="10" height="9"><circle cx="4" cy="4.5" r="3.4" fill="#1aa6ee"/><path d="M7 2.6 L9 4.5 L7 6.4 Z" fill="#1aa6ee"/></svg>
<svg style="left:1001.0px;top:1124.0px" width="10" height="9"><circle cx="4" cy="4.5" r="2.8" fill="#111" stroke="#f0b020" stroke-width="1.3"/><path d="M7 2.6 L9 4.5 L7 6.4 Z" fill="#f0b020"/></svg>
<div class="t" style="left:1012px;top:1118.90px;font-size:6.3px;line-height:8.19px;color:#e6e6e6;letter-spacing:-0.32px;">Location</div>
<div style="left:1016px;top:1127px;width:22px;height:10px;border:1px solid #b8b8b8;"></div>
<div class="t" style="left:1018px;top:1127.84px;font-size:6.4px;line-height:8.32px;color:#6a6a6a;letter-spacing:0px;">X</div>
<div class="t" style="right:1524px;top:1127.45px;font-size:7px;line-height:9.1px;color:#eee;letter-spacing:-0.1px;">0.0</div>
<div style="left:1040px;top:1127px;width:22px;height:10px;border:1px solid #b8b8b8;"></div>
<div class="t" style="left:1042px;top:1127.84px;font-size:6.4px;line-height:8.32px;color:#6a6a6a;letter-spacing:0px;">Y</div>
<div class="t" style="right:1500px;top:1127.45px;font-size:7px;line-height:9.1px;color:#eee;letter-spacing:-0.1px;">0.0</div>
<div style="left:1064px;top:1127px;width:22px;height:10px;border:1px solid #b8b8b8;"></div>
<div class="t" style="left:1066px;top:1127.84px;font-size:6.4px;line-height:8.32px;color:#6a6a6a;letter-spacing:0px;">Z</div>
<div class="t" style="right:1476px;top:1127.45px;font-size:7px;line-height:9.1px;color:#eee;letter-spacing:-0.1px;">0.0</div>
<svg style="left:1001.0px;top:1148.5px" width="10" height="9"><circle cx="4" cy="4.5" r="2.8" fill="#111" stroke="#9090f0" stroke-width="1.3"/><path d="M7 2.6 L9 4.5 L7 6.4 Z" fill="#9090f0"/></svg>
<div class="t" style="left:1012px;top:1143.90px;font-size:6.3px;line-height:8.19px;color:#e6e6e6;letter-spacing:-0.32px;">Rotation</div>
<div style="left:1016px;top:1152px;width:22px;height:10px;border:1px solid #b8b8b8;"></div>
<div class="t" style="left:1018px;top:1152.84px;font-size:6.4px;line-height:8.32px;color:#6a6a6a;letter-spacing:0px;">X</div>
<div class="t" style="right:1524px;top:1152.45px;font-size:7px;line-height:9.1px;color:#eee;letter-spacing:-0.1px;">0.0</div>
<div style="left:1040px;top:1152px;width:22px;height:10px;border:1px solid #b8b8b8;"></div>
<div class="t" style="left:1042px;top:1152.84px;font-size:6.4px;line-height:8.32px;color:#6a6a6a;letter-spacing:0px;">Y</div>
<div class="t" style="right:1500px;top:1152.45px;font-size:7px;line-height:9.1px;color:#eee;letter-spacing:-0.1px;">0.0</div>
<div style="left:1064px;top:1152px;width:22px;height:10px;border:1px solid #b8b8b8;"></div>
<div class="t" style="left:1066px;top:1152.84px;font-size:6.4px;line-height:8.32px;color:#6a6a6a;letter-spacing:0px;">Z</div>
<div class="t" style="right:1476px;top:1152.45px;font-size:7px;line-height:9.1px;color:#eee;letter-spacing:-0.1px;">0.0</div>
<svg style="left:1001.0px;top:1173.5px" width="10" height="9"><circle cx="4" cy="4.5" r="2.8" fill="#111" stroke="#f0b020" stroke-width="1.3"/><path d="M7 2.6 L9 4.5 L7 6.4 Z" fill="#f0b020"/></svg>
<div class="t" style="left:1012px;top:1168.90px;font-size:6.3px;line-height:8.19px;color:#e6e6e6;letter-spacing:-0.32px;">Scale</div>
<div style="left:1016px;top:1177px;width:22px;height:10px;border:1px solid #b8b8b8;"></div>
<div class="t" style="left:1018px;top:1177.84px;font-size:6.4px;line-height:8.32px;color:#6a6a6a;letter-spacing:0px;">X</div>
<div class="t" style="right:1524px;top:1177.45px;font-size:7px;line-height:9.1px;color:#eee;letter-spacing:-0.1px;">1.0</div>
<div style="left:1040px;top:1177px;width:22px;height:10px;border:1px solid #b8b8b8;"></div>
<div class="t" style="left:1042px;top:1177.84px;font-size:6.4px;line-height:8.32px;color:#6a6a6a;letter-spacing:0px;">Y</div>
<div class="t" style="right:1500px;top:1177.45px;font-size:7px;line-height:9.1px;color:#eee;letter-spacing:-0.1px;">1.0</div>
<div style="left:1064px;top:1177px;width:22px;height:10px;border:1px solid #b8b8b8;"></div>
<div class="t" style="left:1066px;top:1177.84px;font-size:6.4px;line-height:8.32px;color:#6a6a6a;letter-spacing:0px;">Z</div>
<div class="t" style="right:1476px;top:1177.45px;font-size:7px;line-height:9.1px;color:#eee;letter-spacing:-0.1px;">1.0</div>
<svg style="left:1001.0px;top:1194.5px" width="10" height="9"><circle cx="4" cy="4.5" r="2.8" fill="#111" stroke="#a01010" stroke-width="1.3"/><path d="M7 2.6 L9 4.5 L7 6.4 Z" fill="#a01010"/></svg>
<div class="t" style="left:1012px;top:1194.90px;font-size:6.3px;line-height:8.19px;color:#e6e6e6;letter-spacing:-0.32px;">Auto Destroy</div>
<div style="left:1049px;top:1195px;width:8px;height:8px;background:linear-gradient(#e8e8e8,#bdbdbd);border-radius:1px;"></div>
<svg style="left:1049px;top:1195px" width="8" height="8"><path d="M1.5 4 L3.5 6 L7 1.5" fill="none" stroke="#444" stroke-width="1.2"/></svg>
<svg style="left:1001.0px;top:1210.5px" width="10" height="9"><circle cx="4" cy="4.5" r="2.8" fill="#111" stroke="#a01010" stroke-width="1.3"/><path d="M7 2.6 L9 4.5 L7 6.4 Z" fill="#a01010"/></svg>
<div class="t" style="left:1012px;top:1210.90px;font-size:6.3px;line-height:8.19px;color:#e6e6e6;letter-spacing:-0.32px;">Auto Activate</div>
<div style="left:1051px;top:1211px;width:8px;height:8px;background:linear-gradient(#e8e8e8,#bdbdbd);border-radius:1px;"></div>
<svg style="left:1051px;top:1211px" width="8" height="8"><path d="M1.5 4 L3.5 6 L7 1.5" fill="none" stroke="#444" stroke-width="1.2"/></svg>
<svg style="left:1001.0px;top:1230.5px" width="10" height="9"><circle cx="4" cy="4.5" r="2.8" fill="#111" stroke="#0a7a72" stroke-width="1.3"/><path d="M7 2.6 L9 4.5 L7 6.4 Z" fill="#0a7a72"/></svg>
<div class="t" style="left:1012px;top:1225.90px;font-size:6.3px;line-height:8.19px;color:#e6e6e6;letter-spacing:-0.32px;">Pooling Method</div>
<div style="left:1015px;top:1233px;width:86px;height:11px;background:linear-gradient(#f0f0f0,#c4c4c4);border-radius:2px;"></div>
<div class="t" style="left:1018px;top:1234.34px;font-size:6.4px;line-height:8.32px;color:#333;letter-spacing:-0.1px;">None</div>
<svg style="left:1091px;top:1236.5px" width="7" height="4"><path d="M0 0 L7 0 L3.5 4 Z" fill="#111"/></svg>
<svg style="left:1001.0px;top:1250.5px" width="10" height="9"><circle cx="4" cy="4.5" r="2.8" fill="#111" stroke="#a01010" stroke-width="1.3"/><path d="M7 2.6 L9 4.5 L7 6.4 Z" fill="#a01010"/></svg>
<div class="t" style="left:1012px;top:1250.90px;font-size:6.3px;line-height:8.19px;color:#e6e6e6;letter-spacing:-0.32px;">Pre Cull Check</div>
<div style="left:1054px;top:1251px;width:8px;height:8px;background:linear-gradient(#e8e8e8,#bdbdbd);border-radius:1px;"></div>
<svg style="left:1054px;top:1251px" width="8" height="8"><path d="M1.5 4 L3.5 6 L7 1.5" fill="none" stroke="#444" stroke-width="1.2"/></svg>
<div style="left:1195px;top:474px;width:83px;height:35px;border-radius:6px;background:rgba(10,10,10,0.9);box-shadow:0 2px 3px rgba(0,0,0,0.35);"></div>
<div style="left:1196px;top:475px;width:81px;height:33px;border-radius:5px;background:linear-gradient(#3c3e40 0%,#44474a 40%,#46484a 100%);"></div>
<div style="left:1198px;top:476px;width:77px;height:12px;border-radius:4px 4px 0 0;background:linear-gradient(rgba(90,170,220,0.0) 0%,rgba(70,160,215,0.55) 25%,rgba(60,130,180,0.35) 60%,rgba(60,130,180,0) 100%);-webkit-mask-image:linear-gradient(to right,transparent,#000 25%,#000 75%,transparent);mask-image:linear-gradient(to right,transparent,#000 25%,#000 75%,transparent);"></div>
<div class="t" style="left:736.5px;width:1000px;text-align:center;top:476.56px;font-size:7.6px;line-height:9.879999999999999px;color:#f0f0f0;font-weight:bold;letter-spacing:-0.2px;">SET</div>
<svg style="left:1201.5px;top:482.5px" width="9" height="10"><path d="M1 1 L4.2 1 L7.8 5 L4.2 9 L1 9 Z" fill="#f4f4f4"/></svg>
<svg style="left:1263.5px;top:482.5px" width="9" height="10"><path d="M1 1 L4.2 1 L7.8 5 L4.2 9 L1 9 Z" fill="#f4f4f4"/></svg>
<svg style="left:1202.0px;top:496.5px" width="10" height="9"><circle cx="4" cy="4.5" r="3.4" fill="#1aa6ee"/><path d="M7 2.6 L9 4.5 L7 6.4 Z" fill="#1aa6ee"/></svg>
<div class="t" style="left:1213px;top:496.90px;font-size:6.3px;line-height:8.19px;color:#e6e6e6;letter-spacing:-0.32px;">Active Storm</div>
<svg style="left:1263.0px;top:496.5px" width="10" height="9"><circle cx="4" cy="4.5" r="2.8" fill="#111" stroke="#1aa6ee" stroke-width="1.3"/><path d="M7 2.6 L9 4.5 L7 6.4 Z" fill="#1aa6ee"/></svg>
<div style="left:1195px;top:673.5px;width:84px;height:35px;border-radius:6px;background:rgba(10,10,10,0.9);box-shadow:0 2px 3px rgba(0,0,0,0.35);"></div>
<div style="left:1196px;top:674.5px;width:82px;height:33px;border-radius:5px;background:linear-gradient(#3c3e40 0%,#44474a 40%,#46484a 100%);"></div>
<div style="left:1198px;top:675.5px;width:78px;height:12px;border-radius:4px 4px 0 0;background:linear-gradient(rgba(90,170,220,0.0) 0%,rgba(70,160,215,0.55) 25%,rgba(60,130,180,0.35) 60%,rgba(60,130,180,0) 100%);-webkit-mask-image:linear-gradient(to right,transparent,#000 25%,#000 75%,transparent);mask-image:linear-gradient(to right,transparent,#000 25%,#000 75%,transparent);"></div>
<div class="t" style="left:737.0px;width:1000px;text-align:center;top:676.06px;font-size:7.6px;line-height:9.879999999999999px;color:#f0f0f0;font-weight:bold;letter-spacing:-0.2px;">SET</div>
<svg style="left:1201.5px;top:682.0px" width="9" height="10"><path d="M1 1 L4.2 1 L7.8 5 L4.2 9 L1 9 Z" fill="#f4f4f4"/></svg>
<svg style="left:1264.5px;top:682.0px" width="9" height="10"><path d="M1 1 L4.2 1 L7.8 5 L4.2 9 L1 9 Z" fill="#f4f4f4"/></svg>
<svg style="left:1202.0px;top:696.0px" width="10" height="9"><circle cx="4" cy="4.5" r="3.4" fill="#1aa6ee"/><path d="M7 2.6 L9 4.5 L7 6.4 Z" fill="#1aa6ee"/></svg>
<div class="t" style="left:1213px;top:696.40px;font-size:6.3px;line-height:8.19px;color:#e6e6e6;letter-spacing:-0.32px;">Active Storm</div>
<svg style="left:1264.0px;top:696.0px" width="10" height="9"><circle cx="4" cy="4.5" r="2.8" fill="#111" stroke="#1aa6ee" stroke-width="1.3"/><path d="M7 2.6 L9 4.5 L7 6.4 Z" fill="#1aa6ee"/></svg>
<div style="left:1179px;top:873px;width:84px;height:36px;border-radius:6px;background:rgba(10,10,10,0.9);box-shadow:0 2px 3px rgba(0,0,0,0.35);"></div>
<div style="left:1180px;top:874px;width:82px;height:34px;border-radius:5px;background:linear-gradient(#3c3e40 0%,#44474a 40%,#46484a 100%);"></div>
<div style="left:1182px;top:875px;width:78px;height:12px;border-radius:4px 4px 0 0;background:linear-gradient(rgba(90,170,220,0.0) 0%,rgba(70,160,215,0.55) 25%,rgba(60,130,180,0.35) 60%,rgba(60,130,180,0) 100%);-webkit-mask-image:linear-gradient(to right,transparent,#000 25%,#000 75%,transparent);mask-image:linear-gradient(to right,transparent,#000 25%,#000 75%,transparent);"></div>
<div class="t" style="left:721.0px;width:1000px;text-align:center;top:875.56px;font-size:7.6px;line-height:9.879999999999999px;color:#f0f0f0;font-weight:bold;letter-spacing:-0.2px;">SET</div>
<svg style="left:1185.5px;top:881.5px" width="9" height="10"><path d="M1 1 L4.2 1 L7.8 5 L4.2 9 L1 9 Z" fill="#f4f4f4"/></svg>
<svg style="left:1248.5px;top:881.5px" width="9" height="10"><path d="M1 1 L4.2 1 L7.8 5 L4.2 9 L1 9 Z" fill="#f4f4f4"/></svg>
<svg style="left:1186.0px;top:895.5px" width="10" height="9"><circle cx="4" cy="4.5" r="3.4" fill="#1aa6ee"/><path d="M7 2.6 L9 4.5 L7 6.4 Z" fill="#1aa6ee"/></svg>
<div class="t" style="left:1197px;top:895.90px;font-size:6.3px;line-height:8.19px;color:#e6e6e6;letter-spacing:-0.32px;">Active Storm</div>
<svg style="left:1248.0px;top:895.5px" width="10" height="9"><circle cx="4" cy="4.5" r="2.8" fill="#111" stroke="#1aa6ee" stroke-width="1.3"/><path d="M7 2.6 L9 4.5 L7 6.4 Z" fill="#1aa6ee"/></svg>
<div style="left:1188px;top:1074px;width:82px;height:35px;border-radius:6px;background:rgba(10,10,10,0.9);box-shadow:0 2px 3px rgba(0,0,0,0.35);"></div>
<div style="left:1189px;top:1075px;width:80px;height:33px;border-radius:5px;background:linear-gradient(#3c3e40 0%,#44474a 40%,#46484a 100%);"></div>
<div style="left:1191px;top:1076px;width:76px;height:12px;border-radius:4px 4px 0 0;background:linear-gradient(rgba(90,170,220,0.0) 0%,rgba(70,160,215,0.55) 25%,rgba(60,130,180,0.35) 60%,rgba(60,130,180,0) 100%);-webkit-mask-image:linear-gradient(to right,transparent,#000 25%,#000 75%,transparent);mask-image:linear-gradient(to right,transparent,#000 25%,#000 75%,transparent);"></div>
<div class="t" style="left:729.0px;width:1000px;text-align:center;top:1076.56px;font-size:7.6px;line-height:9.879999999999999px;color:#f0f0f0;font-weight:bold;letter-spacing:-0.2px;">SET</div>
<svg style="left:1194.5px;top:1082.5px" width="9" height="10"><path d="M1 1 L4.2 1 L7.8 5 L4.2 9 L1 9 Z" fill="#f4f4f4"/></svg>
<svg style="left:1255.5px;top:1082.5px" width="9" height="10"><path d="M1 1 L4.2 1 L7.8 5 L4.2 9 L1 9 Z" fill="#f4f4f4"/></svg>
<svg style="left:1195.0px;top:1096.5px" width="10" height="9"><circle cx="4" cy="4.5" r="3.4" fill="#1aa6ee"/><path d="M7 2.6 L9 4.5 L7 6.4 Z" fill="#1aa6ee"/></svg>
<div class="t" style="left:1206px;top:1096.90px;font-size:6.3px;line-height:8.19px;color:#e6e6e6;letter-spacing:-0.32px;">Active Storm</div>
<svg style="left:1255.0px;top:1096.5px" width="10" height="9"><circle cx="4" cy="4.5" r="2.8" fill="#111" stroke="#1aa6ee" stroke-width="1.3"/><path d="M7 2.6 L9 4.5 L7 6.4 Z" fill="#1aa6ee"/></svg>
<div style="left:1812px;top:1089px;width:86px;height:36px;border-radius:6px;background:rgba(10,10,10,0.9);box-shadow:0 2px 3px rgba(0,0,0,0.35);"></div>
<div style="left:1813px;top:1090px;width:84px;height:34px;border-radius:5px;background:linear-gradient(#3c3e40 0%,#44474a 40%,#46484a 100%);"></div>
<div style="left:1815px;top:1091px;width:80px;height:12px;border-radius:4px 4px 0 0;background:linear-gradient(rgba(90,170,220,0.0) 0%,rgba(70,160,215,0.55) 25%,rgba(60,130,180,0.35) 60%,rgba(60,130,180,0) 100%);-webkit-mask-image:linear-gradient(to right,transparent,#000 25%,#000 75%,transparent);mask-image:linear-gradient(to right,transparent,#000 25%,#000 75%,transparent);"></div>
<div class="t" style="left:1355.0px;width:1000px;text-align:center;top:1091.56px;font-size:7.6px;line-height:9.879999999999999px;color:#f0f0f0;font-weight:bold;letter-spacing:-0.2px;">SET</div>
<svg style="left:1818.5px;top:1097.5px" width="9" height="10"><path d="M1 1 L4.2 1 L7.8 5 L4.2 9 L1 9 Z" fill="#f4f4f4"/></svg>
<svg style="left:1883.5px;top:1097.5px" width="9" height="10"><path d="M1 1 L4.2 1 L7.8 5 L4.2 9 L1 9 Z" fill="#f4f4f4"/></svg>
<svg style="left:1819.0px;top:1111.5px" width="10" height="9"><circle cx="4" cy="4.5" r="3.4" fill="#1aa6ee"/><path d="M7 2.6 L9 4.5 L7 6.4 Z" fill="#1aa6ee"/></svg>
<div class="t" style="left:1830px;top:1111.90px;font-size:6.3px;line-height:8.19px;color:#e6e6e6;letter-spacing:-0.32px;">Ambient Snow</div>
<svg style="left:1883.0px;top:1111.5px" width="10" height="9"><circle cx="4" cy="4.5" r="2.8" fill="#111" stroke="#1aa6ee" stroke-width="1.3"/><path d="M7 2.6 L9 4.5 L7 6.4 Z" fill="#1aa6ee"/></svg>
<div style="left:1212px;top:561px;width:66px;height:18px;border-radius:6px;background:rgba(10,10,10,0.9);box-shadow:0 2px 3px rgba(0,0,0,0.35);"></div>
<div style="left:1213px;top:562px;width:64px;height:16px;border-radius:5px;background:linear-gradient(#3c3e40 0%,#44474a 45%,#46484a 100%);"></div>
<div style="left:1215px;top:563px;width:60px;height:7px;border-radius:4px 4px 0 0;background:linear-gradient(rgba(70,160,215,0.1) 0%,rgba(70,160,215,0.6) 35%,rgba(70,160,215,0) 100%);-webkit-mask-image:linear-gradient(to right,transparent,#000 20%,#000 80%,transparent);mask-image:linear-gradient(to right,transparent,#000 20%,#000 80%,transparent);"></div>
<div class="t" style="right:1299px;top:565.90px;font-size:6.3px;line-height:8.19px;color:#e6e6e6;letter-spacing:-0.35px;">Rain</div>
<svg style="left:1263.0px;top:565.5px" width="10" height="9"><circle cx="4" cy="4.5" r="3.4" fill="#1aa6ee"/></svg>
<div style="left:1227px;top:730px;width:68px;height:18px;border-radius:6px;background:rgba(10,10,10,0.9);box-shadow:0 2px 3px rgba(0,0,0,0.35);"></div>
<div style="left:1228px;top:731px;width:66px;height:16px;border-radius:5px;background:linear-gradient(#3c3e40 0%,#44474a 45%,#46484a 100%);"></div>
<div style="left:1230px;top:732px;width:62px;height:7px;border-radius:4px 4px 0 0;background:linear-gradient(rgba(70,160,215,0.1) 0%,rgba(70,160,215,0.6) 35%,rgba(70,160,215,0) 100%);-webkit-mask-image:linear-gradient(to right,transparent,#000 20%,#000 80%,transparent);mask-image:linear-gradient(to right,transparent,#000 20%,#000 80%,transparent);"></div>
<div class="t" style="right:1282px;top:734.90px;font-size:6.3px;line-height:8.19px;color:#e6e6e6;letter-spacing:-0.35px;">Rain</div>
<svg style="left:1280.0px;top:734.5px" width="10" height="9"><circle cx="4" cy="4.5" r="3.4" fill="#1aa6ee"/></svg>
<div style="left:1243px;top:922px;width:68px;height:18px;border-radius:6px;background:rgba(10,10,10,0.9);box-shadow:0 2px 3px rgba(0,0,0,0.35);"></div>
<div style="left:1244px;top:923px;width:66px;height:16px;border-radius:5px;background:linear-gradient(#3c3e40 0%,#44474a 45%,#46484a 100%);"></div>
<div style="left:1246px;top:924px;width:62px;height:7px;border-radius:4px 4px 0 0;background:linear-gradient(rgba(70,160,215,0.1) 0%,rgba(70,160,215,0.6) 35%,rgba(70,160,215,0) 100%);-webkit-mask-image:linear-gradient(to right,transparent,#000 20%,#000 80%,transparent);mask-image:linear-gradient(to right,transparent,#000 20%,#000 80%,transparent);"></div>
<div class="t" style="right:1266px;top:926.90px;font-size:6.3px;line-height:8.19px;color:#e6e6e6;letter-spacing:-0.35px;">Rain</div>
<svg style="left:1296.0px;top:926.5px" width="10" height="9"><circle cx="4" cy="4.5" r="3.4" fill="#1aa6ee"/></svg>
<div style="left:1195px;top:946px;width:123px;height:18px;border-radius:6px;background:rgba(10,10,10,0.9);box-shadow:0 2px 3px rgba(0,0,0,0.35);"></div>
<div style="left:1196px;top:947px;width:121px;height:16px;border-radius:5px;background:linear-gradient(#3c3e40 0%,#44474a 45%,#46484a 100%);"></div>
<div style="left:1198px;top:948px;width:117px;height:7px;border-radius:4px 4px 0 0;background:linear-gradient(rgba(70,160,215,0.1) 0%,rgba(70,160,215,0.6) 35%,rgba(70,160,215,0) 100%);-webkit-mask-image:linear-gradient(to right,transparent,#000 20%,#000 80%,transparent);mask-image:linear-gradient(to right,transparent,#000 20%,#000 80%,transparent);"></div>
<div class="t" style="right:1259px;top:950.90px;font-size:6.3px;line-height:8.19px;color:#e6e6e6;letter-spacing:-0.35px;">Env Brown Noise Ashending Rem Cue</div>
<svg style="left:1303.0px;top:950.5px" width="10" height="9"><circle cx="4" cy="4.5" r="3.4" fill="#1aa6ee"/></svg>
<div style="left:1171px;top:1137px;width:68px;height:18px;border-radius:6px;background:rgba(10,10,10,0.9);box-shadow:0 2px 3px rgba(0,0,0,0.35);"></div>
<div style="left:1172px;top:1138px;width:66px;height:16px;border-radius:5px;background:linear-gradient(#3c3e40 0%,#44474a 45%,#46484a 100%);"></div>
<div style="left:1174px;top:1139px;width:62px;height:7px;border-radius:4px 4px 0 0;background:linear-gradient(rgba(70,160,215,0.1) 0%,rgba(70,160,215,0.6) 35%,rgba(70,160,215,0) 100%);-webkit-mask-image:linear-gradient(to right,transparent,#000 20%,#000 80%,transparent);mask-image:linear-gradient(to right,transparent,#000 20%,#000 80%,transparent);"></div>
<div class="t" style="right:1338px;top:1141.90px;font-size:6.3px;line-height:8.19px;color:#e6e6e6;letter-spacing:-0.35px;">Rain</div>
<svg style="left:1224.0px;top:1141.5px" width="10" height="9"><circle cx="4" cy="4.5" r="3.4" fill="#1aa6ee"/></svg>
<div style="left:1164px;top:1154px;width:122px;height:18px;border-radius:6px;background:rgba(10,10,10,0.9);box-shadow:0 2px 3px rgba(0,0,0,0.35);"></div>
<div style="left:1165px;top:1155px;width:120px;height:16px;border-radius:5px;background:linear-gradient(#3c3e40 0%,#44474a 45%,#46484a 100%);"></div>
<div style="left:1167px;top:1156px;width:116px;height:7px;border-radius:4px 4px 0 0;background:linear-gradient(rgba(70,160,215,0.1) 0%,rgba(70,160,215,0.6) 35%,rgba(70,160,215,0) 100%);-webkit-mask-image:linear-gradient(to right,transparent,#000 20%,#000 80%,transparent);mask-image:linear-gradient(to right,transparent,#000 20%,#000 80%,transparent);"></div>
<div class="t" style="right:1291px;top:1158.90px;font-size:6.3px;line-height:8.19px;color:#e6e6e6;letter-spacing:-0.35px;">Env Brown Noise Ashending Rem Cue</div>
<svg style="left:1271.0px;top:1158.5px" width="10" height="9"><circle cx="4" cy="4.5" r="3.4" fill="#1aa6ee"/></svg>
<div style="left:1804px;top:553px;width:73px;height:18px;border-radius:6px;background:rgba(10,10,10,0.9);box-shadow:0 2px 3px rgba(0,0,0,0.35);"></div>
<div style="left:1805px;top:554px;width:71px;height:16px;border-radius:5px;background:linear-gradient(#3c3e40 0%,#44474a 45%,#46484a 100%);"></div>
<div style="left:1807px;top:555px;width:67px;height:7px;border-radius:4px 4px 0 0;background:linear-gradient(rgba(60,110,200,0.1) 0%,rgba(60,110,200,0.6) 35%,rgba(60,110,200,0) 100%);-webkit-mask-image:linear-gradient(to right,transparent,#000 20%,#000 80%,transparent);mask-image:linear-gradient(to right,transparent,#000 20%,#000 80%,transparent);"></div>
<div class="t" style="right:700px;top:557.90px;font-size:6.3px;line-height:8.19px;color:#e6e6e6;letter-spacing:-0.35px;">Storm Cloud Color</div>
<svg style="left:1862.0px;top:557.5px" width="10" height="9"><circle cx="4" cy="4.5" r="3.4" fill="#0a50d0"/></svg>
<div style="left:1811px;top:761px;width:75px;height:18px;border-radius:6px;background:rgba(10,10,10,0.9);box-shadow:0 2px 3px rgba(0,0,0,0.35);"></div>
<div style="left:1812px;top:762px;width:73px;height:16px;border-radius:5px;background:linear-gradient(#3c3e40 0%,#44474a 45%,#46484a 100%);"></div>
<div style="left:1814px;top:763px;width:69px;height:7px;border-radius:4px 4px 0 0;background:linear-gradient(rgba(60,110,200,0.1) 0%,rgba(60,110,200,0.6) 35%,rgba(60,110,200,0) 100%);-webkit-mask-image:linear-gradient(to right,transparent,#000 20%,#000 80%,transparent);mask-image:linear-gradient(to right,transparent,#000 20%,#000 80%,transparent);"></div>
<div class="t" style="right:691px;top:765.90px;font-size:6.3px;line-height:8.19px;color:#e6e6e6;letter-spacing:-0.35px;">Storm Cloud Color</div>
<svg style="left:1871.0px;top:765.5px" width="10" height="9"><circle cx="4" cy="4.5" r="3.4" fill="#0a50d0"/></svg>
<div style="left:1915px;top:953px;width:74px;height:18px;border-radius:6px;background:rgba(10,10,10,0.9);box-shadow:0 2px 3px rgba(0,0,0,0.35);"></div>
<div style="left:1916px;top:954px;width:72px;height:16px;border-radius:5px;background:linear-gradient(#3c3e40 0%,#44474a 45%,#46484a 100%);"></div>
<div style="left:1918px;top:955px;width:68px;height:7px;border-radius:4px 4px 0 0;background:linear-gradient(rgba(60,110,200,0.1) 0%,rgba(60,110,200,0.6) 35%,rgba(60,110,200,0) 100%);-webkit-mask-image:linear-gradient(to right,transparent,#000 20%,#000 80%,transparent);mask-image:linear-gradient(to right,transparent,#000 20%,#000 80%,transparent);"></div>
<div class="t" style="right:588px;top:957.90px;font-size:6.3px;line-height:8.19px;color:#e6e6e6;letter-spacing:-0.35px;">Storm Cloud Color</div>
<svg style="left:1974.0px;top:957.5px" width="10" height="9"><circle cx="4" cy="4.5" r="3.4" fill="#0a50d0"/></svg>
<div style="left:2084px;top:785px;width:76px;height:18px;border-radius:6px;background:rgba(10,10,10,0.9);box-shadow:0 2px 3px rgba(0,0,0,0.35);"></div>
<div style="left:2085px;top:786px;width:74px;height:16px;border-radius:5px;background:linear-gradient(#3c3e40 0%,#44474a 45%,#46484a 100%);"></div>
<div style="left:2087px;top:787px;width:70px;height:7px;border-radius:4px 4px 0 0;background:linear-gradient(rgba(70,160,215,0.1) 0%,rgba(70,160,215,0.6) 35%,rgba(70,160,215,0) 100%);-webkit-mask-image:linear-gradient(to right,transparent,#000 20%,#000 80%,transparent);mask-image:linear-gradient(to right,transparent,#000 20%,#000 80%,transparent);"></div>
<div class="t" style="right:417px;top:789.90px;font-size:6.3px;line-height:8.19px;color:#e6e6e6;letter-spacing:-0.35px;">As Day Night Cycle</div>
<svg style="left:2145.0px;top:789.5px" width="10" height="9"><circle cx="4" cy="4.5" r="3.4" fill="#1aa6ee"/></svg>
<div style="left:1739px;top:1186px;width:67px;height:18px;border-radius:6px;background:rgba(10,10,10,0.9);box-shadow:0 2px 3px rgba(0,0,0,0.35);"></div>
<div style="left:1740px;top:1187px;width:65px;height:16px;border-radius:5px;background:linear-gradient(#3c3e40 0%,#44474a 45%,#46484a 100%);"></div>
<div style="left:1742px;top:1188px;width:61px;height:7px;border-radius:4px 4px 0 0;background:linear-gradient(rgba(70,160,215,0.1) 0%,rgba(70,160,215,0.6) 35%,rgba(70,160,215,0) 100%);-webkit-mask-image:linear-gradient(to right,transparent,#000 20%,#000 80%,transparent);mask-image:linear-gradient(to right,transparent,#000 20%,#000 80%,transparent);"></div>
<div class="t" style="right:771px;top:1190.90px;font-size:6.3px;line-height:8.19px;color:#e6e6e6;letter-spacing:-0.35px;">Ambient Snow</div>
<svg style="left:1791.0px;top:1190.5px" width="10" height="9"><circle cx="4" cy="4.5" r="3.4" fill="#1aa6ee"/></svg>
<div style="left:1811px;top:1185px;width:112px;height:18px;border-radius:6px;background:rgba(10,10,10,0.9);box-shadow:0 2px 3px rgba(0,0,0,0.35);"></div>
<div style="left:1812px;top:1186px;width:110px;height:16px;border-radius:5px;background:linear-gradient(#3c3e40 0%,#44474a 45%,#46484a 100%);"></div>
<div style="left:1814px;top:1187px;width:106px;height:7px;border-radius:4px 4px 0 0;background:linear-gradient(rgba(70,160,215,0.1) 0%,rgba(70,160,215,0.6) 35%,rgba(70,160,215,0) 100%);-webkit-mask-image:linear-gradient(to right,transparent,#000 20%,#000 80%,transparent);mask-image:linear-gradient(to right,transparent,#000 20%,#000 80%,transparent);"></div>
<div class="t" style="right:654px;top:1189.90px;font-size:6.3px;line-height:8.19px;color:#e6e6e6;letter-spacing:-0.35px;">NS Winter Snow</div>
<svg style="left:1908.0px;top:1189.5px" width="10" height="9"><circle cx="4" cy="4.5" r="3.4" fill="#1aa6ee"/></svg>
<svg style="left:1818.0px;top:1189.5px" width="10" height="9"><circle cx="4" cy="4.5" r="3.4" fill="#1aa6ee"/><path d="M7 2.6 L9 4.5 L7 6.4 Z" fill="#1aa6ee"/></svg>
<div class="t" style="left:1829px;top:1189.90px;font-size:6.3px;line-height:8.19px;color:#e6e6e6;letter-spacing:-0.32px;">Target</div>
<div style="left:1331px;top:466px;width:104px;height:67px;border-radius:6px;border:1px solid rgba(8,8,8,0.9);box-shadow:0 2px 3px rgba(0,0,0,0.35);"></div>
<div style="left:1332px;top:467px;width:102px;height:65px;border-radius:5px;background:rgba(14,15,14,0.82);"></div>
<div style="left:1332px;top:467px;width:102px;height:20px;border-radius:5px 5px 0 0;background:linear-gradient(to right,rgba(0,0,0,0) 0%,rgba(18,18,18,0.55) 100%),linear-gradient(#6a9cc4 0%,#2e5878 38%,#1f3a50 62%,#4a7aa0 100%);"></div>
<svg style="left:1335.5px;top:467.8px" width="9" height="11"><path d="M1 10.2 C2.6 10.4 3.2 9.6 3.7 7.6 L5 2.8 C5.5 1.1 6.3 0.6 8 0.8" fill="none" stroke="#7ab8f0" stroke-width="1.2"/><path d="M2.6 4.6 L6.6 4.6" stroke="#7ab8f0" stroke-width="0.8"/></svg>
<div class="t" style="left:1346px;top:468.49px;font-size:7.4px;line-height:9.620000000000001px;color:#f4f4f4;font-weight:bold;letter-spacing:-0.35px;text-shadow:1px 1px 1px rgba(0,0,0,0.6);">Play</div>
<div class="t" style="left:1346px;top:478.27px;font-size:6.2px;line-height:8.06px;color:#9cb8b8;font-style:italic;letter-spacing:-0.3px;">Target is Audio Component</div>
<svg style="left:1336.6px;top:490.5px" width="9" height="10"><path d="M1 1 L4.2 1 L7.8 5 L4.2 9 L1 9 Z" fill="none" stroke="#e8e8e8" stroke-width="1.1"/></svg>
<svg style="left:1421.0px;top:490.5px" width="9" height="10"><path d="M1 1 L4.2 1 L7.8 5 L4.2 9 L1 9 Z" fill="#f4f4f4"/></svg>
<svg style="left:1337.0px;top:504.5px" width="10" height="9"><circle cx="4" cy="4.5" r="3.4" fill="#1aa6ee"/><path d="M7 2.6 L9 4.5 L7 6.4 Z" fill="#1aa6ee"/></svg>
<div class="t" style="left:1348px;top:504.90px;font-size:6.3px;line-height:8.19px;color:#e6e6e6;letter-spacing:-0.32px;">Target</div>
<svg style="left:1337.0px;top:518.5px" width="10" height="9"><circle cx="4" cy="4.5" r="2.8" fill="#111" stroke="#7ee030" stroke-width="1.3"/><path d="M7 2.6 L9 4.5 L7 6.4 Z" fill="#7ee030"/></svg>
<div class="t" style="left:1348px;top:518.90px;font-size:6.3px;line-height:8.19px;color:#e6e6e6;letter-spacing:-0.32px;">Start Time</div>
<div style="left:1379px;top:519px;width:13px;height:8.5px;border:1px solid #c8c8c8;"></div>
<div class="t" style="left:885.5px;width:1000px;text-align:center;top:519.45px;font-size:6.3px;line-height:8.19px;color:#e6e6e6;letter-spacing:-0.15px;">0.0</div>
<div style="left:1323px;top:666px;width:104px;height:67px;border-radius:6px;border:1px solid rgba(8,8,8,0.9);box-shadow:0 2px 3px rgba(0,0,0,0.35);"></div>
<div style="left:1324px;top:667px;width:102px;height:65px;border-radius:5px;background:rgba(14,15,14,0.82);"></div>
<div style="left:1324px;top:667px;width:102px;height:20px;border-radius:5px 5px 0 0;background:linear-gradient(to right,rgba(0,0,0,0) 0%,rgba(18,18,18,0.55) 100%),linear-gradient(#6a9cc4 0%,#2e5878 38%,#1f3a50 62%,#4a7aa0 100%);"></div>
<svg style="left:1327.5px;top:667.8px" width="9" height="11"><path d="M1 10.2 C2.6 10.4 3.2 9.6 3.7 7.6 L5 2.8 C5.5 1.1 6.3 0.6 8 0.8" fill="none" stroke="#7ab8f0" stroke-width="1.2"/><path d="M2.6 4.6 L6.6 4.6" stroke="#7ab8f0" stroke-width="0.8"/></svg>
<div class="t" style="left:1338px;top:668.49px;font-size:7.4px;line-height:9.620000000000001px;color:#f4f4f4;font-weight:bold;letter-spacing:-0.35px;text-shadow:1px 1px 1px rgba(0,0,0,0.6);">Play</div>
<div class="t" style="left:1338px;top:678.27px;font-size:6.2px;line-height:8.06px;color:#9cb8b8;font-style:italic;letter-spacing:-0.3px;">Target is Audio Component</div>
<svg style="left:1328.6px;top:690.5px" width="9" height="10"><path d="M1 1 L4.2 1 L7.8 5 L4.2 9 L1 9 Z" fill="#f4f4f4"/></svg>
<svg style="left:1413.0px;top:690.5px" width="9" height="10"><path d="M1 1 L4.2 1 L7.8 5 L4.2 9 L1 9 Z" fill="#f4f4f4"/></svg>
<svg style="left:1329.0px;top:704.5px" width="10" height="9"><circle cx="4" cy="4.5" r="3.4" fill="#1aa6ee"/><path d="M7 2.6 L9 4.5 L7 6.4 Z" fill="#1aa6ee"/></svg>
<div class="t" style="left:1340px;top:704.90px;font-size:6.3px;line-height:8.19px;color:#e6e6e6;letter-spacing:-0.32px;">Target</div>
<svg style="left:1329.0px;top:718.5px" width="10" height="9"><circle cx="4" cy="4.5" r="2.8" fill="#111" stroke="#7ee030" stroke-width="1.3"/><path d="M7 2.6 L9 4.5 L7 6.4 Z" fill="#7ee030"/></svg>
<div class="t" style="left:1340px;top:718.90px;font-size:6.3px;line-height:8.19px;color:#e6e6e6;letter-spacing:-0.32px;">Start Time</div>
<div style="left:1371px;top:719px;width:13px;height:8.5px;border:1px solid #c8c8c8;"></div>
<div class="t" style="left:877.5px;width:1000px;text-align:center;top:719.45px;font-size:6.3px;line-height:8.19px;color:#e6e6e6;letter-spacing:-0.15px;">0.0</div>
<div style="left:1339px;top:857px;width:104px;height:67px;border-radius:6px;border:1px solid rgba(8,8,8,0.9);box-shadow:0 2px 3px rgba(0,0,0,0.35);"></div>
<div style="left:1340px;top:858px;width:102px;height:65px;border-radius:5px;background:rgba(14,15,14,0.82);"></div>
<div style="left:1340px;top:858px;width:102px;height:20px;border-radius:5px 5px 0 0;background:linear-gradient(to right,rgba(0,0,0,0) 0%,rgba(18,18,18,0.55) 100%),linear-gradient(#6a9cc4 0%,#2e5878 38%,#1f3a50 62%,#4a7aa0 100%);"></div>
<svg style="left:1343.5px;top:858.8px" width="9" height="11"><path d="M1 10.2 C2.6 10.4 3.2 9.6 3.7 7.6 L5 2.8 C5.5 1.1 6.3 0.6 8 0.8" fill="none" stroke="#7ab8f0" stroke-width="1.2"/><path d="M2.6 4.6 L6.6 4.6" stroke="#7ab8f0" stroke-width="0.8"/></svg>
<div class="t" style="left:1354px;top:859.49px;font-size:7.4px;line-height:9.620000000000001px;color:#f4f4f4;font-weight:bold;letter-spacing:-0.35px;text-shadow:1px 1px 1px rgba(0,0,0,0.6);">Play</div>
<div class="t" style="left:1354px;top:869.27px;font-size:6.2px;line-height:8.06px;color:#9cb8b8;font-style:italic;letter-spacing:-0.3px;">Target is Audio Component</div>
<svg style="left:1344.6px;top:881.5px" width="9" height="10"><path d="M1 1 L4.2 1 L7.8 5 L4.2 9 L1 9 Z" fill="#f4f4f4"/></svg>
<svg style="left:1429.0px;top:881.5px" width="9" height="10"><path d="M1 1 L4.2 1 L7.8 5 L4.2 9 L1 9 Z" fill="#f4f4f4"/></svg>
<svg style="left:1345.0px;top:895.5px" width="10" height="9"><circle cx="4" cy="4.5" r="3.4" fill="#1aa6ee"/><path d="M7 2.6 L9 4.5 L7 6.4 Z" fill="#1aa6ee"/></svg>
<div class="t" style="left:1356px;top:895.90px;font-size:6.3px;line-height:8.19px;color:#e6e6e6;letter-spacing:-0.32px;">Target</div>
<svg style="left:1345.0px;top:909.5px" width="10" height="9"><circle cx="4" cy="4.5" r="2.8" fill="#111" stroke="#7ee030" stroke-width="1.3"/><path d="M7 2.6 L9 4.5 L7 6.4 Z" fill="#7ee030"/></svg>
<div class="t" style="left:1356px;top:909.90px;font-size:6.3px;line-height:8.19px;color:#e6e6e6;letter-spacing:-0.32px;">Start Time</div>
<div style="left:1387px;top:910px;width:13px;height:8.5px;border:1px solid #c8c8c8;"></div>
<div class="t" style="left:893.5px;width:1000px;text-align:center;top:910.45px;font-size:6.3px;line-height:8.19px;color:#e6e6e6;letter-spacing:-0.15px;">0.0</div>
<div style="left:1307px;top:1057px;width:104px;height:67px;border-radius:6px;border:1px solid rgba(8,8,8,0.9);box-shadow:0 2px 3px rgba(0,0,0,0.35);"></div>
<div style="left:1308px;top:1058px;width:102px;height:65px;border-radius:5px;background:rgba(14,15,14,0.82);"></div>
<div style="left:1308px;top:1058px;width:102px;height:20px;border-radius:5px 5px 0 0;background:linear-gradient(to right,rgba(0,0,0,0) 0%,rgba(18,18,18,0.55) 100%),linear-gradient(#6a9cc4 0%,#2e5878 38%,#1f3a50 62%,#4a7aa0 100%);"></div>
<svg style="left:1311.5px;top:1058.8px" width="9" height="11"><path d="M1 10.2 C2.6 10.4 3.2 9.6 3.7 7.6 L5 2.8 C5.5 1.1 6.3 0.6 8 0.8" fill="none" stroke="#7ab8f0" stroke-width="1.2"/><path d="M2.6 4.6 L6.6 4.6" stroke="#7ab8f0" stroke-width="0.8"/></svg>
<div class="t" style="left:1322px;top:1059.49px;font-size:7.4px;line-height:9.620000000000001px;color:#f4f4f4;font-weight:bold;letter-spacing:-0.35px;text-shadow:1px 1px 1px rgba(0,0,0,0.6);">Play</div>
<div class="t" style="left:1322px;top:1069.27px;font-size:6.2px;line-height:8.06px;color:#9cb8b8;font-style:italic;letter-spacing:-0.3px;">Target is Audio Component</div>
<svg style="left:1312.6px;top:1081.5px" width="9" height="10"><path d="M1 1 L4.2 1 L7.8 5 L4.2 9 L1 9 Z" fill="#f4f4f4"/></svg>
<svg style="left:1397.0px;top:1081.5px" width="9" height="10"><path d="M1 1 L4.2 1 L7.8 5 L4.2 9 L1 9 Z" fill="#f4f4f4"/></svg>
<svg style="left:1313.0px;top:1095.5px" width="10" height="9"><circle cx="4" cy="4.5" r="3.4" fill="#1aa6ee"/><path d="M7 2.6 L9 4.5 L7 6.4 Z" fill="#1aa6ee"/></svg>
<div class="t" style="left:1324px;top:1095.90px;font-size:6.3px;line-height:8.19px;color:#e6e6e6;letter-spacing:-0.32px;">Target</div>
<svg style="left:1313.0px;top:1109.5px" width="10" height="9"><circle cx="4" cy="4.5" r="2.8" fill="#111" stroke="#7ee030" stroke-width="1.3"/><path d="M7 2.6 L9 4.5 L7 6.4 Z" fill="#7ee030"/></svg>
<div class="t" style="left:1324px;top:1109.90px;font-size:6.3px;line-height:8.19px;color:#e6e6e6;letter-spacing:-0.32px;">Start Time</div>
<div style="left:1355px;top:1110px;width:13px;height:8.5px;border:1px solid #c8c8c8;"></div>
<div class="t" style="left:861.5px;width:1000px;text-align:center;top:1110.45px;font-size:6.3px;line-height:8.19px;color:#e6e6e6;letter-spacing:-0.15px;">0.0</div>
<div style="left:1500px;top:457px;width:132px;height:121px;border-radius:6px;border:1px solid rgba(8,8,8,0.9);box-shadow:0 2px 3px rgba(0,0,0,0.35);"></div>
<div style="left:1501px;top:458px;width:130px;height:119px;border-radius:5px;background:rgba(14,15,14,0.82);"></div>
<div style="left:1501px;top:458px;width:130px;height:20.5px;border-radius:5px 5px 0 0;background:linear-gradient(to right,rgba(0,0,0,0) 0%,rgba(18,18,18,0.55) 100%),linear-gradient(#6a9cc4 0%,#2e5878 38%,#1f3a50 62%,#4a7aa0 100%);"></div>
<svg style="left:1504.5px;top:458.8px" width="9" height="11"><path d="M1 10.2 C2.6 10.4 3.2 9.6 3.7 7.6 L5 2.8 C5.5 1.1 6.3 0.6 8 0.8" fill="none" stroke="#7ab8f0" stroke-width="1.2"/><path d="M2.6 4.6 L6.6 4.6" stroke="#7ab8f0" stroke-width="0.8"/></svg>
<div class="t" style="left:1515px;top:459.49px;font-size:7.4px;line-height:9.620000000000001px;color:#f4f4f4;font-weight:bold;letter-spacing:-0.35px;text-shadow:1px 1px 1px rgba(0,0,0,0.6);">Fade In</div>
<div class="t" style="left:1515px;top:469.27px;font-size:6.2px;line-height:8.06px;color:#9cb8b8;font-style:italic;letter-spacing:-0.3px;">Target is Audio Component</div>
<svg style="left:1505.5px;top:482.2px" width="9" height="10"><path d="M1 1 L4.2 1 L7.8 5 L4.2 9 L1 9 Z" fill="#f4f4f4"/></svg>
<svg style="left:1618.0px;top:482.2px" width="9" height="10"><path d="M1 1 L4.2 1 L7.8 5 L4.2 9 L1 9 Z" fill="#f4f4f4"/></svg>
<svg style="left:1506.0px;top:496.0px" width="10" height="9"><circle cx="4" cy="4.5" r="3.4" fill="#1aa6ee"/><path d="M7 2.6 L9 4.5 L7 6.4 Z" fill="#1aa6ee"/></svg>
<div class="t" style="left:1517px;top:496.40px;font-size:6.3px;line-height:8.19px;color:#e6e6e6;letter-spacing:-0.32px;">Target</div>
<svg style="left:1506.0px;top:510.0px" width="10" height="9"><circle cx="4" cy="4.5" r="2.8" fill="#111" stroke="#7ee030" stroke-width="1.3"/><path d="M7 2.6 L9 4.5 L7 6.4 Z" fill="#7ee030"/></svg>
<div class="t" style="left:1517px;top:510.40px;font-size:6.3px;line-height:8.19px;color:#e6e6e6;letter-spacing:-0.32px;">Fade In Duration</div>
<div style="left:1560px;top:510.5px;width:13px;height:8.5px;border:1px solid #c8c8c8;"></div>
<div class="t" style="left:1066.5px;width:1000px;text-align:center;top:510.95px;font-size:6.3px;line-height:8.19px;color:#e6e6e6;letter-spacing:-0.15px;">1.0</div>
<svg style="left:1506.0px;top:525.0px" width="10" height="9"><circle cx="4" cy="4.5" r="2.8" fill="#111" stroke="#7ee030" stroke-width="1.3"/><path d="M7 2.6 L9 4.5 L7 6.4 Z" fill="#7ee030"/></svg>
<div class="t" style="left:1517px;top:525.40px;font-size:6.3px;line-height:8.19px;color:#e6e6e6;letter-spacing:-0.32px;">Fade Volume Level</div>
<div style="left:1567px;top:525.5px;width:13px;height:8.5px;border:1px solid #c8c8c8;"></div>
<div class="t" style="left:1073.5px;width:1000px;text-align:center;top:525.95px;font-size:6.3px;line-height:8.19px;color:#e6e6e6;letter-spacing:-0.15px;">2.5</div>
<svg style="left:1506.0px;top:540.0px" width="10" height="9"><circle cx="4" cy="4.5" r="2.8" fill="#111" stroke="#7ee030" stroke-width="1.3"/><path d="M7 2.6 L9 4.5 L7 6.4 Z" fill="#7ee030"/></svg>
<div class="t" style="left:1517px;top:540.40px;font-size:6.3px;line-height:8.19px;color:#e6e6e6;letter-spacing:-0.32px;">Start Time</div>
<div style="left:1548px;top:540.5px;width:12px;height:8.5px;border:1px solid #c8c8c8;"></div>
<div class="t" style="left:1054.0px;width:1000px;text-align:center;top:540.95px;font-size:6.3px;line-height:8.19px;color:#e6e6e6;letter-spacing:-0.15px;">0.0</div>
<svg style="left:1506.0px;top:559.5px" width="10" height="9"><circle cx="4" cy="4.5" r="2.8" fill="#111" stroke="#0a7a72" stroke-width="1.3"/><path d="M7 2.6 L9 4.5 L7 6.4 Z" fill="#0a7a72"/></svg>
<div class="t" style="left:1517px;top:554.40px;font-size:6.3px;line-height:8.19px;color:#e6e6e6;letter-spacing:-0.32px;">Fade Curve</div>
<div style="left:1519px;top:562px;width:86px;height:10px;background:linear-gradient(#f0f0f0,#c4c4c4);border-radius:2px;"></div>
<div class="t" style="left:1522px;top:562.84px;font-size:6.4px;line-height:8.32px;color:#333;letter-spacing:-0.1px;">Linear</div>
<svg style="left:1595px;top:565.0px" width="7" height="4"><path d="M0 0 L7 0 L3.5 4 Z" fill="#111"/></svg>
<div style="left:1508px;top:666px;width:132px;height:121px;border-radius:6px;border:1px solid rgba(8,8,8,0.9);box-shadow:0 2px 3px rgba(0,0,0,0.35);"></div>
<div style="left:1509px;top:667px;width:130px;height:119px;border-radius:5px;background:rgba(14,15,14,0.82);"></div>
<div style="left:1509px;top:667px;width:130px;height:20.5px;border-radius:5px 5px 0 0;background:linear-gradient(to right,rgba(0,0,0,0) 0%,rgba(18,18,18,0.55) 100%),linear-gradient(#6a9cc4 0%,#2e5878 38%,#1f3a50 62%,#4a7aa0 100%);"></div>
<svg style="left:1512.5px;top:667.8px" width="9" height="11"><path d="M1 10.2 C2.6 10.4 3.2 9.6 3.7 7.6 L5 2.8 C5.5 1.1 6.3 0.6 8 0.8" fill="none" stroke="#7ab8f0" stroke-width="1.2"/><path d="M2.6 4.6 L6.6 4.6" stroke="#7ab8f0" stroke-width="0.8"/></svg>
<div class="t" style="left:1523px;top:668.49px;font-size:7.4px;line-height:9.620000000000001px;color:#f4f4f4;font-weight:bold;letter-spacing:-0.35px;text-shadow:1px 1px 1px rgba(0,0,0,0.6);">Fade In</div>
<div class="t" style="left:1523px;top:678.27px;font-size:6.2px;line-height:8.06px;color:#9cb8b8;font-style:italic;letter-spacing:-0.3px;">Target is Audio Component</div>
<svg style="left:1513.5px;top:691.2px" width="9" height="10"><path d="M1 1 L4.2 1 L7.8 5 L4.2 9 L1 9 Z" fill="#f4f4f4"/></svg>
<svg style="left:1626.0px;top:691.2px" width="9" height="10"><path d="M1 1 L4.2 1 L7.8 5 L4.2 9 L1 9 Z" fill="#f4f4f4"/></svg>
<svg style="left:1514.0px;top:705.0px" width="10" height="9"><circle cx="4" cy="4.5" r="3.4" fill="#1aa6ee"/><path d="M7 2.6 L9 4.5 L7 6.4 Z" fill="#1aa6ee"/></svg>
<div class="t" style="left:1525px;top:705.40px;font-size:6.3px;line-height:8.19px;color:#e6e6e6;letter-spacing:-0.32px;">Target</div>
<svg style="left:1514.0px;top:719.0px" width="10" height="9"><circle cx="4" cy="4.5" r="2.8" fill="#111" stroke="#7ee030" stroke-width="1.3"/><path d="M7 2.6 L9 4.5 L7 6.4 Z" fill="#7ee030"/></svg>
<div class="t" style="left:1525px;top:719.40px;font-size:6.3px;line-height:8.19px;color:#e6e6e6;letter-spacing:-0.32px;">Fade In Duration</div>
<div style="left:1568px;top:719.5px;width:13px;height:8.5px;border:1px solid #c8c8c8;"></div>
<div class="t" style="left:1074.5px;width:1000px;text-align:center;top:719.95px;font-size:6.3px;line-height:8.19px;color:#e6e6e6;letter-spacing:-0.15px;">1.0</div>
<svg style="left:1514.0px;top:734.0px" width="10" height="9"><circle cx="4" cy="4.5" r="2.8" fill="#111" stroke="#7ee030" stroke-width="1.3"/><path d="M7 2.6 L9 4.5 L7 6.4 Z" fill="#7ee030"/></svg>
<div class="t" style="left:1525px;top:734.40px;font-size:6.3px;line-height:8.19px;color:#e6e6e6;letter-spacing:-0.32px;">Fade Volume Level</div>
<div style="left:1575px;top:734.5px;width:13px;height:8.5px;border:1px solid #c8c8c8;"></div>
<div class="t" style="left:1081.5px;width:1000px;text-align:center;top:734.95px;font-size:6.3px;line-height:8.19px;color:#e6e6e6;letter-spacing:-0.15px;">5.0</div>
<svg style="left:1514.0px;top:749.0px" width="10" height="9"><circle cx="4" cy="4.5" r="2.8" fill="#111" stroke="#7ee030" stroke-width="1.3"/><path d="M7 2.6 L9 4.5 L7 6.4 Z" fill="#7ee030"/></svg>
<div class="t" style="left:1525px;top:749.40px;font-size:6.3px;line-height:8.19px;color:#e6e6e6;letter-spacing:-0.32px;">Start Time</div>
<div style="left:1556px;top:749.5px;width:12px;height:8.5px;border:1px solid #c8c8c8;"></div>
<div class="t" style="left:1062.0px;width:1000px;text-align:center;top:749.95px;font-size:6.3px;line-height:8.19px;color:#e6e6e6;letter-spacing:-0.15px;">0.0</div>
<svg style="left:1514.0px;top:768.5px" width="10" height="9"><circle cx="4" cy="4.5" r="2.8" fill="#111" stroke="#0a7a72" stroke-width="1.3"/><path d="M7 2.6 L9 4.5 L7 6.4 Z" fill="#0a7a72"/></svg>
<div class="t" style="left:1525px;top:763.40px;font-size:6.3px;line-height:8.19px;color:#e6e6e6;letter-spacing:-0.32px;">Fade Curve</div>
<div style="left:1527px;top:771px;width:86px;height:10px;background:linear-gradient(#f0f0f0,#c4c4c4);border-radius:2px;"></div>
<div class="t" style="left:1530px;top:771.84px;font-size:6.4px;line-height:8.32px;color:#333;letter-spacing:-0.1px;">Linear</div>
<svg style="left:1603px;top:774.0px" width="7" height="4"><path d="M0 0 L7 0 L3.5 4 Z" fill="#111"/></svg>
<div style="left:1507px;top:865px;width:132px;height:121px;border-radius:6px;border:1px solid rgba(8,8,8,0.9);box-shadow:0 2px 3px rgba(0,0,0,0.35);"></div>
<div style="left:1508px;top:866px;width:130px;height:119px;border-radius:5px;background:rgba(14,15,14,0.82);"></div>
<div style="left:1508px;top:866px;width:130px;height:20.5px;border-radius:5px 5px 0 0;background:linear-gradient(to right,rgba(0,0,0,0) 0%,rgba(18,18,18,0.55) 100%),linear-gradient(#6a9cc4 0%,#2e5878 38%,#1f3a50 62%,#4a7aa0 100%);"></div>
<svg style="left:1511.5px;top:866.8px" width="9" height="11"><path d="M1 10.2 C2.6 10.4 3.2 9.6 3.7 7.6 L5 2.8 C5.5 1.1 6.3 0.6 8 0.8" fill="none" stroke="#7ab8f0" stroke-width="1.2"/><path d="M2.6 4.6 L6.6 4.6" stroke="#7ab8f0" stroke-width="0.8"/></svg>
<div class="t" style="left:1522px;top:867.49px;font-size:7.4px;line-height:9.620000000000001px;color:#f4f4f4;font-weight:bold;letter-spacing:-0.35px;text-shadow:1px 1px 1px rgba(0,0,0,0.6);">Fade In</div>
<div class="t" style="left:1522px;top:877.27px;font-size:6.2px;line-height:8.06px;color:#9cb8b8;font-style:italic;letter-spacing:-0.3px;">Target is Audio Component</div>
<svg style="left:1512.5px;top:890.2px" width="9" height="10"><path d="M1 1 L4.2 1 L7.8 5 L4.2 9 L1 9 Z" fill="#f4f4f4"/></svg>
<svg style="left:1625.0px;top:890.2px" width="9" height="10"><path d="M1 1 L4.2 1 L7.8 5 L4.2 9 L1 9 Z" fill="#f4f4f4"/></svg>
<svg style="left:1513.0px;top:904.0px" width="10" height="9"><circle cx="4" cy="4.5" r="3.4" fill="#1aa6ee"/><path d="M7 2.6 L9 4.5 L7 6.4 Z" fill="#1aa6ee"/></svg>
<div class="t" style="left:1524px;top:904.40px;font-size:6.3px;line-height:8.19px;color:#e6e6e6;letter-spacing:-0.32px;">Target</div>
<svg style="left:1513.0px;top:918.0px" width="10" height="9"><circle cx="4" cy="4.5" r="2.8" fill="#111" stroke="#7ee030" stroke-width="1.3"/><path d="M7 2.6 L9 4.5 L7 6.4 Z" fill="#7ee030"/></svg>
<div class="t" style="left:1524px;top:918.40px;font-size:6.3px;line-height:8.19px;color:#e6e6e6;letter-spacing:-0.32px;">Fade In Duration</div>
<div style="left:1567px;top:918.5px;width:13px;height:8.5px;border:1px solid #c8c8c8;"></div>
<div class="t" style="left:1073.5px;width:1000px;text-align:center;top:918.95px;font-size:6.3px;line-height:8.19px;color:#e6e6e6;letter-spacing:-0.15px;">0.0</div>
<svg style="left:1513.0px;top:933.0px" width="10" height="9"><circle cx="4" cy="4.5" r="2.8" fill="#111" stroke="#7ee030" stroke-width="1.3"/><path d="M7 2.6 L9 4.5 L7 6.4 Z" fill="#7ee030"/></svg>
<div class="t" style="left:1524px;top:933.40px;font-size:6.3px;line-height:8.19px;color:#e6e6e6;letter-spacing:-0.32px;">Fade Volume Level</div>
<div style="left:1574px;top:933.5px;width:13px;height:8.5px;border:1px solid #c8c8c8;"></div>
<div class="t" style="left:1080.5px;width:1000px;text-align:center;top:933.95px;font-size:6.3px;line-height:8.19px;color:#e6e6e6;letter-spacing:-0.15px;">5.0</div>
<svg style="left:1513.0px;top:948.0px" width="10" height="9"><circle cx="4" cy="4.5" r="2.8" fill="#111" stroke="#7ee030" stroke-width="1.3"/><path d="M7 2.6 L9 4.5 L7 6.4 Z" fill="#7ee030"/></svg>
<div class="t" style="left:1524px;top:948.40px;font-size:6.3px;line-height:8.19px;color:#e6e6e6;letter-spacing:-0.32px;">Start Time</div>
<div style="left:1555px;top:948.5px;width:12px;height:8.5px;border:1px solid #c8c8c8;"></div>
<div class="t" style="left:1061.0px;width:1000px;text-align:center;top:948.95px;font-size:6.3px;line-height:8.19px;color:#e6e6e6;letter-spacing:-0.15px;">0.0</div>
<svg style="left:1513.0px;top:967.5px" width="10" height="9"><circle cx="4" cy="4.5" r="2.8" fill="#111" stroke="#0a7a72" stroke-width="1.3"/><path d="M7 2.6 L9 4.5 L7 6.4 Z" fill="#0a7a72"/></svg>
<div class="t" style="left:1524px;top:962.40px;font-size:6.3px;line-height:8.19px;color:#e6e6e6;letter-spacing:-0.32px;">Fade Curve</div>
<div style="left:1526px;top:970px;width:86px;height:10px;background:linear-gradient(#f0f0f0,#c4c4c4);border-radius:2px;"></div>
<div class="t" style="left:1529px;top:970.84px;font-size:6.4px;line-height:8.32px;color:#333;letter-spacing:-0.1px;">Linear</div>
<svg style="left:1602px;top:973.0px" width="7" height="4"><path d="M0 0 L7 0 L3.5 4 Z" fill="#111"/></svg>
<div style="left:1707px;top:466px;width:121px;height:91px;border-radius:6px;border:1px solid rgba(8,8,8,0.9);box-shadow:0 2px 3px rgba(0,0,0,0.35);"></div>
<div style="left:1708px;top:467px;width:119px;height:89px;border-radius:5px;background:rgba(14,15,14,0.82);"></div>
<div style="left:1708px;top:467px;width:119px;height:11.5px;border-radius:5px 5px 0 0;background:linear-gradient(to right,rgba(0,0,0,0) 0%,rgba(18,18,18,0.55) 100%),linear-gradient(#6a9cc4 0%,#2e5878 38%,#1f3a50 62%,#4a7aa0 100%);"></div>
<svg style="left:1711.5px;top:467.8px" width="9" height="11"><path d="M1 10.2 C2.6 10.4 3.2 9.6 3.7 7.6 L5 2.8 C5.5 1.1 6.3 0.6 8 0.8" fill="none" stroke="#7ab8f0" stroke-width="1.2"/><path d="M2.6 4.6 L6.6 4.6" stroke="#7ab8f0" stroke-width="0.8"/></svg>
<div class="t" style="left:1722px;top:468.49px;font-size:7.4px;line-height:9.620000000000001px;color:#f4f4f4;font-weight:bold;letter-spacing:-0.35px;text-shadow:1px 1px 1px rgba(0,0,0,0.6);">Set Scalar Parameter Value</div>
<svg style="left:1712.5px;top:482.9px" width="9" height="10"><path d="M1 1 L4.2 1 L7.8 5 L4.2 9 L1 9 Z" fill="#f4f4f4"/></svg>
<svg style="left:1814.0px;top:482.9px" width="9" height="10"><path d="M1 1 L4.2 1 L7.8 5 L4.2 9 L1 9 Z" fill="#f4f4f4"/></svg>
<svg style="left:1713.0px;top:500.5px" width="10" height="9"><circle cx="4" cy="4.5" r="2.8" fill="#111" stroke="#1aa6ee" stroke-width="1.3"/><path d="M7 2.6 L9 4.5 L7 6.4 Z" fill="#1aa6ee"/></svg>
<div class="t" style="left:1724px;top:497.40px;font-size:6.3px;line-height:8.19px;color:#e6e6e6;letter-spacing:-0.32px;">Collection</div>
<div style="left:1728px;top:505px;width:35px;height:8px;background:#262626;border-radius:1px;"></div>
<div class="t" style="left:1730px;top:505.49px;font-size:5.4px;line-height:7.0200000000000005px;color:#5e5e5e;letter-spacing:-0.3px;">MPC_Clouds</div>
<svg style="left:1755px;top:507.0px" width="6" height="4"><path d="M0 0 L6 0 L3 3.5 Z" fill="#5e5e5e"/></svg>
<svg style="left:1766px;top:505.0px" width="18" height="8"><path d="M1 4 L4 1 L4 3 L7 3 L7 5 L4 5 L4 7 Z" fill="#4a4a4a"/><circle cx="13" cy="3.5" r="2.5" fill="none" stroke="#4a4a4a" stroke-width="1"/><path d="M11 5.5 L9.5 7" stroke="#4a4a4a" stroke-width="1"/></svg>
<svg style="left:1713.0px;top:524.0px" width="10" height="9"><circle cx="4" cy="4.5" r="2.8" fill="#111" stroke="#c060f0" stroke-width="1.3"/><path d="M7 2.6 L9 4.5 L7 6.4 Z" fill="#c060f0"/></svg>
<div class="t" style="left:1724px;top:519.30px;font-size:6.3px;line-height:8.19px;color:#e6e6e6;letter-spacing:-0.32px;">Parameter Name</div>
<div style="left:1727px;top:527px;width:40px;height:10px;background:linear-gradient(#f0f0f0,#c4c4c4);border-radius:2px;"></div>
<div class="t" style="left:1730px;top:527.84px;font-size:6.4px;line-height:8.32px;color:#333;letter-spacing:-0.1px;">CloudBias</div>
<svg style="left:1757px;top:530.0px" width="7" height="4"><path d="M0 0 L7 0 L3.5 4 Z" fill="#111"/></svg>
<svg style="left:1713.0px;top:543.9px" width="10" height="9"><circle cx="4" cy="4.5" r="2.8" fill="#111" stroke="#7ee030" stroke-width="1.3"/><path d="M7 2.6 L9 4.5 L7 6.4 Z" fill="#7ee030"/></svg>
<div class="t" style="left:1724px;top:544.30px;font-size:6.3px;line-height:8.19px;color:#e6e6e6;letter-spacing:-0.32px;">Parameter Value</div>
<div style="left:1770px;top:544px;width:13px;height:9px;border:1px solid #c8c8c8;"></div>
<div class="t" style="left:1276.5px;width:1000px;text-align:center;top:544.70px;font-size:6.3px;line-height:8.19px;color:#e6e6e6;letter-spacing:-0.15px;">0.0</div>
<div style="left:1892px;top:466px;width:121px;height:89px;border-radius:6px;border:1px solid rgba(8,8,8,0.9);box-shadow:0 2px 3px rgba(0,0,0,0.35);"></div>
<div style="left:1893px;top:467px;width:119px;height:87px;border-radius:5px;background:rgba(14,15,14,0.82);"></div>
<div style="left:1893px;top:467px;width:119px;height:11.5px;border-radius:5px 5px 0 0;background:linear-gradient(to right,rgba(0,0,0,0) 0%,rgba(18,18,18,0.55) 100%),linear-gradient(#6a9cc4 0%,#2e5878 38%,#1f3a50 62%,#4a7aa0 100%);"></div>
<svg style="left:1896.5px;top:467.8px" width="9" height="11"><path d="M1 10.2 C2.6 10.4 3.2 9.6 3.7 7.6 L5 2.8 C5.5 1.1 6.3 0.6 8 0.8" fill="none" stroke="#7ab8f0" stroke-width="1.2"/><path d="M2.6 4.6 L6.6 4.6" stroke="#7ab8f0" stroke-width="0.8"/></svg>
<div class="t" style="left:1907px;top:468.49px;font-size:7.4px;line-height:9.620000000000001px;color:#f4f4f4;font-weight:bold;letter-spacing:-0.35px;text-shadow:1px 1px 1px rgba(0,0,0,0.6);">Set Vector Parameter Value</div>
<svg style="left:1897.5px;top:482.9px" width="9" height="10"><path d="M1 1 L4.2 1 L7.8 5 L4.2 9 L1 9 Z" fill="#f4f4f4"/></svg>
<svg style="left:1999.0px;top:482.9px" width="9" height="10"><path d="M1 1 L4.2 1 L7.8 5 L4.2 9 L1 9 Z" fill="#f4f4f4"/></svg>
<svg style="left:1898.0px;top:500.5px" width="10" height="9"><circle cx="4" cy="4.5" r="2.8" fill="#111" stroke="#1aa6ee" stroke-width="1.3"/><path d="M7 2.6 L9 4.5 L7 6.4 Z" fill="#1aa6ee"/></svg>
<div class="t" style="left:1909px;top:497.40px;font-size:6.3px;line-height:8.19px;color:#e6e6e6;letter-spacing:-0.32px;">Collection</div>
<div style="left:1913px;top:505px;width:35px;height:8px;background:#262626;border-radius:1px;"></div>
<div class="t" style="left:1915px;top:505.49px;font-size:5.4px;line-height:7.0200000000000005px;color:#5e5e5e;letter-spacing:-0.3px;">MPC_Clouds</div>
<svg style="left:1940px;top:507.0px" width="6" height="4"><path d="M0 0 L6 0 L3 3.5 Z" fill="#5e5e5e"/></svg>
<svg style="left:1951px;top:505.0px" width="18" height="8"><path d="M1 4 L4 1 L4 3 L7 3 L7 5 L4 5 L4 7 Z" fill="#4a4a4a"/><circle cx="13" cy="3.5" r="2.5" fill="none" stroke="#4a4a4a" stroke-width="1"/><path d="M11 5.5 L9.5 7" stroke="#4a4a4a" stroke-width="1"/></svg>
<svg style="left:1898.0px;top:524.0px" width="10" height="9"><circle cx="4" cy="4.5" r="2.8" fill="#111" stroke="#c060f0" stroke-width="1.3"/><path d="M7 2.6 L9 4.5 L7 6.4 Z" fill="#c060f0"/></svg>
<div class="t" style="left:1909px;top:519.30px;font-size:6.3px;line-height:8.19px;color:#e6e6e6;letter-spacing:-0.32px;">Parameter Name</div>
<div style="left:1912px;top:527px;width:43px;height:10px;background:linear-gradient(#f0f0f0,#c4c4c4);border-radius:2px;"></div>
<div class="t" style="left:1915px;top:527.84px;font-size:6.4px;line-height:8.32px;color:#333;letter-spacing:-0.1px;">CloudColor</div>
<svg style="left:1945px;top:530.0px" width="7" height="4"><path d="M0 0 L7 0 L3.5 4 Z" fill="#111"/></svg>
<svg style="left:1898.0px;top:543.5px" width="10" height="9"><circle cx="4" cy="4.5" r="3.4" fill="#1060e0"/><path d="M7 2.6 L9 4.5 L7 6.4 Z" fill="#1060e0"/></svg>
<div class="t" style="left:1909px;top:543.90px;font-size:6.3px;line-height:8.19px;color:#e6e6e6;letter-spacing:-0.32px;">Parameter Value</div>
<div style="left:1715px;top:673px;width:121px;height:91px;border-radius:6px;border:1px solid rgba(8,8,8,0.9);box-shadow:0 2px 3px rgba(0,0,0,0.35);"></div>
<div style="left:1716px;top:674px;width:119px;height:89px;border-radius:5px;background:rgba(14,15,14,0.82);"></div>
<div style="left:1716px;top:674px;width:119px;height:11.5px;border-radius:5px 5px 0 0;background:linear-gradient(to right,rgba(0,0,0,0) 0%,rgba(18,18,18,0.55) 100%),linear-gradient(#6a9cc4 0%,#2e5878 38%,#1f3a50 62%,#4a7aa0 100%);"></div>
<svg style="left:1719.5px;top:674.8px" width="9" height="11"><path d="M1 10.2 C2.6 10.4 3.2 9.6 3.7 7.6 L5 2.8 C5.5 1.1 6.3 0.6 8 0.8" fill="none" stroke="#7ab8f0" stroke-width="1.2"/><path d="M2.6 4.6 L6.6 4.6" stroke="#7ab8f0" stroke-width="0.8"/></svg>
<div class="t" style="left:1730px;top:675.49px;font-size:7.4px;line-height:9.620000000000001px;color:#f4f4f4;font-weight:bold;letter-spacing:-0.35px;text-shadow:1px 1px 1px rgba(0,0,0,0.6);">Set Scalar Parameter Value</div>
<svg style="left:1720.5px;top:689.9px" width="9" height="10"><path d="M1 1 L4.2 1 L7.8 5 L4.2 9 L1 9 Z" fill="#f4f4f4"/></svg>
<svg style="left:1822.0px;top:689.9px" width="9" height="10"><path d="M1 1 L4.2 1 L7.8 5 L4.2 9 L1 9 Z" fill="#f4f4f4"/></svg>
<svg style="left:1721.0px;top:707.5px" width="10" height="9"><circle cx="4" cy="4.5" r="2.8" fill="#111" stroke="#1aa6ee" stroke-width="1.3"/><path d="M7 2.6 L9 4.5 L7 6.4 Z" fill="#1aa6ee"/></svg>
<div class="t" style="left:1732px;top:704.40px;font-size:6.3px;line-height:8.19px;color:#e6e6e6;letter-spacing:-0.32px;">Collection</div>
<div style="left:1736px;top:712px;width:35px;height:8px;background:#262626;border-radius:1px;"></div>
<div class="t" style="left:1738px;top:712.49px;font-size:5.4px;line-height:7.0200000000000005px;color:#5e5e5e;letter-spacing:-0.3px;">MPC_Clouds</div>
<svg style="left:1763px;top:714.0px" width="6" height="4"><path d="M0 0 L6 0 L3 3.5 Z" fill="#5e5e5e"/></svg>
<svg style="left:1774px;top:712.0px" width="18" height="8"><path d="M1 4 L4 1 L4 3 L7 3 L7 5 L4 5 L4 7 Z" fill="#4a4a4a"/><circle cx="13" cy="3.5" r="2.5" fill="none" stroke="#4a4a4a" stroke-width="1"/><path d="M11 5.5 L9.5 7" stroke="#4a4a4a" stroke-width="1"/></svg>
<svg style="left:1721.0px;top:731.0px" width="10" height="9"><circle cx="4" cy="4.5" r="2.8" fill="#111" stroke="#c060f0" stroke-width="1.3"/><path d="M7 2.6 L9 4.5 L7 6.4 Z" fill="#c060f0"/></svg>
<div class="t" style="left:1732px;top:726.30px;font-size:6.3px;line-height:8.19px;color:#e6e6e6;letter-spacing:-0.32px;">Parameter Name</div>
<div style="left:1735px;top:734px;width:40px;height:10px;background:linear-gradient(#f0f0f0,#c4c4c4);border-radius:2px;"></div>
<div class="t" style="left:1738px;top:734.84px;font-size:6.4px;line-height:8.32px;color:#333;letter-spacing:-0.1px;">CloudBias</div>
<svg style="left:1765px;top:737.0px" width="7" height="4"><path d="M0 0 L7 0 L3.5 4 Z" fill="#111"/></svg>
<svg style="left:1721.0px;top:750.9px" width="10" height="9"><circle cx="4" cy="4.5" r="2.8" fill="#111" stroke="#7ee030" stroke-width="1.3"/><path d="M7 2.6 L9 4.5 L7 6.4 Z" fill="#7ee030"/></svg>
<div class="t" style="left:1732px;top:751.30px;font-size:6.3px;line-height:8.19px;color:#e6e6e6;letter-spacing:-0.32px;">Parameter Value</div>
<div style="left:1778px;top:751px;width:13px;height:9px;border:1px solid #c8c8c8;"></div>
<div class="t" style="left:1284.5px;width:1000px;text-align:center;top:751.70px;font-size:6.3px;line-height:8.19px;color:#e6e6e6;letter-spacing:-0.15px;">0.0</div>
<div style="left:1899px;top:673px;width:121px;height:89px;border-radius:6px;border:1px solid rgba(8,8,8,0.9);box-shadow:0 2px 3px rgba(0,0,0,0.35);"></div>
<div style="left:1900px;top:674px;width:119px;height:87px;border-radius:5px;background:rgba(14,15,14,0.82);"></div>
<div style="left:1900px;top:674px;width:119px;height:11.5px;border-radius:5px 5px 0 0;background:linear-gradient(to right,rgba(0,0,0,0) 0%,rgba(18,18,18,0.55) 100%),linear-gradient(#6a9cc4 0%,#2e5878 38%,#1f3a50 62%,#4a7aa0 100%);"></div>
<svg style="left:1903.5px;top:674.8px" width="9" height="11"><path d="M1 10.2 C2.6 10.4 3.2 9.6 3.7 7.6 L5 2.8 C5.5 1.1 6.3 0.6 8 0.8" fill="none" stroke="#7ab8f0" stroke-width="1.2"/><path d="M2.6 4.6 L6.6 4.6" stroke="#7ab8f0" stroke-width="0.8"/></svg>
<div class="t" style="left:1914px;top:675.49px;font-size:7.4px;line-height:9.620000000000001px;color:#f4f4f4;font-weight:bold;letter-spacing:-0.35px;text-shadow:1px 1px 1px rgba(0,0,0,0.6);">Set Vector Parameter Value</div>
<svg style="left:1904.5px;top:689.9px" width="9" height="10"><path d="M1 1 L4.2 1 L7.8 5 L4.2 9 L1 9 Z" fill="#f4f4f4"/></svg>
<svg style="left:2006.0px;top:689.9px" width="9" height="10"><path d="M1 1 L4.2 1 L7.8 5 L4.2 9 L1 9 Z" fill="#f4f4f4"/></svg>
<svg style="left:1905.0px;top:707.5px" width="10" height="9"><circle cx="4" cy="4.5" r="2.8" fill="#111" stroke="#1aa6ee" stroke-width="1.3"/><path d="M7 2.6 L9 4.5 L7 6.4 Z" fill="#1aa6ee"/></svg>
<div class="t" style="left:1916px;top:704.40px;font-size:6.3px;line-height:8.19px;color:#e6e6e6;letter-spacing:-0.32px;">Collection</div>
<div style="left:1920px;top:712px;width:35px;height:8px;background:#262626;border-radius:1px;"></div>
<div class="t" style="left:1922px;top:712.49px;font-size:5.4px;line-height:7.0200000000000005px;color:#5e5e5e;letter-spacing:-0.3px;">MPC_Clouds</div>
<svg style="left:1947px;top:714.0px" width="6" height="4"><path d="M0 0 L6 0 L3 3.5 Z" fill="#5e5e5e"/></svg>
<svg style="left:1958px;top:712.0px" width="18" height="8"><path d="M1 4 L4 1 L4 3 L7 3 L7 5 L4 5 L4 7 Z" fill="#4a4a4a"/><circle cx="13" cy="3.5" r="2.5" fill="none" stroke="#4a4a4a" stroke-width="1"/><path d="M11 5.5 L9.5 7" stroke="#4a4a4a" stroke-width="1"/></svg>
<svg style="left:1905.0px;top:731.0px" width="10" height="9"><circle cx="4" cy="4.5" r="2.8" fill="#111" stroke="#c060f0" stroke-width="1.3"/><path d="M7 2.6 L9 4.5 L7 6.4 Z" fill="#c060f0"/></svg>
<div class="t" style="left:1916px;top:726.30px;font-size:6.3px;line-height:8.19px;color:#e6e6e6;letter-spacing:-0.32px;">Parameter Name</div>
<div style="left:1919px;top:734px;width:43px;height:10px;background:linear-gradient(#f0f0f0,#c4c4c4);border-radius:2px;"></div>
<div class="t" style="left:1922px;top:734.84px;font-size:6.4px;line-height:8.32px;color:#333;letter-spacing:-0.1px;">CloudColor</div>
<svg style="left:1952px;top:737.0px" width="7" height="4"><path d="M0 0 L7 0 L3.5 4 Z" fill="#111"/></svg>
<svg style="left:1905.0px;top:750.5px" width="10" height="9"><circle cx="4" cy="4.5" r="3.4" fill="#1060e0"/><path d="M7 2.6 L9 4.5 L7 6.4 Z" fill="#1060e0"/></svg>
<div class="t" style="left:1916px;top:750.90px;font-size:6.3px;line-height:8.19px;color:#e6e6e6;letter-spacing:-0.32px;">Parameter Value</div>
<div style="left:1819px;top:866px;width:121px;height:91px;border-radius:6px;border:1px solid rgba(8,8,8,0.9);box-shadow:0 2px 3px rgba(0,0,0,0.35);"></div>
<div style="left:1820px;top:867px;width:119px;height:89px;border-radius:5px;background:rgba(14,15,14,0.82);"></div>
<div style="left:1820px;top:867px;width:119px;height:11.5px;border-radius:5px 5px 0 0;background:linear-gradient(to right,rgba(0,0,0,0) 0%,rgba(18,18,18,0.55) 100%),linear-gradient(#6a9cc4 0%,#2e5878 38%,#1f3a50 62%,#4a7aa0 100%);"></div>
<svg style="left:1823.5px;top:867.8px" width="9" height="11"><path d="M1 10.2 C2.6 10.4 3.2 9.6 3.7 7.6 L5 2.8 C5.5 1.1 6.3 0.6 8 0.8" fill="none" stroke="#7ab8f0" stroke-width="1.2"/><path d="M2.6 4.6 L6.6 4.6" stroke="#7ab8f0" stroke-width="0.8"/></svg>
<div class="t" style="left:1834px;top:868.49px;font-size:7.4px;line-height:9.620000000000001px;color:#f4f4f4;font-weight:bold;letter-spacing:-0.35px;text-shadow:1px 1px 1px rgba(0,0,0,0.6);">Set Scalar Parameter Value</div>
<svg style="left:1824.5px;top:882.9px" width="9" height="10"><path d="M1 1 L4.2 1 L7.8 5 L4.2 9 L1 9 Z" fill="#f4f4f4"/></svg>
<svg style="left:1926.0px;top:882.9px" width="9" height="10"><path d="M1 1 L4.2 1 L7.8 5 L4.2 9 L1 9 Z" fill="#f4f4f4"/></svg>
<svg style="left:1825.0px;top:900.5px" width="10" height="9"><circle cx="4" cy="4.5" r="2.8" fill="#111" stroke="#1aa6ee" stroke-width="1.3"/><path d="M7 2.6 L9 4.5 L7 6.4 Z" fill="#1aa6ee"/></svg>
<div class="t" style="left:1836px;top:897.40px;font-size:6.3px;line-height:8.19px;color:#e6e6e6;letter-spacing:-0.32px;">Collection</div>
<div style="left:1840px;top:905px;width:35px;height:8px;background:#262626;border-radius:1px;"></div>
<div class="t" style="left:1842px;top:905.49px;font-size:5.4px;line-height:7.0200000000000005px;color:#5e5e5e;letter-spacing:-0.3px;">MPC_Clouds</div>
<svg style="left:1867px;top:907.0px" width="6" height="4"><path d="M0 0 L6 0 L3 3.5 Z" fill="#5e5e5e"/></svg>
<svg style="left:1878px;top:905.0px" width="18" height="8"><path d="M1 4 L4 1 L4 3 L7 3 L7 5 L4 5 L4 7 Z" fill="#4a4a4a"/><circle cx="13" cy="3.5" r="2.5" fill="none" stroke="#4a4a4a" stroke-width="1"/><path d="M11 5.5 L9.5 7" stroke="#4a4a4a" stroke-width="1"/></svg>
<svg style="left:1825.0px;top:924.0px" width="10" height="9"><circle cx="4" cy="4.5" r="2.8" fill="#111" stroke="#c060f0" stroke-width="1.3"/><path d="M7 2.6 L9 4.5 L7 6.4 Z" fill="#c060f0"/></svg>
<div class="t" style="left:1836px;top:919.30px;font-size:6.3px;line-height:8.19px;color:#e6e6e6;letter-spacing:-0.32px;">Parameter Name</div>
<div style="left:1839px;top:927px;width:40px;height:10px;background:linear-gradient(#f0f0f0,#c4c4c4);border-radius:2px;"></div>
<div class="t" style="left:1842px;top:927.84px;font-size:6.4px;line-height:8.32px;color:#333;letter-spacing:-0.1px;">CloudBias</div>
<svg style="left:1869px;top:930.0px" width="7" height="4"><path d="M0 0 L7 0 L3.5 4 Z" fill="#111"/></svg>
<svg style="left:1825.0px;top:943.9px" width="10" height="9"><circle cx="4" cy="4.5" r="2.8" fill="#111" stroke="#7ee030" stroke-width="1.3"/><path d="M7 2.6 L9 4.5 L7 6.4 Z" fill="#7ee030"/></svg>
<div class="t" style="left:1836px;top:944.30px;font-size:6.3px;line-height:8.19px;color:#e6e6e6;letter-spacing:-0.32px;">Parameter Value</div>
<div style="left:1882px;top:944px;width:13px;height:9px;border:1px solid #c8c8c8;"></div>
<div class="t" style="left:1388.5px;width:1000px;text-align:center;top:944.70px;font-size:6.3px;line-height:8.19px;color:#e6e6e6;letter-spacing:-0.15px;">0.0</div>
<div style="left:2003px;top:866px;width:121px;height:89px;border-radius:6px;border:1px solid rgba(8,8,8,0.9);box-shadow:0 2px 3px rgba(0,0,0,0.35);"></div>
<div style="left:2004px;top:867px;width:119px;height:87px;border-radius:5px;background:rgba(14,15,14,0.82);"></div>
<div style="left:2004px;top:867px;width:119px;height:11.5px;border-radius:5px 5px 0 0;background:linear-gradient(to right,rgba(0,0,0,0) 0%,rgba(18,18,18,0.55) 100%),linear-gradient(#6a9cc4 0%,#2e5878 38%,#1f3a50 62%,#4a7aa0 100%);"></div>
<svg style="left:2007.5px;top:867.8px" width="9" height="11"><path d="M1 10.2 C2.6 10.4 3.2 9.6 3.7 7.6 L5 2.8 C5.5 1.1 6.3 0.6 8 0.8" fill="none" stroke="#7ab8f0" stroke-width="1.2"/><path d="M2.6 4.6 L6.6 4.6" stroke="#7ab8f0" stroke-width="0.8"/></svg>
<div class="t" style="left:2018px;top:868.49px;font-size:7.4px;line-height:9.620000000000001px;color:#f4f4f4;font-weight:bold;letter-spacing:-0.35px;text-shadow:1px 1px 1px rgba(0,0,0,0.6);">Set Vector Parameter Value</div>
<svg style="left:2008.5px;top:882.9px" width="9" height="10"><path d="M1 1 L4.2 1 L7.8 5 L4.2 9 L1 9 Z" fill="#f4f4f4"/></svg>
<svg style="left:2110.0px;top:882.9px" width="9" height="10"><path d="M1 1 L4.2 1 L7.8 5 L4.2 9 L1 9 Z" fill="#f4f4f4"/></svg>
<svg style="left:2009.0px;top:900.5px" width="10" height="9"><circle cx="4" cy="4.5" r="2.8" fill="#111" stroke="#1aa6ee" stroke-width="1.3"/><path d="M7 2.6 L9 4.5 L7 6.4 Z" fill="#1aa6ee"/></svg>
<div class="t" style="left:2020px;top:897.40px;font-size:6.3px;line-height:8.19px;color:#e6e6e6;letter-spacing:-0.32px;">Collection</div>
<div style="left:2024px;top:905px;width:35px;height:8px;background:#262626;border-radius:1px;"></div>
<div class="t" style="left:2026px;top:905.49px;font-size:5.4px;line-height:7.0200000000000005px;color:#5e5e5e;letter-spacing:-0.3px;">MPC_Clouds</div>
<svg style="left:2051px;top:907.0px" width="6" height="4"><path d="M0 0 L6 0 L3 3.5 Z" fill="#5e5e5e"/></svg>
<svg style="left:2062px;top:905.0px" width="18" height="8"><path d="M1 4 L4 1 L4 3 L7 3 L7 5 L4 5 L4 7 Z" fill="#4a4a4a"/><circle cx="13" cy="3.5" r="2.5" fill="none" stroke="#4a4a4a" stroke-width="1"/><path d="M11 5.5 L9.5 7" stroke="#4a4a4a" stroke-width="1"/></svg>
<svg style="left:2009.0px;top:924.0px" width="10" height="9"><circle cx="4" cy="4.5" r="2.8" fill="#111" stroke="#c060f0" stroke-width="1.3"/><path d="M7 2.6 L9 4.5 L7 6.4 Z" fill="#c060f0"/></svg>
<div class="t" style="left:2020px;top:919.30px;font-size:6.3px;line-height:8.19px;color:#e6e6e6;letter-spacing:-0.32px;">Parameter Name</div>
<div style="left:2023px;top:927px;width:43px;height:10px;background:linear-gradient(#f0f0f0,#c4c4c4);border-radius:2px;"></div>
<div class="t" style="left:2026px;top:927.84px;font-size:6.4px;line-height:8.32px;color:#333;letter-spacing:-0.1px;">CloudColor</div>
<svg style="left:2056px;top:930.0px" width="7" height="4"><path d="M0 0 L7 0 L3.5 4 Z" fill="#111"/></svg>
<svg style="left:2009.0px;top:943.5px" width="10" height="9"><circle cx="4" cy="4.5" r="3.4" fill="#1060e0"/><path d="M7 2.6 L9 4.5 L7 6.4 Z" fill="#1060e0"/></svg>
<div class="t" style="left:2020px;top:943.90px;font-size:6.3px;line-height:8.19px;color:#e6e6e6;letter-spacing:-0.32px;">Parameter Value</div>
<div style="left:2123px;top:1177px;width:121px;height:91px;border-radius:6px;border:1px solid rgba(8,8,8,0.9);box-shadow:0 2px 3px rgba(0,0,0,0.35);"></div>
<div style="left:2124px;top:1178px;width:119px;height:89px;border-radius:5px;background:rgba(14,15,14,0.82);"></div>
<div style="left:2124px;top:1178px;width:119px;height:11.5px;border-radius:5px 5px 0 0;background:linear-gradient(to right,rgba(0,0,0,0) 0%,rgba(18,18,18,0.55) 100%),linear-gradient(#6a9cc4 0%,#2e5878 38%,#1f3a50 62%,#4a7aa0 100%);"></div>
<svg style="left:2127.5px;top:1178.8px" width="9" height="11"><path d="M1 10.2 C2.6 10.4 3.2 9.6 3.7 7.6 L5 2.8 C5.5 1.1 6.3 0.6 8 0.8" fill="none" stroke="#7ab8f0" stroke-width="1.2"/><path d="M2.6 4.6 L6.6 4.6" stroke="#7ab8f0" stroke-width="0.8"/></svg>
<div class="t" style="left:2138px;top:1179.49px;font-size:7.4px;line-height:9.620000000000001px;color:#f4f4f4;font-weight:bold;letter-spacing:-0.35px;text-shadow:1px 1px 1px rgba(0,0,0,0.6);">Set Scalar Parameter Value</div>
<svg style="left:2128.5px;top:1193.9px" width="9" height="10"><path d="M1 1 L4.2 1 L7.8 5 L4.2 9 L1 9 Z" fill="#f4f4f4"/></svg>
<svg style="left:2230.0px;top:1193.9px" width="9" height="10"><path d="M1 1 L4.2 1 L7.8 5 L4.2 9 L1 9 Z" fill="#f4f4f4"/></svg>
<svg style="left:2129.0px;top:1211.5px" width="10" height="9"><circle cx="4" cy="4.5" r="2.8" fill="#111" stroke="#1aa6ee" stroke-width="1.3"/><path d="M7 2.6 L9 4.5 L7 6.4 Z" fill="#1aa6ee"/></svg>
<div class="t" style="left:2140px;top:1208.40px;font-size:6.3px;line-height:8.19px;color:#e6e6e6;letter-spacing:-0.32px;">Collection</div>
<div style="left:2144px;top:1216px;width:35px;height:8px;background:#262626;border-radius:1px;"></div>
<div class="t" style="left:2146px;top:1216.49px;font-size:5.4px;line-height:7.0200000000000005px;color:#5e5e5e;letter-spacing:-0.3px;">MPC_Clouds</div>
<svg style="left:2171px;top:1218.0px" width="6" height="4"><path d="M0 0 L6 0 L3 3.5 Z" fill="#5e5e5e"/></svg>
<svg style="left:2182px;top:1216.0px" width="18" height="8"><path d="M1 4 L4 1 L4 3 L7 3 L7 5 L4 5 L4 7 Z" fill="#4a4a4a"/><circle cx="13" cy="3.5" r="2.5" fill="none" stroke="#4a4a4a" stroke-width="1"/><path d="M11 5.5 L9.5 7" stroke="#4a4a4a" stroke-width="1"/></svg>
<svg style="left:2129.0px;top:1235.0px" width="10" height="9"><circle cx="4" cy="4.5" r="2.8" fill="#111" stroke="#c060f0" stroke-width="1.3"/><path d="M7 2.6 L9 4.5 L7 6.4 Z" fill="#c060f0"/></svg>
<div class="t" style="left:2140px;top:1230.31px;font-size:6.3px;line-height:8.19px;color:#e6e6e6;letter-spacing:-0.32px;">Parameter Name</div>
<div style="left:2143px;top:1238px;width:40px;height:10px;background:linear-gradient(#f0f0f0,#c4c4c4);border-radius:2px;"></div>
<div class="t" style="left:2146px;top:1238.84px;font-size:6.4px;line-height:8.32px;color:#333;letter-spacing:-0.1px;">CloudBias</div>
<svg style="left:2173px;top:1241.0px" width="7" height="4"><path d="M0 0 L7 0 L3.5 4 Z" fill="#111"/></svg>
<svg style="left:2129.0px;top:1254.9px" width="10" height="9"><circle cx="4" cy="4.5" r="2.8" fill="#111" stroke="#7ee030" stroke-width="1.3"/><path d="M7 2.6 L9 4.5 L7 6.4 Z" fill="#7ee030"/></svg>
<div class="t" style="left:2140px;top:1255.31px;font-size:6.3px;line-height:8.19px;color:#e6e6e6;letter-spacing:-0.32px;">Parameter Value</div>
<div style="left:2186px;top:1255px;width:13px;height:9px;border:1px solid #c8c8c8;"></div>
<div class="t" style="left:1692.5px;width:1000px;text-align:center;top:1255.70px;font-size:6.3px;line-height:8.19px;color:#e6e6e6;letter-spacing:-0.15px;">0.0</div>
<div style="left:2299px;top:713px;width:132px;height:76px;border-radius:6px;border:1px solid rgba(8,8,8,0.9);box-shadow:0 2px 3px rgba(0,0,0,0.35);"></div>
<div style="left:2300px;top:714px;width:130px;height:74px;border-radius:5px;background:rgba(14,15,14,0.82);"></div>
<div style="left:2300px;top:714px;width:130px;height:20.5px;border-radius:5px 5px 0 0;background:linear-gradient(to right,rgba(0,0,0,0) 0%,rgba(18,18,18,0.55) 100%),linear-gradient(#6a9cc4 0%,#2e5878 38%,#1f3a50 62%,#4a7aa0 100%);"></div>
<svg style="left:2303.5px;top:716px" width="9" height="9"><path d="M4.5 0.8 L8.2 4.5 L4.5 8.2 L0.8 4.5 Z" fill="none" stroke="#fff" stroke-width="1.3"/></svg>
<div class="t" style="left:2314px;top:715.49px;font-size:7.4px;line-height:9.620000000000001px;color:#f4f4f4;font-weight:bold;letter-spacing:-0.35px;text-shadow:1px 1px 1px rgba(0,0,0,0.6);">Song Of Time Played</div>
<div class="t" style="left:2314px;top:725.27px;font-size:6.2px;line-height:8.06px;color:#9cb8b8;font-style:italic;letter-spacing:-0.3px;">Target is Day Night Cycle</div>
<svg style="left:2306.0px;top:738.5px" width="9" height="10"><path d="M1 1 L4.2 1 L7.8 5 L4.2 9 L1 9 Z" fill="#f4f4f4"/></svg>
<svg style="left:2417.0px;top:738.5px" width="9" height="10"><path d="M1 1 L4.2 1 L7.8 5 L4.2 9 L1 9 Z" fill="none" stroke="#e8e8e8" stroke-width="1.1"/></svg>
<svg style="left:2305.0px;top:752.5px" width="10" height="9"><circle cx="4" cy="4.5" r="3.4" fill="#1aa6ee"/><path d="M7 2.6 L9 4.5 L7 6.4 Z" fill="#1aa6ee"/></svg>
<div class="t" style="left:2316px;top:752.90px;font-size:6.3px;line-height:8.19px;color:#e6e6e6;letter-spacing:-0.32px;">Target</div>
<svg style="left:2305.0px;top:770.5px" width="10" height="9"><circle cx="4" cy="4.5" r="2.8" fill="#111" stroke="#0a7a72" stroke-width="1.3"/><path d="M7 2.6 L9 4.5 L7 6.4 Z" fill="#0a7a72"/></svg>
<div class="t" style="left:2316px;top:765.90px;font-size:6.3px;line-height:8.19px;color:#e6e6e6;letter-spacing:-0.32px;">Season</div>
<div style="left:2319px;top:773px;width:86px;height:11px;background:linear-gradient(#f0f0f0,#c4c4c4);border-radius:2px;"></div>
<div class="t" style="left:2322px;top:774.34px;font-size:6.4px;line-height:8.32px;color:#333;letter-spacing:-0.1px;">Agnostic</div>
<svg style="left:2395px;top:776.5px" width="7" height="4"><path d="M0 0 L7 0 L3.5 4 Z" fill="#111"/></svg>
<div style="left:1507px;top:986px;width:114px;height:66px;border-radius:6px;border:1px solid rgba(8,8,8,0.9);box-shadow:0 2px 3px rgba(0,0,0,0.35);"></div>
<div style="left:1508px;top:987px;width:112px;height:64px;border-radius:5px;background:rgba(14,15,14,0.82);"></div>
<div style="left:1508px;top:987px;width:112px;height:20.5px;border-radius:5px 5px 0 0;background:linear-gradient(to right,rgba(0,0,0,0) 0%,rgba(18,18,18,0.55) 100%),linear-gradient(#6a9cc4 0%,#2e5878 38%,#1f3a50 62%,#4a7aa0 100%);"></div>
<svg style="left:1511.5px;top:987.8px" width="9" height="11"><path d="M1 10.2 C2.6 10.4 3.2 9.6 3.7 7.6 L5 2.8 C5.5 1.1 6.3 0.6 8 0.8" fill="none" stroke="#7ab8f0" stroke-width="1.2"/><path d="M2.6 4.6 L6.6 4.6" stroke="#7ab8f0" stroke-width="0.8"/></svg>
<div class="t" style="left:1522px;top:988.49px;font-size:7.4px;line-height:9.620000000000001px;color:#f4f4f4;font-weight:bold;letter-spacing:-0.35px;text-shadow:1px 1px 1px rgba(0,0,0,0.6);">Set Pitch Multiplier</div>
<div class="t" style="left:1522px;top:998.27px;font-size:6.2px;line-height:8.06px;color:#9cb8b8;font-style:italic;letter-spacing:-0.3px;">Target is Audio Component</div>
<svg style="left:1512.5px;top:1010.5px" width="9" height="10"><path d="M1 1 L4.2 1 L7.8 5 L4.2 9 L1 9 Z" fill="#f4f4f4"/></svg>
<svg style="left:1607.0px;top:1010.5px" width="9" height="10"><path d="M1 1 L4.2 1 L7.8 5 L4.2 9 L1 9 Z" fill="#f4f4f4"/></svg>
<svg style="left:1513.0px;top:1024.5px" width="10" height="9"><circle cx="4" cy="4.5" r="3.4" fill="#1aa6ee"/><path d="M7 2.6 L9 4.5 L7 6.4 Z" fill="#1aa6ee"/></svg>
<div class="t" style="left:1524px;top:1024.90px;font-size:6.3px;line-height:8.19px;color:#e6e6e6;letter-spacing:-0.32px;">Target</div>
<svg style="left:1513.0px;top:1038.5px" width="10" height="9"><circle cx="4" cy="4.5" r="2.8" fill="#111" stroke="#7ee030" stroke-width="1.3"/><path d="M7 2.6 L9 4.5 L7 6.4 Z" fill="#7ee030"/></svg>
<div class="t" style="left:1524px;top:1038.90px;font-size:6.3px;line-height:8.19px;color:#e6e6e6;letter-spacing:-0.32px;">New Pitch Multiplier</div>
<div style="left:1581px;top:1039px;width:13px;height:8.5px;border:1px solid #c8c8c8;"></div>
<div class="t" style="left:1087.5px;width:1000px;text-align:center;top:1039.45px;font-size:6.3px;line-height:8.19px;color:#e6e6e6;letter-spacing:-0.15px;">2.5</div>
<div style="left:1675px;top:985px;width:104px;height:74px;border-radius:6px;border:1px solid rgba(8,8,8,0.9);box-shadow:0 2px 3px rgba(0,0,0,0.35);"></div>
<div style="left:1676px;top:986px;width:102px;height:72px;border-radius:5px;background:rgba(14,15,14,0.82);"></div>
<div style="left:1676px;top:986px;width:102px;height:20.5px;border-radius:5px 5px 0 0;background:linear-gradient(to right,rgba(0,0,0,0) 0%,rgba(18,18,18,0.55) 100%),linear-gradient(#6a9cc4 0%,#2e5878 38%,#1f3a50 62%,#4a7aa0 100%);"></div>
<svg style="left:1679.5px;top:986.8px" width="9" height="11"><path d="M1 10.2 C2.6 10.4 3.2 9.6 3.7 7.6 L5 2.8 C5.5 1.1 6.3 0.6 8 0.8" fill="none" stroke="#7ab8f0" stroke-width="1.2"/><path d="M2.6 4.6 L6.6 4.6" stroke="#7ab8f0" stroke-width="0.8"/></svg>
<div class="t" style="left:1690px;top:987.49px;font-size:7.4px;line-height:9.620000000000001px;color:#f4f4f4;font-weight:bold;letter-spacing:-0.35px;text-shadow:1px 1px 1px rgba(0,0,0,0.6);">Set Volume Multiplier</div>
<div class="t" style="left:1690px;top:997.27px;font-size:6.2px;line-height:8.06px;color:#9cb8b8;font-style:italic;letter-spacing:-0.3px;">Target is Audio Component</div>
<svg style="left:1680.5px;top:1010.0px" width="9" height="10"><path d="M1 1 L4.2 1 L7.8 5 L4.2 9 L1 9 Z" fill="#f4f4f4"/></svg>
<svg style="left:1765.0px;top:1010.0px" width="9" height="10"><path d="M1 1 L4.2 1 L7.8 5 L4.2 9 L1 9 Z" fill="#f4f4f4"/></svg>
<svg style="left:1681.0px;top:1024.0px" width="10" height="9"><circle cx="4" cy="4.5" r="3.4" fill="#1aa6ee"/><path d="M7 2.6 L9 4.5 L7 6.4 Z" fill="#1aa6ee"/></svg>
<div class="t" style="left:1692px;top:1024.40px;font-size:6.3px;line-height:8.19px;color:#e6e6e6;letter-spacing:-0.32px;">Target</div>
<svg style="left:1681.0px;top:1040.5px" width="10" height="9"><circle cx="4" cy="4.5" r="2.8" fill="#111" stroke="#7ee030" stroke-width="1.3"/><path d="M7 2.6 L9 4.5 L7 6.4 Z" fill="#7ee030"/></svg>
<div class="t" style="left:1692px;top:1036.90px;font-size:6.3px;line-height:8.19px;color:#e6e6e6;letter-spacing:-0.32px;">New Volume Multiplier</div>
<div style="left:1694px;top:1046px;width:13px;height:8px;border:1px solid #c8c8c8;"></div>
<div class="t" style="left:1200.5px;width:1000px;text-align:center;top:1046.20px;font-size:6.3px;line-height:8.19px;color:#e6e6e6;letter-spacing:-0.15px;">2.0</div>
<div style="left:1427px;top:1073px;width:104px;height:74px;border-radius:6px;border:1px solid rgba(8,8,8,0.9);box-shadow:0 2px 3px rgba(0,0,0,0.35);"></div>
<div style="left:1428px;top:1074px;width:102px;height:72px;border-radius:5px;background:rgba(14,15,14,0.82);"></div>
<div style="left:1428px;top:1074px;width:102px;height:20.5px;border-radius:5px 5px 0 0;background:linear-gradient(to right,rgba(0,0,0,0) 0%,rgba(18,18,18,0.55) 100%),linear-gradient(#6a9cc4 0%,#2e5878 38%,#1f3a50 62%,#4a7aa0 100%);"></div>
<svg style="left:1431.5px;top:1074.8px" width="9" height="11"><path d="M1 10.2 C2.6 10.4 3.2 9.6 3.7 7.6 L5 2.8 C5.5 1.1 6.3 0.6 8 0.8" fill="none" stroke="#7ab8f0" stroke-width="1.2"/><path d="M2.6 4.6 L6.6 4.6" stroke="#7ab8f0" stroke-width="0.8"/></svg>
<div class="t" style="left:1442px;top:1075.49px;font-size:7.4px;line-height:9.620000000000001px;color:#f4f4f4;font-weight:bold;letter-spacing:-0.35px;text-shadow:1px 1px 1px rgba(0,0,0,0.6);">Set Volume Multiplier</div>
<div class="t" style="left:1442px;top:1085.27px;font-size:6.2px;line-height:8.06px;color:#9cb8b8;font-style:italic;letter-spacing:-0.3px;">Target is Audio Component</div>
<svg style="left:1432.5px;top:1098.0px" width="9" height="10"><path d="M1 1 L4.2 1 L7.8 5 L4.2 9 L1 9 Z" fill="#f4f4f4"/></svg>
<svg style="left:1517.0px;top:1098.0px" width="9" height="10"><path d="M1 1 L4.2 1 L7.8 5 L4.2 9 L1 9 Z" fill="#f4f4f4"/></svg>
<svg style="left:1433.0px;top:1112.0px" width="10" height="9"><circle cx="4" cy="4.5" r="3.4" fill="#1aa6ee"/><path d="M7 2.6 L9 4.5 L7 6.4 Z" fill="#1aa6ee"/></svg>
<div class="t" style="left:1444px;top:1112.40px;font-size:6.3px;line-height:8.19px;color:#e6e6e6;letter-spacing:-0.32px;">Target</div>
<svg style="left:1433.0px;top:1128.5px" width="10" height="9"><circle cx="4" cy="4.5" r="2.8" fill="#111" stroke="#7ee030" stroke-width="1.3"/><path d="M7 2.6 L9 4.5 L7 6.4 Z" fill="#7ee030"/></svg>
<div class="t" style="left:1444px;top:1124.90px;font-size:6.3px;line-height:8.19px;color:#e6e6e6;letter-spacing:-0.32px;">New Volume Multiplier</div>
<div style="left:1446px;top:1134px;width:13px;height:8px;border:1px solid #c8c8c8;"></div>
<div class="t" style="left:952.5px;width:1000px;text-align:center;top:1134.20px;font-size:6.3px;line-height:8.19px;color:#e6e6e6;letter-spacing:-0.15px;">0.7</div>
<div style="left:1548px;top:1081px;width:135px;height:67px;border-radius:6px;border:1px solid rgba(8,8,8,0.9);box-shadow:0 2px 3px rgba(0,0,0,0.35);"></div>
<div style="left:1549px;top:1082px;width:133px;height:65px;border-radius:5px;background:rgba(14,15,14,0.82);"></div>
<div style="left:1549px;top:1082px;width:133px;height:12px;border-radius:5px 5px 0 0;background:linear-gradient(to right,rgba(0,0,0,0) 0%,rgba(18,18,18,0.55) 100%),linear-gradient(#6a9cc4 0%,#2e5878 38%,#1f3a50 62%,#4a7aa0 100%);"></div>
<svg style="left:1552.5px;top:1082.8px" width="9" height="11"><path d="M1 10.2 C2.6 10.4 3.2 9.6 3.7 7.6 L5 2.8 C5.5 1.1 6.3 0.6 8 0.8" fill="none" stroke="#7ab8f0" stroke-width="1.2"/><path d="M2.6 4.6 L6.6 4.6" stroke="#7ab8f0" stroke-width="0.8"/></svg>
<div class="t" style="left:1563px;top:1083.49px;font-size:7.4px;line-height:9.620000000000001px;color:#f4f4f4;font-weight:bold;letter-spacing:-0.35px;text-shadow:1px 1px 1px rgba(0,0,0,0.6);">Get All Actors Of Class with Tag</div>
<svg style="left:1553.5px;top:1097.9px" width="9" height="10"><path d="M1 1 L4.2 1 L7.8 5 L4.2 9 L1 9 Z" fill="#f4f4f4"/></svg>
<svg style="left:1669.0px;top:1097.9px" width="9" height="10"><path d="M1 1 L4.2 1 L7.8 5 L4.2 9 L1 9 Z" fill="#f4f4f4"/></svg>
<svg style="left:1554.0px;top:1116.5px" width="10" height="9"><circle cx="4" cy="4.5" r="2.8" fill="#111" stroke="#5a10c0" stroke-width="1.3"/><path d="M7 2.6 L9 4.5 L7 6.4 Z" fill="#5a10c0"/></svg>
<div class="t" style="left:1565px;top:1112.61px;font-size:6.3px;line-height:8.19px;color:#e6e6e6;letter-spacing:-0.32px;">Actor Class</div>
<div style="left:1569px;top:1120px;width:43px;height:8px;background:#262626;border-radius:1px;"></div>
<div class="t" style="left:1571px;top:1120.49px;font-size:5.4px;line-height:7.0200000000000005px;color:#5e5e5e;letter-spacing:-0.3px;">BP Winter Snow</div>
<svg style="left:1604px;top:1122.0px" width="6" height="4"><path d="M0 0 L6 0 L3 3.5 Z" fill="#5e5e5e"/></svg>
<svg style="left:1615px;top:1120.0px" width="18" height="8"><path d="M1 4 L4 1 L4 3 L7 3 L7 5 L4 5 L4 7 Z" fill="#4a4a4a"/><circle cx="13" cy="3.5" r="2.5" fill="none" stroke="#4a4a4a" stroke-width="1"/><path d="M11 5.5 L9.5 7" stroke="#4a4a4a" stroke-width="1"/></svg>
<div class="t" style="right:893px;top:1112.61px;font-size:6.3px;line-height:8.19px;color:#e6e6e6;letter-spacing:-0.32px;">Out Actors</div>
<svg style="left:1669.0px;top:1112.2px" width="9" height="9"><rect x="1.0" y="1.0" width="2" height="2" fill="#1aa6ee"/><rect x="1.0" y="3.6" width="2" height="2" fill="#1aa6ee"/><rect x="1.0" y="6.2" width="2" height="2" fill="#1aa6ee"/><rect x="3.6" y="1.0" width="2" height="2" fill="#1aa6ee"/><rect x="3.6" y="3.6" width="2" height="2" fill="#1aa6ee"/><rect x="3.6" y="6.2" width="2" height="2" fill="#1aa6ee"/><rect x="6.2" y="1.0" width="2" height="2" fill="#1aa6ee"/><rect x="6.2" y="3.6" width="2" height="2" fill="#1aa6ee"/><rect x="6.2" y="6.2" width="2" height="2" fill="#1aa6ee"/></svg>
<svg style="left:1554.0px;top:1135.0px" width="10" height="9"><circle cx="4" cy="4.5" r="2.8" fill="#111" stroke="#d070f0" stroke-width="1.3"/><path d="M7 2.6 L9 4.5 L7 6.4 Z" fill="#d070f0"/></svg>
<div class="t" style="left:1565px;top:1135.40px;font-size:6.3px;line-height:8.19px;color:#e6e6e6;letter-spacing:-0.32px;">Tag</div>
<div style="left:1578px;top:1135px;width:41px;height:8.5px;border:1px solid #c8c8c8;"></div>
<div class="t" style="left:1098.5px;width:1000px;text-align:center;top:1135.45px;font-size:6.3px;line-height:8.19px;color:#e6e6e6;letter-spacing:-0.15px;">AmbientSnow</div>
<div style="left:1708px;top:1122px;width:92px;height:38px;border-radius:6px;background:rgba(8,8,8,0.9);box-shadow:0 2px 3px rgba(0,0,0,0.35);"></div>
<div style="left:1709px;top:1123px;width:90px;height:36px;border-radius:5px;background:linear-gradient(#4a4a4a,#3c3c3c 40%,#404040);"></div>
<svg style="left:1738px;top:1126px" width="31" height="31"><rect x="0.0" y="0.0" width="9" height="9" fill="#2a5a80" opacity="0.5"/><rect x="0.0" y="10.5" width="9" height="9" fill="#2a5a80" opacity="0.5"/><rect x="0.0" y="21.0" width="9" height="9" fill="#2a5a80" opacity="0.5"/><rect x="10.5" y="0.0" width="9" height="9" fill="#2a5a80" opacity="0.5"/><rect x="10.5" y="10.5" width="9" height="9" fill="#2a5a80" opacity="0.5"/><rect x="10.5" y="21.0" width="9" height="9" fill="#2a5a80" opacity="0.5"/><rect x="21.0" y="0.0" width="9" height="9" fill="#2a5a80" opacity="0.5"/><rect x="21.0" y="10.5" width="9" height="9" fill="#2a5a80" opacity="0.5"/><rect x="21.0" y="21.0" width="9" height="9" fill="#2a5a80" opacity="0.5"/></svg>
<div class="t" style="left:1253px;width:1000px;text-align:center;top:1133.70px;font-size:12px;line-height:15.600000000000001px;color:#98a8b0;font-weight:bold;letter-spacing:-0.3px;">GET</div>
<svg style="left:1712.5px;top:1129.5px" width="9" height="9"><rect x="1.0" y="1.0" width="2" height="2" fill="#1aa6ee"/><rect x="1.0" y="3.6" width="2" height="2" fill="#1aa6ee"/><rect x="1.0" y="6.2" width="2" height="2" fill="#1aa6ee"/><rect x="3.6" y="1.0" width="2" height="2" fill="#1aa6ee"/><rect x="3.6" y="3.6" width="2" height="2" fill="#1aa6ee"/><rect x="3.6" y="6.2" width="2" height="2" fill="#1aa6ee"/><rect x="6.2" y="1.0" width="2" height="2" fill="#1aa6ee"/><rect x="6.2" y="3.6" width="2" height="2" fill="#1aa6ee"/><rect x="6.2" y="6.2" width="2" height="2" fill="#1aa6ee"/></svg>
<svg style="left:1713.0px;top:1142.5px" width="10" height="9"><circle cx="4" cy="4.5" r="2.8" fill="#111" stroke="#20c0a0" stroke-width="1.3"/><path d="M7 2.6 L9 4.5 L7 6.4 Z" fill="#20c0a0"/></svg>
<div style="left:1727px;top:1143px;width:9px;height:8px;border:1px solid #c8c8c8;"></div>
<div class="t" style="left:1231.5px;width:1000px;text-align:center;top:1143.20px;font-size:6.3px;line-height:8.19px;color:#e6e6e6;letter-spacing:-0.15px;">0</div>
<svg style="left:1785.0px;top:1137.0px" width="10" height="9"><circle cx="4" cy="4.5" r="3.4" fill="#1aa6ee"/></svg>
<div style="left:1955px;top:1073px;width:150px;height:98px;border-radius:6px;border:1px solid rgba(8,8,8,0.9);box-shadow:0 2px 3px rgba(0,0,0,0.35);"></div>
<div style="left:1956px;top:1074px;width:148px;height:96px;border-radius:5px;background:rgba(14,15,14,0.82);"></div>
<div style="left:1956px;top:1074px;width:148px;height:20.5px;border-radius:5px 5px 0 0;background:linear-gradient(to right,rgba(0,0,0,0) 0%,rgba(18,18,18,0.55) 100%),linear-gradient(#6a9cc4 0%,#2e5878 38%,#1f3a50 62%,#4a7aa0 100%);"></div>
<svg style="left:1959.5px;top:1074.8px" width="9" height="11"><path d="M1 10.2 C2.6 10.4 3.2 9.6 3.7 7.6 L5 2.8 C5.5 1.1 6.3 0.6 8 0.8" fill="none" stroke="#7ab8f0" stroke-width="1.2"/><path d="M2.6 4.6 L6.6 4.6" stroke="#7ab8f0" stroke-width="0.8"/></svg>
<div class="t" style="left:1970px;top:1075.49px;font-size:7.4px;line-height:9.620000000000001px;color:#f4f4f4;font-weight:bold;letter-spacing:-0.35px;text-shadow:1px 1px 1px rgba(0,0,0,0.6);">Set Niagara Variable (Vector3)</div>
<div class="t" style="left:1970px;top:1085.27px;font-size:6.2px;line-height:8.06px;color:#9cb8b8;font-style:italic;letter-spacing:-0.3px;">Target is Niagara Particle System</div>
<svg style="left:1960.5px;top:1098.5px" width="9" height="10"><path d="M1 1 L4.2 1 L7.8 5 L4.2 9 L1 9 Z" fill="#f4f4f4"/></svg>
<svg style="left:2090.5px;top:1098.5px" width="9" height="10"><path d="M1 1 L4.2 1 L7.8 5 L4.2 9 L1 9 Z" fill="#f4f4f4"/></svg>
<svg style="left:1961.0px;top:1112.2px" width="10" height="9"><circle cx="4" cy="4.5" r="3.4" fill="#1aa6ee"/><path d="M7 2.6 L9 4.5 L7 6.4 Z" fill="#1aa6ee"/></svg>
<div class="t" style="left:1972px;top:1112.61px;font-size:6.3px;line-height:8.19px;color:#e6e6e6;letter-spacing:-0.32px;">Target</div>
<svg style="left:1961.0px;top:1129.5px" width="10" height="9"><circle cx="4" cy="4.5" r="2.8" fill="#111" stroke="#c060f0" stroke-width="1.3"/><path d="M7 2.6 L9 4.5 L7 6.4 Z" fill="#c060f0"/></svg>
<div class="t" style="left:1972px;top:1125.61px;font-size:6.3px;line-height:8.19px;color:#e6e6e6;letter-spacing:-0.32px;">In Variable Name</div>
<div style="left:1975px;top:1134px;width:37px;height:8px;border:1px solid #c8c8c8;"></div>
<div class="t" style="left:1493.5px;width:1000px;text-align:center;top:1134.20px;font-size:6.3px;line-height:8.19px;color:#e6e6e6;letter-spacing:-0.15px;">VelocityMin</div>
<svg style="left:1961.0px;top:1153.2px" width="10" height="9"><circle cx="4" cy="4.5" r="2.8" fill="#111" stroke="#f0b020" stroke-width="1.3"/><path d="M7 2.6 L9 4.5 L7 6.4 Z" fill="#f0b020"/></svg>
<div class="t" style="left:1972px;top:1147.90px;font-size:6.3px;line-height:8.19px;color:#e6e6e6;letter-spacing:-0.32px;">In Value</div>
<div style="left:1976px;top:1156px;width:30px;height:9.5px;border:1px solid #b8b8b8;"></div>
<div class="t" style="left:1978px;top:1156.59px;font-size:6.4px;line-height:8.32px;color:#6a6a6a;letter-spacing:0px;">X</div>
<div class="t" style="right:556px;top:1156.20px;font-size:7px;line-height:9.1px;color:#eee;letter-spacing:-0.1px;">800.0</div>
<div style="left:2008px;top:1156px;width:32px;height:9.5px;border:1px solid #b8b8b8;"></div>
<div class="t" style="left:2010px;top:1156.59px;font-size:6.4px;line-height:8.32px;color:#6a6a6a;letter-spacing:0px;">Y</div>
<div class="t" style="right:522px;top:1156.20px;font-size:7px;line-height:9.1px;color:#eee;letter-spacing:-0.1px;">-100.0</div>
<div style="left:2042px;top:1156px;width:32px;height:9.5px;border:1px solid #b8b8b8;"></div>
<div class="t" style="left:2044px;top:1156.59px;font-size:6.4px;line-height:8.32px;color:#6a6a6a;letter-spacing:0px;">Z</div>
<div class="t" style="right:488px;top:1156.20px;font-size:7px;line-height:9.1px;color:#eee;letter-spacing:-0.1px;">-500.0</div>
<div style="left:1955px;top:1170px;width:150px;height:98px;border-radius:6px;border:1px solid rgba(8,8,8,0.9);box-shadow:0 2px 3px rgba(0,0,0,0.35);"></div>
<div style="left:1956px;top:1171px;width:148px;height:96px;border-radius:5px;background:rgba(14,15,14,0.82);"></div>
<div style="left:1956px;top:1171px;width:148px;height:20.5px;border-radius:5px 5px 0 0;background:linear-gradient(to right,rgba(0,0,0,0) 0%,rgba(18,18,18,0.55) 100%),linear-gradient(#6a9cc4 0%,#2e5878 38%,#1f3a50 62%,#4a7aa0 100%);"></div>
<svg style="left:1959.5px;top:1171.8px" width="9" height="11"><path d="M1 10.2 C2.6 10.4 3.2 9.6 3.7 7.6 L5 2.8 C5.5 1.1 6.3 0.6 8 0.8" fill="none" stroke="#7ab8f0" stroke-width="1.2"/><path d="M2.6 4.6 L6.6 4.6" stroke="#7ab8f0" stroke-width="0.8"/></svg>
<div class="t" style="left:1970px;top:1172.49px;font-size:7.4px;line-height:9.620000000000001px;color:#f4f4f4;font-weight:bold;letter-spacing:-0.35px;text-shadow:1px 1px 1px rgba(0,0,0,0.6);">Set Niagara Variable (Vector3)</div>
<div class="t" style="left:1970px;top:1182.27px;font-size:6.2px;line-height:8.06px;color:#9cb8b8;font-style:italic;letter-spacing:-0.3px;">Target is Niagara Particle System</div>
<svg style="left:1960.5px;top:1195.5px" width="9" height="10"><path d="M1 1 L4.2 1 L7.8 5 L4.2 9 L1 9 Z" fill="#f4f4f4"/></svg>
<svg style="left:2090.5px;top:1195.5px" width="9" height="10"><path d="M1 1 L4.2 1 L7.8 5 L4.2 9 L1 9 Z" fill="#f4f4f4"/></svg>
<svg style="left:1961.0px;top:1209.2px" width="10" height="9"><circle cx="4" cy="4.5" r="3.4" fill="#1aa6ee"/><path d="M7 2.6 L9 4.5 L7 6.4 Z" fill="#1aa6ee"/></svg>
<div class="t" style="left:1972px;top:1209.61px;font-size:6.3px;line-height:8.19px;color:#e6e6e6;letter-spacing:-0.32px;">Target</div>
<svg style="left:1961.0px;top:1226.5px" width="10" height="9"><circle cx="4" cy="4.5" r="2.8" fill="#111" stroke="#c060f0" stroke-width="1.3"/><path d="M7 2.6 L9 4.5 L7 6.4 Z" fill="#c060f0"/></svg>
<div class="t" style="left:1972px;top:1222.61px;font-size:6.3px;line-height:8.19px;color:#e6e6e6;letter-spacing:-0.32px;">In Variable Name</div>
<div style="left:1975px;top:1231px;width:37px;height:8px;border:1px solid #c8c8c8;"></div>
<div class="t" style="left:1493.5px;width:1000px;text-align:center;top:1231.20px;font-size:6.3px;line-height:8.19px;color:#e6e6e6;letter-spacing:-0.15px;">VelocityMax</div>
<svg style="left:1961.0px;top:1250.2px" width="10" height="9"><circle cx="4" cy="4.5" r="2.8" fill="#111" stroke="#f0b020" stroke-width="1.3"/><path d="M7 2.6 L9 4.5 L7 6.4 Z" fill="#f0b020"/></svg>
<div class="t" style="left:1972px;top:1244.90px;font-size:6.3px;line-height:8.19px;color:#e6e6e6;letter-spacing:-0.32px;">In Value</div>
<div style="left:1976px;top:1253px;width:30px;height:9.5px;border:1px solid #b8b8b8;"></div>
<div class="t" style="left:1978px;top:1253.59px;font-size:6.4px;line-height:8.32px;color:#6a6a6a;letter-spacing:0px;">X</div>
<div class="t" style="right:556px;top:1253.20px;font-size:7px;line-height:9.1px;color:#eee;letter-spacing:-0.1px;">1500.0</div>
<div style="left:2008px;top:1253px;width:32px;height:9.5px;border:1px solid #b8b8b8;"></div>
<div class="t" style="left:2010px;top:1253.59px;font-size:6.4px;line-height:8.32px;color:#6a6a6a;letter-spacing:0px;">Y</div>
<div class="t" style="right:522px;top:1253.20px;font-size:7px;line-height:9.1px;color:#eee;letter-spacing:-0.1px;">100.0</div>
<div style="left:2042px;top:1253px;width:32px;height:9.5px;border:1px solid #b8b8b8;"></div>
<div class="t" style="left:2044px;top:1253.59px;font-size:6.4px;line-height:8.32px;color:#6a6a6a;letter-spacing:0px;">Z</div>
<div class="t" style="right:488px;top:1253.20px;font-size:7px;line-height:9.1px;color:#eee;letter-spacing:-0.1px;">-250.0</div>
<div style="left:306px;top:139px;width:2251px;height:42px;background:rgba(5,5,5,0.62);"></div>
<svg style="left:313px;top:149px" width="19" height="18"><path d="M9.5 1 L12 7 L18.5 7.2 L13.4 11.2 L15.2 17.5 L9.5 13.8 L3.8 17.5 L5.6 11.2 L0.5 7.2 L7 7 Z" fill="none" stroke="#e0e0e0" stroke-width="1.4"/></svg>
<div style="left:339px;top:143px;width:1px;height:34px;background:#6a6a6a;"></div>
<div style="left:426px;top:143px;width:1px;height:34px;background:#6a6a6a;"></div>
<svg style="left:351px;top:150px" width="17" height="17"><path d="M0 8.5 L9 0 L9 5 L16 5 L16 12 L9 12 L9 17 Z" fill="#d8ecf8"/></svg>
<svg style="left:393px;top:150px" width="17" height="17"><path d="M17 8.5 L8 0 L8 5 L1 5 L1 12 L8 12 L8 17 Z" fill="#8a8a8a"/></svg>
<svg style="left:437px;top:150px" width="25" height="18"><rect x="7" y="0" width="7" height="6" fill="#7a96d8"/><rect x="16" y="0" width="8" height="6" fill="#9ab4ec"/><rect x="0" y="8" width="14" height="10" fill="#6a86c8"/><rect x="16" y="9" width="8" height="6" fill="#8aa4e0"/></svg>
<div class="t" style="left:476px;top:147.12px;font-size:19px;line-height:23.75px;color:#a8a8a8;">StormManager</div>
<svg style="left:612px;top:152px" width="10" height="14"><path d="M1 1 L8 7 L1 13" fill="none" stroke="#ddd" stroke-width="1.6"/></svg>
<div class="t" style="left:631px;top:146.12px;font-size:19px;line-height:23.75px;color:#a8a8a8;">Event Graph</div>
<div class="t" style="right:9px;top:143.88px;font-size:21px;line-height:26.25px;color:#363636;font-weight:bold;transform-origin:100% 50%;transform:scaleX(0.85);">Zoom -4</div>
<div style="left:0px;top:1552px;width:2560px;height:48px;background:#232323;"></div>
<div style="left:0px;top:1200px;width:900px;height:400px;background:radial-gradient(ellipse 500px 350px at 160px 400px,rgba(0,0,0,0.8) 0%,rgba(0,0,0,0.62) 30%,rgba(0,0,0,0.25) 65%,rgba(0,0,0,0) 100%);"></div>
<div class="t" style="left:9.1px;top:1446.3px;font-size:167.7px;line-height:167.7px;font-family:'Liberation Serif',serif;font-weight:bold;color:#fff;transform-origin:0 0;transform:scaleX(0.7);-webkit-text-stroke:2px #fff;">G</div>
<div class="t" style="left:103px;top:1474.5px;font-size:24.6px;line-height:24.6px;font-family:'Liberation Serif',serif;font-weight:bold;color:#fff;transform-origin:0 0;transform:scaleX(0.775);-webkit-text-stroke:0.7px #fff;letter-spacing:1.5px;">SONGS OF THE</div>
<div class="t" style="left:101.94px;top:1490.4px;font-size:81px;line-height:81px;font-family:'Liberation Serif',serif;font-weight:bold;color:#fff;transform-origin:0 0;transform:scaleX(0.755);-webkit-text-stroke:2px #fff;">O</div>
<div class="t" style="left:156.78px;top:1490.4px;font-size:81px;line-height:81px;font-family:'Liberation Serif',serif;font-weight:bold;color:#fff;transform-origin:0 0;transform:scaleX(0.752);-webkit-text-stroke:2px #fff;">D</div>
<div class="t" style="left:208.37px;top:1490.4px;font-size:81px;line-height:81px;font-family:'Liberation Serif',serif;font-weight:bold;color:#fff;transform-origin:0 0;transform:scaleX(0.76);-webkit-text-stroke:2px #fff;">D</div>
<div class="t" style="left:259.38px;top:1490.4px;font-size:81px;line-height:81px;font-family:'Liberation Serif',serif;font-weight:bold;color:#fff;transform-origin:0 0;transform:scaleX(0.692);-webkit-text-stroke:2px #fff;">E</div>
<div class="t" style="left:305.98px;top:1490.4px;font-size:81px;line-height:81px;font-family:'Liberation Serif',serif;font-weight:bold;color:#fff;transform-origin:0 0;transform:scaleX(0.828);-webkit-text-stroke:2px #fff;">S</div>
<div class="t" style="left:349.66px;top:1490.4px;font-size:81px;line-height:81px;font-family:'Liberation Serif',serif;font-weight:bold;color:#fff;transform-origin:0 0;transform:scaleX(0.892);-webkit-text-stroke:2px #fff;">S</div>
<svg style="left:0;top:1470px" width="140" height="130"><path d="M37 20 C27 34 24 48 24 60 C24 74 28 92 38 106" fill="none" stroke="#141414" stroke-width="3.2"/><path d="M26 55 L31 61 L26 67 L21 61 Z" fill="#fff"/><path d="M126 53 L131 61 L126 70 L121 61 Z" fill="#fff"/></svg>
</body></html>
